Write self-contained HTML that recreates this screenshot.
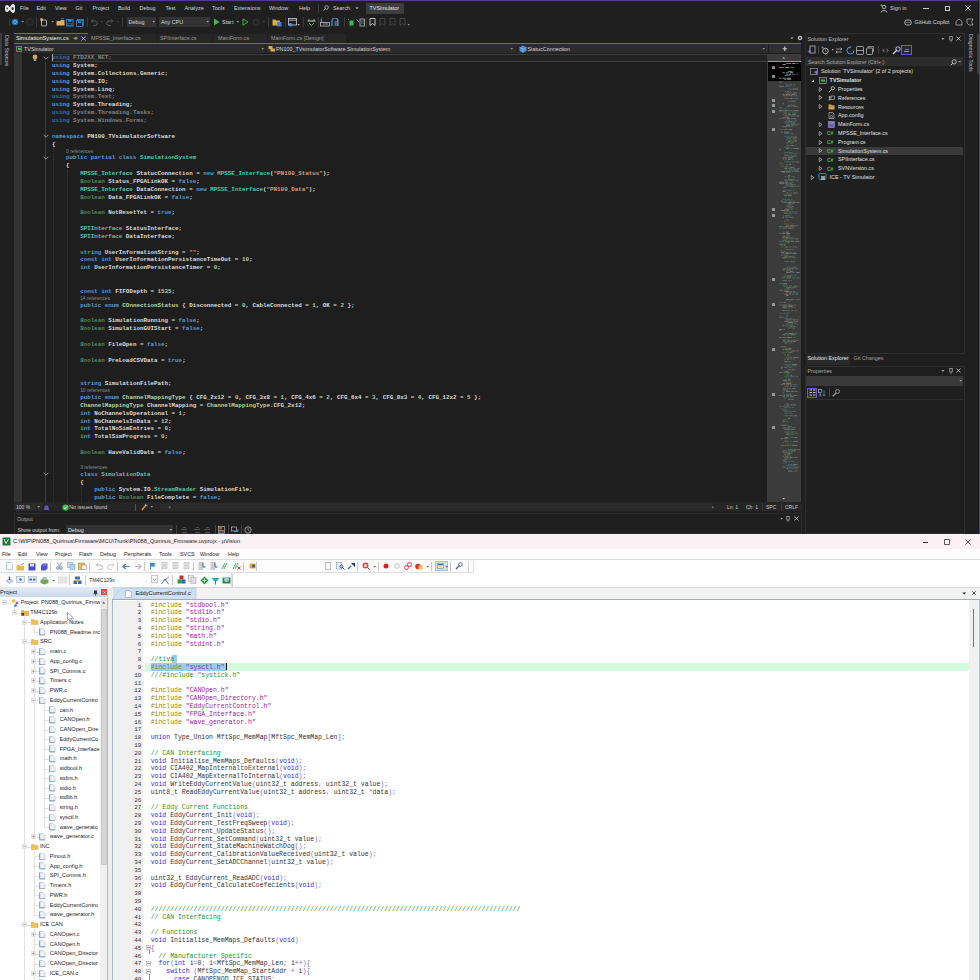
<!DOCTYPE html><html><head><meta charset="utf-8"><style>
*{margin:0;padding:0;box-sizing:border-box}
html,body{width:980px;height:980px;overflow:hidden;background:#1f1f1f}
.a{position:absolute}
.t{white-space:pre}
.u{font-family:"Liberation Mono",monospace;font-size:6.49px;line-height:7.8px}
.m{font-family:"Liberation Mono",monospace;font-size:5.86px;line-height:7.85px;font-weight:bold}
</style></head><body><div class="a" style="left:0px;top:0px;width:980px;height:534px;background:#1f1f1f;"></div>
<div class="a" style="left:0px;top:0px;width:980px;height:1px;background:#523a90;"></div>
<div class="a" style="left:979px;top:0px;width:1px;height:534px;background:#4e4191;"></div>
<div class="a" style="left:978px;top:0px;width:1px;height:534px;background:#1a1a1a;"></div>
<div class="a" style="left:0px;top:33px;width:2px;height:32px;background:#3d3d3d;"></div>
<div class="a" style="left:14px;top:53px;width:752px;height:449px;background:#1e1e1e;"></div>
<div class="a" style="left:14px;top:53px;width:8px;height:449px;background:#333333;"></div>
<div class="a" style="left:52px;top:54px;width:714.5px;height:7.6px;background:#222222;border-top:0.7px solid #3c3c3c;border-bottom:0.7px solid #3c3c3c;"></div>
<div class="a" style="left:14px;top:33px;width:74px;height:10px;background:#2b2b2b;"></div>
<div class="a" style="left:14px;top:33px;width:74px;height:1px;background:#6b58cc;"></div>
<div class="a" style="left:88px;top:34px;width:69px;height:9px;background:#262626;"></div>
<div class="a" style="left:158px;top:34px;width:54px;height:9px;background:#262626;"></div>
<div class="a" style="left:213px;top:34px;width:54px;height:9px;background:#262626;"></div>
<div class="a" style="left:268px;top:34px;width:78px;height:9px;background:#262626;"></div>
<div class="a" style="left:14px;top:43px;width:787px;height:1px;background:#6b58cc;"></div>
<div class="a" style="left:14px;top:44px;width:787px;height:9px;background:#2b2b2b;"></div>
<div class="a" style="left:766px;top:44px;width:35px;height:9px;background:#2f2f2f;"></div>
<div class="a" style="left:767px;top:54px;width:34px;height:448px;background:#3b3b3b;"></div>
<div class="a" style="left:768px;top:62px;width:33px;height:19px;background:#000000;"></div>
<div class="a" style="left:14px;top:502px;width:788px;height:9px;background:#252525;"></div>
<div class="a" style="left:14px;top:513px;width:788px;height:21px;background:#1f1f1f;border:1px solid #2d2d2d;"></div>
<div class="a" style="left:805px;top:33px;width:160px;height:321px;background:#1f1f1f;border:1px solid #2e2e2e;"></div>
<div class="a" style="left:806px;top:57px;width:157px;height:9px;background:#2d2d2d;"></div>
<div class="a" style="left:806px;top:146.5px;width:157px;height:8.5px;background:#3a3a3a;"></div>
<div class="a" style="left:805px;top:366px;width:160px;height:168px;background:#1f1f1f;border:1px solid #2e2e2e;"></div>
<div class="a" style="left:806px;top:376px;width:157px;height:10px;background:#3a3a3a;"></div>
<div class="a" style="left:0px;top:534px;width:980px;height:446px;background:#ffffff;"></div>
<div class="a" style="left:0px;top:534px;width:980px;height:14.5px;background:#fbf0f3;"></div>
<div class="a" style="left:0px;top:548.5px;width:980px;height:38.5px;background:#ffffff;"></div>
<div class="a" style="left:0px;top:560px;width:474px;height:13px;background:#fcfcfc;border-bottom:0.7px solid #dedede;border-right:0.7px solid #e0e0e0;"></div>
<div class="a" style="left:0px;top:573px;width:232px;height:13.5px;background:#fcfcfc;border-right:0.7px solid #e0e0e0;"></div>
<div class="a" style="left:0px;top:587px;width:980px;height:12.5px;background:#f2f2f2;"></div>
<div class="a" style="left:0px;top:587px;width:108px;height:10px;background:#d5e1ee;"></div>
<div class="a" style="left:0px;top:597px;width:108px;height:383px;background:#ffffff;"></div>
<div class="a" style="left:100px;top:598px;width:7px;height:382px;background:#e8e8e8;"></div>
<div class="a" style="left:112px;top:599px;width:868px;height:381px;background:#ffffff;border-left:1px solid #a0a0a0;border-top:1px solid #a0a0a0;"></div>
<div class="a" style="left:113px;top:600px;width:32px;height:380px;background:#f0f0f0;"></div>
<div class="a" style="left:113px;top:588px;width:83px;height:11px;background:#cfe0f3;"></div>
<div class="a t m" style="left:52.00px;top:54.18px"><span style="color:#3d6f99">using</span><span style="color:#858585"> FTD2XX_NET;</span></div>
<div class="a t m" style="left:52.00px;top:62.02px"><span style="color:#569CD6">using</span><span style="color:#DCDCDC"> System;</span></div>
<div class="a t m" style="left:52.00px;top:69.88px"><span style="color:#569CD6">using</span><span style="color:#DCDCDC"> System.Collections.Generic;</span></div>
<div class="a t m" style="left:52.00px;top:77.72px"><span style="color:#569CD6">using</span><span style="color:#DCDCDC"> System.IO;</span></div>
<div class="a t m" style="left:52.00px;top:85.57px"><span style="color:#569CD6">using</span><span style="color:#DCDCDC"> System.Linq;</span></div>
<div class="a t m" style="left:52.00px;top:93.42px"><span style="color:#3d6f99">using</span><span style="color:#858585"> System.Text;</span></div>
<div class="a t m" style="left:52.00px;top:101.27px"><span style="color:#569CD6">using</span><span style="color:#DCDCDC"> System.Threading;</span></div>
<div class="a t m" style="left:52.00px;top:109.12px"><span style="color:#3d6f99">using</span><span style="color:#858585"> System.Threading.Tasks;</span></div>
<div class="a t m" style="left:52.00px;top:116.97px"><span style="color:#3d6f99">using</span><span style="color:#858585"> System.Windows.Forms;</span></div>
<div class="a t m" style="left:52.00px;top:132.67px"><span style="color:#569CD6">namespace</span><span style="color:#DCDCDC"> PN100_TVsimulatorSoftware</span></div>
<div class="a t m" style="left:52.00px;top:140.52px"><span style="color:#DCDCDC">{</span></div>
<div class="a t" style="left:66.064px;top:148.66px;font-size:4.9px;line-height:5.88px;color:#8c8c8c;font-family:'Liberation Sans',sans-serif;">0 references</div>
<div class="a t m" style="left:66.06px;top:154.37px"><span style="color:#569CD6">public partial class</span><span style="color:#DCDCDC"> </span><span style="color:#4EC9B0">SimulationSystem</span></div>
<div class="a t m" style="left:66.06px;top:162.22px"><span style="color:#DCDCDC">{</span></div>
<div class="a t m" style="left:80.13px;top:170.07px"><span style="color:#4EC9B0">MPSSE_Interface</span><span style="color:#DCDCDC"> StatucConnection = </span><span style="color:#569CD6">new</span><span style="color:#DCDCDC"> </span><span style="color:#4EC9B0">MPSSE_Interface</span><span style="color:#DCDCDC">(</span><span style="color:#D69D85">&quot;PN100_Status&quot;</span><span style="color:#DCDCDC">);</span></div>
<div class="a t m" style="left:80.13px;top:177.92px"><span style="color:#578a5e">Boolean</span><span style="color:#DCDCDC"> Status_FPGALinkOK = </span><span style="color:#569CD6">false</span><span style="color:#DCDCDC">;</span></div>
<div class="a t m" style="left:80.13px;top:185.77px"><span style="color:#4EC9B0">MPSSE_Interface</span><span style="color:#DCDCDC"> DataConnection = </span><span style="color:#569CD6">new</span><span style="color:#DCDCDC"> </span><span style="color:#4EC9B0">MPSSE_Interface</span><span style="color:#DCDCDC">(</span><span style="color:#D69D85">&quot;PN100_Data&quot;</span><span style="color:#DCDCDC">);</span></div>
<div class="a t m" style="left:80.13px;top:193.62px"><span style="color:#578a5e">Boolean</span><span style="color:#DCDCDC"> Data_FPGALinkOK = </span><span style="color:#569CD6">false</span><span style="color:#DCDCDC">;</span></div>
<div class="a t m" style="left:80.13px;top:209.32px"><span style="color:#578a5e">Boolean</span><span style="color:#DCDCDC"> NotResetYet = </span><span style="color:#569CD6">true</span><span style="color:#DCDCDC">;</span></div>
<div class="a t m" style="left:80.13px;top:225.02px"><span style="color:#4EC9B0">SPIInterface</span><span style="color:#DCDCDC"> StatusInterface;</span></div>
<div class="a t m" style="left:80.13px;top:232.87px"><span style="color:#4EC9B0">SPIInterface</span><span style="color:#DCDCDC"> DataInterface;</span></div>
<div class="a t m" style="left:80.13px;top:248.57px"><span style="color:#569CD6">string</span><span style="color:#DCDCDC"> UserInformationString = </span><span style="color:#D69D85">&quot;&quot;</span><span style="color:#DCDCDC">;</span></div>
<div class="a t m" style="left:80.13px;top:256.42px"><span style="color:#569CD6">const int</span><span style="color:#DCDCDC"> UserInformationPersistanceTimeOut = </span><span style="color:#B5CEA8">10</span><span style="color:#DCDCDC">;</span></div>
<div class="a t m" style="left:80.13px;top:264.27px"><span style="color:#569CD6">int</span><span style="color:#DCDCDC"> UserInformationPersistanceTimer = </span><span style="color:#B5CEA8">0</span><span style="color:#DCDCDC">;</span></div>
<div class="a t m" style="left:80.13px;top:287.82px"><span style="color:#569CD6">const int</span><span style="color:#DCDCDC"> FIFODepth = </span><span style="color:#B5CEA8">1535</span><span style="color:#DCDCDC">;</span></div>
<div class="a t" style="left:80.128px;top:295.96px;font-size:4.9px;line-height:5.88px;color:#8c8c8c;font-family:'Liberation Sans',sans-serif;">14 references</div>
<div class="a t m" style="left:80.13px;top:301.67px"><span style="color:#569CD6">public enum</span><span style="color:#DCDCDC"> </span><span style="color:#B8D7A3">COnnectionStatus</span><span style="color:#DCDCDC"> { Disconnected = </span><span style="color:#B5CEA8">0</span><span style="color:#DCDCDC">, CableConnected = </span><span style="color:#B5CEA8">1</span><span style="color:#DCDCDC">, OK = </span><span style="color:#B5CEA8">2</span><span style="color:#DCDCDC"> };</span></div>
<div class="a t m" style="left:80.13px;top:317.38px"><span style="color:#578a5e">Boolean</span><span style="color:#DCDCDC"> SimulationRunning = </span><span style="color:#569CD6">false</span><span style="color:#DCDCDC">;</span></div>
<div class="a t m" style="left:80.13px;top:325.23px"><span style="color:#578a5e">Boolean</span><span style="color:#DCDCDC"> SimulationGUIStart = </span><span style="color:#569CD6">false</span><span style="color:#DCDCDC">;</span></div>
<div class="a t m" style="left:80.13px;top:340.93px"><span style="color:#578a5e">Boolean</span><span style="color:#DCDCDC"> FileOpen = </span><span style="color:#569CD6">false</span><span style="color:#DCDCDC">;</span></div>
<div class="a t m" style="left:80.13px;top:356.63px"><span style="color:#578a5e">Boolean</span><span style="color:#DCDCDC"> PreLoadCSVData = </span><span style="color:#569CD6">true</span><span style="color:#DCDCDC">;</span></div>
<div class="a t m" style="left:80.13px;top:380.18px"><span style="color:#569CD6">string</span><span style="color:#DCDCDC"> SimulationFilePath;</span></div>
<div class="a t" style="left:80.128px;top:388.31px;font-size:4.9px;line-height:5.88px;color:#8c8c8c;font-family:'Liberation Sans',sans-serif;">10 references</div>
<div class="a t m" style="left:80.13px;top:394.03px"><span style="color:#569CD6">public enum</span><span style="color:#DCDCDC"> </span><span style="color:#B8D7A3">ChannelMappingType</span><span style="color:#DCDCDC"> { CFG_2x12 = </span><span style="color:#B5CEA8">0</span><span style="color:#DCDCDC">, CFG_3x8 = </span><span style="color:#B5CEA8">1</span><span style="color:#DCDCDC">, CFG_4x6 = </span><span style="color:#B5CEA8">2</span><span style="color:#DCDCDC">, CFG_6x4 = </span><span style="color:#B5CEA8">3</span><span style="color:#DCDCDC">, CFG_8x3 = </span><span style="color:#B5CEA8">4</span><span style="color:#DCDCDC">, CFG_12x2 = </span><span style="color:#B5CEA8">5</span><span style="color:#DCDCDC"> };</span></div>
<div class="a t m" style="left:80.13px;top:401.88px"><span style="color:#B8D7A3">ChannelMappingType</span><span style="color:#DCDCDC"> ChannelMapping = </span><span style="color:#B8D7A3">ChannelMappingType</span><span style="color:#DCDCDC">.CFG_2x12;</span></div>
<div class="a t m" style="left:80.13px;top:409.73px"><span style="color:#569CD6">int</span><span style="color:#DCDCDC"> NoChannelsOperational = </span><span style="color:#B5CEA8">1</span><span style="color:#DCDCDC">;</span></div>
<div class="a t m" style="left:80.13px;top:417.58px"><span style="color:#569CD6">int</span><span style="color:#DCDCDC"> NoChannelsInData = </span><span style="color:#B5CEA8">12</span><span style="color:#DCDCDC">;</span></div>
<div class="a t m" style="left:80.13px;top:425.43px"><span style="color:#569CD6">int</span><span style="color:#DCDCDC"> TotalNoSimEntries = </span><span style="color:#B5CEA8">0</span><span style="color:#DCDCDC">;</span></div>
<div class="a t m" style="left:80.13px;top:433.28px"><span style="color:#569CD6">int</span><span style="color:#DCDCDC"> TotalSimProgress = </span><span style="color:#B5CEA8">0</span><span style="color:#DCDCDC">;</span></div>
<div class="a t m" style="left:80.13px;top:448.98px"><span style="color:#578a5e">Boolean</span><span style="color:#DCDCDC"> HaveValidData = </span><span style="color:#569CD6">false</span><span style="color:#DCDCDC">;</span></div>
<div class="a t" style="left:80.128px;top:464.96px;font-size:4.9px;line-height:5.88px;color:#8c8c8c;font-family:'Liberation Sans',sans-serif;">3 references</div>
<div class="a t m" style="left:80.13px;top:470.68px"><span style="color:#569CD6">class</span><span style="color:#DCDCDC"> </span><span style="color:#4EC9B0">SimulationData</span></div>
<div class="a t m" style="left:80.13px;top:478.53px"><span style="color:#DCDCDC">{</span></div>
<div class="a t m" style="left:94.19px;top:486.38px"><span style="color:#569CD6">public</span><span style="color:#DCDCDC"> System.IO.</span><span style="color:#4EC9B0">StreamReader</span><span style="color:#DCDCDC"> SimulationFile;</span></div>
<div class="a t m" style="left:94.19px;top:494.23px"><span style="color:#569CD6">public</span><span style="color:#DCDCDC"> </span><span style="color:#578a5e">Boolean</span><span style="color:#DCDCDC"> FileComplete = </span><span style="color:#569CD6">false</span><span style="color:#DCDCDC">;</span></div>
<svg class="a" style="left:4px;top:3px" width="12" height="11" viewBox="0 0 12 11"><path d="M3 2 C4.2 2 5 3.2 5.8 4.2 C6.6 3 7.5 1 9 1 C10.2 1 11 2 11 3.5 V7.5 C11 9 10.2 10 9 10 C7.5 10 6.6 8 5.8 6.8 C5 7.8 4.2 9 3 9 C1.8 9 1 8 1 6.6 V4.4 C1 3 1.8 2 3 2 Z" fill="#e8e8e8"/><ellipse cx="3.2" cy="5.5" rx="0.9" ry="1.1" fill="#555"/><ellipse cx="8.6" cy="5.5" rx="1.1" ry="1.6" fill="#2a2a2a"/></svg>
<div class="a t" style="left:20px;top:5.06px;font-size:5.4px;line-height:6.48px;color:#d6d6d6;font-family:'Liberation Sans',sans-serif;">File</div>
<div class="a t" style="left:36.5px;top:5.06px;font-size:5.4px;line-height:6.48px;color:#d6d6d6;font-family:'Liberation Sans',sans-serif;">Edit</div>
<div class="a t" style="left:55px;top:5.06px;font-size:5.4px;line-height:6.48px;color:#d6d6d6;font-family:'Liberation Sans',sans-serif;">View</div>
<div class="a t" style="left:75.5px;top:5.06px;font-size:5.4px;line-height:6.48px;color:#d6d6d6;font-family:'Liberation Sans',sans-serif;">Git</div>
<div class="a t" style="left:92.5px;top:5.06px;font-size:5.4px;line-height:6.48px;color:#d6d6d6;font-family:'Liberation Sans',sans-serif;">Project</div>
<div class="a t" style="left:118px;top:5.06px;font-size:5.4px;line-height:6.48px;color:#d6d6d6;font-family:'Liberation Sans',sans-serif;">Build</div>
<div class="a t" style="left:139.5px;top:5.06px;font-size:5.4px;line-height:6.48px;color:#d6d6d6;font-family:'Liberation Sans',sans-serif;">Debug</div>
<div class="a t" style="left:165.5px;top:5.06px;font-size:5.4px;line-height:6.48px;color:#d6d6d6;font-family:'Liberation Sans',sans-serif;">Test</div>
<div class="a t" style="left:184.5px;top:5.06px;font-size:5.4px;line-height:6.48px;color:#d6d6d6;font-family:'Liberation Sans',sans-serif;">Analyze</div>
<div class="a t" style="left:212px;top:5.06px;font-size:5.4px;line-height:6.48px;color:#d6d6d6;font-family:'Liberation Sans',sans-serif;">Tools</div>
<div class="a t" style="left:234px;top:5.06px;font-size:5.4px;line-height:6.48px;color:#d6d6d6;font-family:'Liberation Sans',sans-serif;">Extensions</div>
<div class="a t" style="left:269px;top:5.06px;font-size:5.4px;line-height:6.48px;color:#d6d6d6;font-family:'Liberation Sans',sans-serif;">Window</div>
<div class="a t" style="left:299px;top:5.06px;font-size:5.4px;line-height:6.48px;color:#d6d6d6;font-family:'Liberation Sans',sans-serif;">Help</div>
<div class="a" style="left:318px;top:4px;width:1px;height:9px;background:#3a3a3a;"></div>
<svg class="a" style="left:323px;top:5px" width="6" height="6" viewBox="0 0 6 6"><circle cx="3.6" cy="2.4" r="1.8" fill="none" stroke="#cfcfcf" stroke-width="0.7"/><path d="M2.3 3.7 L0.6 5.4" stroke="#cfcfcf" stroke-width="0.8"/></svg>
<div class="a t" style="left:333px;top:5.06px;font-size:5.4px;line-height:6.48px;color:#d6d6d6;font-family:'Liberation Sans',sans-serif;">Search</div>
<svg class="a" style="left:355.00px;top:6.30px" width="4.00" height="4.00"><path d="M0.40 1.40 L3.60 1.40 L2.00 3.00 Z" fill="#d6d6d6" stroke="none" stroke-width="0.60"/></svg>
<div class="a" style="left:365.5px;top:3px;width:38.5px;height:11px;background:#3d3d3d;border-radius:1px;"></div>
<div class="a t" style="left:369.5px;top:5.26px;font-size:5.4px;line-height:6.48px;color:#e6e6e6;font-family:'Liberation Sans',sans-serif;">TVSimulator</div>
<svg class="a" style="left:880px;top:4px" width="8" height="9" viewBox="0 0 8 9"><circle cx="4" cy="3" r="1.8" fill="none" stroke="#d0d0d0" stroke-width="0.8"/><path d="M1 8.5 C1.5 6 6.5 6 7 8.5" fill="none" stroke="#d0d0d0" stroke-width="0.8"/><circle cx="1.5" cy="1.2" r="1" fill="#3fb950"/></svg>
<div class="a t" style="left:890px;top:5.06px;font-size:5.4px;line-height:6.48px;color:#d6d6d6;font-family:'Liberation Sans',sans-serif;">Sign in</div>
<div class="a" style="left:923px;top:8px;width:6px;height:0.6px;background:#c8c8c8;"></div>
<div class="a" style="left:945px;top:5.5px;width:5px;height:5px;border:0.6px solid #c8c8c8;"></div>
<svg class="a" style="left:965px;top:5px" width="6" height="6" viewBox="0 0 6 6"><path d="M0.3 0.3 L5.7 5.7 M5.7 0.3 L0.3 5.7" stroke="#d0d0d0" stroke-width="0.8"/></svg>
<svg class="a" style="left:904px;top:18px" width="8" height="8" viewBox="0 0 8 8"><rect x="0.8" y="2" width="6.4" height="5" rx="2" fill="none" stroke="#cfcfcf" stroke-width="0.8"/><circle cx="3" cy="4.5" r="0.6" fill="#cfcfcf"/><circle cx="5" cy="4.5" r="0.6" fill="#cfcfcf"/></svg>
<div class="a t" style="left:914.5px;top:18.96px;font-size:5.4px;line-height:6.48px;color:#d6d6d6;font-family:'Liberation Sans',sans-serif;">GitHub Copilot</div>
<svg class="a" style="left:955px;top:18px" width="8" height="8" viewBox="0 0 8 8"><path d="M1 7 V3.5 L4 1 L7 3.5 V7 Z" fill="none" stroke="#bdbdbd" stroke-width="0.7"/></svg>
<svg class="a" style="left:966px;top:18px" width="8" height="8" viewBox="0 0 8 8"><path d="M1 1 H7 L5.5 4 L7 7 H3 L1 5 Z" fill="none" stroke="#bdbdbd" stroke-width="0.7"/></svg>
<div class="a" style="left:9px;top:18px;width:1px;height:8px;background:#3a3a3a;"></div>
<svg class="a" style="left:11px;top:18px" width="8" height="8"><circle cx="4" cy="4" r="3.3" fill="#1e6fb5"/><circle cx="4" cy="4" r="1.5" fill="none" stroke="#9cd0ff" stroke-width="0.6"/></svg>
<svg class="a" style="left:20.50px;top:20.25px" width="3.50" height="3.50"><path d="M0.35 1.22 L3.15 1.22 L1.75 2.62 Z" fill="#bbb" stroke="none" stroke-width="0.60"/></svg>
<svg class="a" style="left:26px;top:18px" width="8" height="8"><circle cx="4" cy="4" r="3.3" fill="none" stroke="#3d3d3d" stroke-width="0.8"/></svg>
<div class="a" style="left:36px;top:17px;width:1px;height:10px;background:#3a3a3a;"></div>
<svg class="a" style="left:39px;top:17px" width="9" height="10"><circle cx="2.5" cy="2.5" r="1.5" fill="#c9a46a"/><rect x="2.5" y="3" width="5" height="6" rx="1" fill="none" stroke="#d9d9d9" stroke-width="0.8"/></svg>
<svg class="a" style="left:50.50px;top:20.25px" width="3.50" height="3.50"><path d="M0.35 1.22 L3.15 1.22 L1.75 2.62 Z" fill="#bbb" stroke="none" stroke-width="0.60"/></svg>
<svg class="a" style="left:56px;top:18px" width="9" height="8"><path d="M0.5 3 H4 L5 2 H8.5 V7.5 H0.5 Z" fill="#dcb35c"/><path d="M5 1 L8 0" stroke="#5aa0e6" stroke-width="0.8"/></svg>
<svg class="a" style="left:66px;top:18.5px" width="8" height="8"><rect x="0.5" y="0.5" width="6.5" height="6.5" fill="none" stroke="#2f8ad8" stroke-width="0.9"/><rect x="2" y="0.8" width="3.5" height="2" fill="#2f8ad8"/><rect x="2" y="4.3" width="3.5" height="2.5" fill="none" stroke="#2f8ad8" stroke-width="0.5"/></svg>
<svg class="a" style="left:76px;top:18.5px" width="8" height="8"><rect x="1.5" y="0.5" width="6" height="6" fill="none" stroke="#2f8ad8" stroke-width="0.8"/><rect x="0.5" y="1.5" width="6" height="6" fill="#1f1f1f" stroke="#2f8ad8" stroke-width="0.8"/><rect x="2" y="2.3" width="3" height="1.6" fill="#2f8ad8"/></svg>
<div class="a" style="left:87px;top:17px;width:1px;height:10px;background:#3a3a3a;"></div>
<svg class="a" style="left:90px;top:18px" width="8" height="8"><path d="M1.5 3 H5 A2.3 2.3 0 0 1 5 7.6 H3" fill="none" stroke="#6b6b6b" stroke-width="0.8"/><path d="M3 1.3 L1.3 3 L3 4.7" fill="none" stroke="#6b6b6b" stroke-width="0.8"/></svg>
<svg class="a" style="left:100.00px;top:20.25px" width="3.50" height="3.50"><path d="M0.35 1.22 L3.15 1.22 L1.75 2.62 Z" fill="#555" stroke="none" stroke-width="0.60"/></svg>
<svg class="a" style="left:106px;top:18px" width="8" height="8"><path d="M6.5 3 H3 A2.3 2.3 0 0 0 3 7.6 H5" fill="none" stroke="#6b6b6b" stroke-width="0.8"/><path d="M5 1.3 L6.7 3 L5 4.7" fill="none" stroke="#6b6b6b" stroke-width="0.8"/></svg>
<svg class="a" style="left:116.00px;top:20.25px" width="3.50" height="3.50"><path d="M0.35 1.22 L3.15 1.22 L1.75 2.62 Z" fill="#555" stroke="none" stroke-width="0.60"/></svg>
<div class="a" style="left:122px;top:17px;width:1px;height:10px;background:#3a3a3a;"></div>
<div class="a" style="left:126.5px;top:17px;width:29.5px;height:10px;background:#333333;"></div>
<div class="a t" style="left:128.5px;top:18.76px;font-size:5.4px;line-height:6.48px;color:#d6d6d6;font-family:'Liberation Sans',sans-serif;">Debug</div>
<svg class="a" style="left:151.50px;top:20.25px" width="3.50" height="3.50"><path d="M0.35 1.22 L3.15 1.22 L1.75 2.62 Z" fill="#ccc" stroke="none" stroke-width="0.60"/></svg>
<div class="a" style="left:159px;top:17px;width:51px;height:10px;background:#333333;"></div>
<div class="a t" style="left:161px;top:18.76px;font-size:5.4px;line-height:6.48px;color:#d6d6d6;font-family:'Liberation Sans',sans-serif;">Any CPU</div>
<svg class="a" style="left:205.50px;top:20.25px" width="3.50" height="3.50"><path d="M0.35 1.22 L3.15 1.22 L1.75 2.62 Z" fill="#ccc" stroke="none" stroke-width="0.60"/></svg>
<svg class="a" style="left:213px;top:18px" width="7" height="8"><path d="M1 0.5 L6.5 4 L1 7.5 Z" fill="#3fb950"/></svg>
<div class="a t" style="left:222px;top:18.76px;font-size:5.4px;line-height:6.48px;color:#d6d6d6;font-family:'Liberation Sans',sans-serif;">Start</div>
<svg class="a" style="left:236.00px;top:20.25px" width="3.50" height="3.50"><path d="M0.35 1.22 L3.15 1.22 L1.75 2.62 Z" fill="#ccc" stroke="none" stroke-width="0.60"/></svg>
<svg class="a" style="left:242px;top:18px" width="7" height="8"><path d="M1 0.8 L6 4 L1 7.2 Z" fill="none" stroke="#3fb950" stroke-width="0.9"/></svg>
<svg class="a" style="left:252px;top:18px" width="8" height="8"><circle cx="4" cy="4.5" r="3" fill="none" stroke="#444" stroke-width="0.8"/></svg>
<svg class="a" style="left:262.00px;top:20.25px" width="3.50" height="3.50"><path d="M0.35 1.22 L3.15 1.22 L1.75 2.62 Z" fill="#555" stroke="none" stroke-width="0.60"/></svg>
<div class="a" style="left:268px;top:17px;width:1px;height:10px;background:#3a3a3a;"></div>
<div class="a" style="left:268px;top:17px;width:0.7px;height:10px;background:#3a3a3a;"></div>
<svg class="a" style="left:272px;top:18px" width="10" height="9"><path d="M0.5 1.5 H3.5 L4.3 2.5 H8 V7.5 H0.5 Z" fill="#d8a94f"/><rect x="5" y="4" width="4.5" height="4.5" fill="#3d7fd0"/></svg>
<div class="a" style="left:285px;top:17px;width:0.7px;height:10px;background:#3a3a3a;"></div>
<svg class="a" style="left:288px;top:18px" width="9" height="9"><rect x="0.5" y="0.5" width="8" height="6.5" fill="none" stroke="#cfcfcf" stroke-width="0.8"/><path d="M0.5 2.2 H8.5" stroke="#cfcfcf" stroke-width="0.8"/><circle cx="2.5" cy="6.8" r="1.8" fill="#3d9be9"/></svg>
<svg class="a" style="left:296.50px;top:22.90px" width="3.20" height="3.20"><path d="M0.32 1.12 L2.88 1.12 L1.60 2.40 Z" fill="#bbb" stroke="none" stroke-width="0.60"/></svg>
<div class="a" style="left:303px;top:17px;width:0.7px;height:10px;background:#3a3a3a;"></div>
<svg class="a" style="left:307px;top:18px" width="9" height="9"><path d="M0.5 3 H8.5" stroke="#cfcfcf" stroke-width="1"/><path d="M2 1 V3 M7 1 V3" stroke="#cfcfcf" stroke-width="0.7"/><path d="M2 5 L4.5 7.5 L7 5" fill="none" stroke="#3fb950" stroke-width="1"/></svg>
<div class="a" style="left:318px;top:17px;width:0.7px;height:10px;background:#3a3a3a;"></div>
<svg class="a" style="left:320px;top:18px" width="10" height="9"><path d="M1.5 0.5 V4" stroke="#3d9be9" stroke-width="1.2"/><rect x="0.5" y="4.5" width="9" height="3.5" fill="none" stroke="#cfcfcf" stroke-width="0.7"/><path d="M3 6 H8" stroke="#cfcfcf" stroke-width="0.6"/></svg>
<svg class="a" style="left:331px;top:18px" width="9" height="9"><path d="M1 8 V3 A3 3 0 0 1 7 3 V8" fill="none" stroke="#3d9be9" stroke-width="1.2"/><path d="M4.2 3 V8 M6 3 V8" stroke="#cfcfcf" stroke-width="0.6"/></svg>
<div class="a" style="left:344px;top:17px;width:0.7px;height:10px;background:#3a3a3a;"></div>
<svg class="a" style="left:347px;top:18px" width="8" height="9"><path d="M1 1 L2 2" stroke="#cfcfcf" stroke-width="0.6"/><rect x="2.5" y="2.5" width="4" height="5" fill="#3fb950"/></svg>
<svg class="a" style="left:356px;top:18px" width="9" height="9"><path d="M0.5 1.5 L3 4" stroke="#3d9be9" stroke-width="1"/><rect x="4" y="1" width="4.5" height="7" fill="none" stroke="#cfcfcf" stroke-width="0.7"/><path d="M5 3 H8 M5 5 H8" stroke="#cfcfcf" stroke-width="0.5"/></svg>
<div class="a" style="left:366px;top:17px;width:0.7px;height:10px;background:#3a3a3a;"></div>
<svg class="a" style="left:369px;top:18px" width="7" height="8"><path d="M1 0.5 H6 V7.5 L3.5 5.5 L1 7.5 Z" fill="none" stroke="#cfcfcf" stroke-width="0.9"/></svg>
<svg class="a" style="left:379px;top:18px" width="7" height="8"><path d="M1 0.5 H6 V7.5 L3.5 5.5 L1 7.5 Z" fill="none" stroke="#4a4a4a" stroke-width="0.9"/></svg>
<svg class="a" style="left:389px;top:18px" width="7" height="8"><path d="M1 0.5 H6 V7.5 L3.5 5.5 L1 7.5 Z" fill="none" stroke="#4a4a4a" stroke-width="0.9"/></svg>
<svg class="a" style="left:399px;top:18px" width="7" height="8"><path d="M1 0.5 H6 V7.5 L3.5 5.5 L1 7.5 Z" fill="none" stroke="#4a4a4a" stroke-width="0.9"/></svg>
<svg class="a" style="left:407.00px;top:22.90px" width="3.20" height="3.20"><path d="M0.32 1.12 L2.88 1.12 L1.60 2.40 Z" fill="#999" stroke="none" stroke-width="0.60"/></svg>
<div class="a t" style="left:16px;top:35.18px;font-size:5.7px;line-height:6.84px;color:#f2f2f2;font-family:'Liberation Sans',sans-serif;">SimulationSystem.cs</div>
<svg class="a" style="left:73.00px;top:36.35px" width="4.50" height="4.50"><path d="M0.45 2.25 H2.25 M2.25 1.12 V3.38 M2.25 1.57 H4.05 V2.93 H2.25" fill="none" stroke="#ccc" stroke-width="0.60"/></svg>
<svg class="a" style="left:80.5px;top:36px" width="5" height="5"><path d="M0.5 0.5 L4.5 4.5 M4.5 0.5 L0.5 4.5" stroke="#d0d0d0" stroke-width="0.8"/></svg>
<div class="a t" style="left:91px;top:35.36px;font-size:5.4px;line-height:6.48px;color:#9a9a9a;font-family:'Liberation Sans',sans-serif;">MPSSE_Interface.cs</div>
<div class="a t" style="left:160px;top:35.36px;font-size:5.4px;line-height:6.48px;color:#9a9a9a;font-family:'Liberation Sans',sans-serif;">SPIInterface.cs</div>
<div class="a t" style="left:218px;top:35.36px;font-size:5.4px;line-height:6.48px;color:#9a9a9a;font-family:'Liberation Sans',sans-serif;">MainForm.cs</div>
<div class="a t" style="left:271px;top:35.36px;font-size:5.4px;line-height:6.48px;color:#9a9a9a;font-family:'Liberation Sans',sans-serif;">MainForm.cs [Design]</div>
<svg class="a" style="left:790.00px;top:36.40px" width="4.00" height="4.00"><path d="M0.40 1.40 L3.60 1.40 L2.00 3.00 Z" fill="#ccc" stroke="none" stroke-width="0.60"/></svg>
<svg class="a" style="left:797px;top:35px" width="6" height="6"><circle cx="3" cy="3" r="2.3" fill="#bdbdbd"/><circle cx="3" cy="3" r="0.9" fill="#1f1f1f"/></svg>
<div class="a" style="left:16px;top:45.5px;width:6px;height:6px;background:#3d3d3d;border:0.6px solid #777;"></div>
<div class="a" style="left:17.5px;top:47.5px;width:3px;height:2px;background:#3fb950;"></div>
<div class="a t" style="left:24px;top:45.56px;font-size:5.4px;line-height:6.48px;color:#d6d6d6;font-family:'Liberation Sans',sans-serif;">TVSimulator</div>
<svg class="a" style="left:261.00px;top:47.05px" width="3.50" height="3.50"><path d="M0.35 1.22 L3.15 1.22 L1.75 2.62 Z" fill="#bbb" stroke="none" stroke-width="0.60"/></svg>
<div class="a" style="left:265px;top:44px;width:1px;height:9px;background:#1f1f1f;"></div>
<svg class="a" style="left:268px;top:45px" width="8" height="8"><rect x="0.5" y="1" width="4" height="3" fill="#d8a94f"/><rect x="3" y="3.5" width="4" height="3" fill="#d8a94f"/><path d="M2.5 4 V6 H3" stroke="#d8a94f" stroke-width="0.6" fill="none"/></svg>
<div class="a t" style="left:276px;top:45.56px;font-size:5.4px;line-height:6.48px;color:#d6d6d6;font-family:'Liberation Sans',sans-serif;">PN100_TVsimulatorSoftware.SimulationSystem</div>
<svg class="a" style="left:510.00px;top:47.05px" width="3.50" height="3.50"><path d="M0.35 1.22 L3.15 1.22 L1.75 2.62 Z" fill="#bbb" stroke="none" stroke-width="0.60"/></svg>
<div class="a" style="left:517px;top:44px;width:1px;height:9px;background:#1f1f1f;"></div>
<svg class="a" style="left:519px;top:45px" width="8" height="8"><path d="M4 0.5 L7.5 2.5 V6 L4 7.8 L0.5 6 V2.5 Z" fill="#4a8fd6"/><path d="M0.5 2.5 L4 4.3 L7.5 2.5 M4 4.3 V7.8" stroke="#9ccaf5" stroke-width="0.5" fill="none"/></svg>
<div class="a t" style="left:527.5px;top:45.56px;font-size:5.4px;line-height:6.48px;color:#d6d6d6;font-family:'Liberation Sans',sans-serif;">StatucConnection</div>
<svg class="a" style="left:762.00px;top:47.05px" width="3.50" height="3.50"><path d="M0.35 1.22 L3.15 1.22 L1.75 2.62 Z" fill="#bbb" stroke="none" stroke-width="0.60"/></svg>
<div class="a" style="left:768px;top:44px;width:1px;height:9px;background:#1f1f1f;"></div>
<svg class="a" style="left:781.50px;top:45.85px" width="5.50" height="5.50"><path d="M2.75 0.55 V4.95 M0.55 2.75 H4.95" fill="none" stroke="#c8c8c8" stroke-width="1.21"/></svg>
<svg class="a" style="left:781.50px;top:55.75px" width="3.50" height="3.50"><path d="M0.35 2.62 L3.15 2.62 L1.75 0.88 Z" fill="#cfcfcf" stroke="none" stroke-width="0.60"/></svg>
<svg class="a" style="left:781.50px;top:496.75px" width="3.50" height="3.50"><path d="M0.35 0.88 L3.15 0.88 L1.75 2.62 Z" fill="#cfcfcf" stroke="none" stroke-width="0.60"/></svg>
<div class="a t" style="left:2px;top:35px;width:10px;height:40px;"><div style="position:absolute;left:0;top:0;transform-origin:0 0;transform:translate(9px,0) rotate(90deg);font-family:'Liberation Sans';font-size:5.2px;line-height:8px;color:#bfbfbf;white-space:pre">Data Sources</div></div>
<div class="a t" style="left:966px;top:34px;width:10px;height:40px;"><div style="position:absolute;left:0;top:0;transform-origin:0 0;transform:translate(9px,0) rotate(90deg);font-family:'Liberation Sans';font-size:5.2px;line-height:8px;color:#bfbfbf;white-space:pre">Diagnostic Tools</div></div>
<div class="a" style="left:977px;top:34px;width:2px;height:40px;background:#3d3d3d;"></div>
<div class="a" style="left:52px;top:54.2px;width:0.5px;height:7.2px;background:#a8a8a8;"></div>
<svg class="a" style="left:31.5px;top:54px" width="6" height="8"><circle cx="3" cy="3" r="2.4" fill="#c9a46a"/><rect x="1.8" y="5" width="2.4" height="2" fill="#9a9a9a"/></svg>
<div class="a" style="left:45.3px;top:62px;width:0.6px;height:440px;background:#3c3c3c;"></div>
<svg class="a" style="left:42.5px;top:55.7px" width="6" height="4"><path d="M0.6 0.8 L3 3.2 L5.4 0.8" fill="none" stroke="#bdbdbd" stroke-width="0.7"/></svg>
<svg class="a" style="left:42.5px;top:134.2px" width="6" height="4"><path d="M0.6 0.8 L3 3.2 L5.4 0.8" fill="none" stroke="#bdbdbd" stroke-width="0.7"/></svg>
<svg class="a" style="left:42.5px;top:155.9px" width="6" height="4"><path d="M0.6 0.8 L3 3.2 L5.4 0.8" fill="none" stroke="#bdbdbd" stroke-width="0.7"/></svg>
<svg class="a" style="left:42.5px;top:471.9px" width="6" height="4"><path d="M0.6 0.8 L3 3.2 L5.4 0.8" fill="none" stroke="#bdbdbd" stroke-width="0.7"/></svg>
<div class="a" style="left:53.2px;top:148px;width:0;height:354px;border-left:0.7px dotted #363636"></div>
<div class="a" style="left:67.0px;top:170px;width:0;height:332px;border-left:0.7px dotted #363636"></div>
<div class="a" style="left:80.8px;top:486px;width:0;height:16px;border-left:0.7px dotted #363636"></div>
<div class="a" style="left:768px;top:60.5px;width:33px;height:1.5px;background:#9a9a9a;"></div>
<div class="a" style="left:768px;top:62px;width:33px;height:19px;background:#000000;"></div>
<svg class="a" style="left:767px;top:54px" width="34" height="448"><rect x="19.2" y="9.0" width="5.2" height="0.75" fill="#D69D85" opacity="0.9"/><rect x="25.3" y="9.0" width="3.1" height="0.75" fill="#DCDCDC" opacity="0.9"/><rect x="29.3" y="9.0" width="2.0" height="0.75" fill="#57A64A" opacity="0.9"/><rect x="15.6" y="10.3" width="3.1" height="0.75" fill="#DCDCDC" opacity="0.9"/><rect x="12.0" y="13.0" width="5.4" height="0.75" fill="#D69D85" opacity="0.9"/><rect x="18.3" y="13.0" width="4.0" height="0.75" fill="#DCDCDC" opacity="0.9"/><rect x="23.2" y="13.0" width="3.9" height="0.75" fill="#57A64A" opacity="0.9"/><rect x="21.0" y="17.1" width="4.5" height="0.75" fill="#86C691" opacity="0.9"/><rect x="15.6" y="18.4" width="2.2" height="0.75" fill="#DCDCDC" opacity="0.9"/><rect x="18.7" y="18.4" width="3.3" height="0.75" fill="#4EC9B0" opacity="0.9"/><rect x="23.0" y="18.4" width="3.2" height="0.75" fill="#DCDCDC" opacity="0.9"/><rect x="19.2" y="19.8" width="1.6" height="0.75" fill="#DCDCDC" opacity="0.9"/><rect x="21.7" y="19.8" width="2.6" height="0.75" fill="#DCDCDC" opacity="0.9"/><rect x="25.1" y="19.8" width="3.4" height="0.75" fill="#569CD6" opacity="0.9"/><rect x="29.4" y="19.8" width="1.5" height="0.75" fill="#4EC9B0" opacity="0.9"/><rect x="17.4" y="21.1" width="5.3" height="0.75" fill="#569CD6" opacity="0.9"/><rect x="12.0" y="23.8" width="2.8" height="0.75" fill="#B5CEA8" opacity="0.9"/><rect x="15.7" y="23.8" width="3.0" height="0.75" fill="#DCDCDC" opacity="0.9"/><rect x="19.6" y="23.8" width="4.5" height="0.75" fill="#DCDCDC" opacity="0.9"/><rect x="17.4" y="25.2" width="1.3" height="0.75" fill="#B5CEA8" opacity="0.9"/><rect x="19.6" y="25.2" width="4.5" height="0.75" fill="#4EC9B0" opacity="0.9"/><rect x="12.0" y="27.9" width="3.2" height="0.75" fill="#D69D85" opacity="0.45"/><rect x="19.2" y="30.6" width="2.0" height="0.75" fill="#DCDCDC" opacity="0.45"/><rect x="22.1" y="30.6" width="3.0" height="0.75" fill="#B5CEA8" opacity="0.45"/><rect x="26.0" y="30.6" width="1.7" height="0.75" fill="#B5CEA8" opacity="0.45"/><rect x="12.0" y="31.9" width="4.9" height="0.75" fill="#DCDCDC" opacity="0.45"/><rect x="17.8" y="31.9" width="5.5" height="0.75" fill="#569CD6" opacity="0.45"/><rect x="21.0" y="34.6" width="3.7" height="0.75" fill="#569CD6" opacity="0.45"/><rect x="25.6" y="34.6" width="5.5" height="0.75" fill="#DCDCDC" opacity="0.45"/><rect x="17.4" y="37.3" width="1.5" height="0.75" fill="#4EC9B0" opacity="0.45"/><rect x="19.8" y="37.3" width="2.1" height="0.75" fill="#DCDCDC" opacity="0.45"/><rect x="22.8" y="37.3" width="1.3" height="0.75" fill="#86C691" opacity="0.45"/><rect x="19.2" y="38.7" width="5.3" height="0.75" fill="#D69D85" opacity="0.45"/><rect x="25.4" y="38.7" width="4.8" height="0.75" fill="#DCDCDC" opacity="0.45"/><rect x="15.6" y="40.0" width="1.9" height="0.75" fill="#DCDCDC" opacity="0.45"/><rect x="18.4" y="40.0" width="4.7" height="0.75" fill="#DCDCDC" opacity="0.45"/><rect x="24.0" y="40.0" width="4.3" height="0.75" fill="#DCDCDC" opacity="0.45"/><rect x="15.6" y="41.4" width="5.3" height="0.75" fill="#D69D85" opacity="0.45"/><rect x="21.8" y="41.4" width="3.8" height="0.75" fill="#B5CEA8" opacity="0.45"/><rect x="26.5" y="41.4" width="1.4" height="0.75" fill="#4EC9B0" opacity="0.45"/><rect x="28.8" y="41.4" width="1.4" height="0.75" fill="#DCDCDC" opacity="0.45"/><rect x="17.4" y="44.1" width="4.7" height="0.75" fill="#D69D85" opacity="0.45"/><rect x="23.0" y="44.1" width="2.5" height="0.75" fill="#DCDCDC" opacity="0.45"/><rect x="26.4" y="44.1" width="5.2" height="0.75" fill="#4EC9B0" opacity="0.45"/><rect x="21.0" y="46.8" width="1.5" height="0.75" fill="#DCDCDC" opacity="0.45"/><rect x="23.4" y="46.8" width="5.1" height="0.75" fill="#DCDCDC" opacity="0.45"/><rect x="15.6" y="49.5" width="1.4" height="0.75" fill="#DCDCDC" opacity="0.45"/><rect x="21.0" y="50.8" width="1.6" height="0.75" fill="#DCDCDC" opacity="0.45"/><rect x="23.5" y="50.8" width="5.0" height="0.75" fill="#86C691" opacity="0.45"/><rect x="19.2" y="52.2" width="5.3" height="0.75" fill="#569CD6" opacity="0.45"/><rect x="25.4" y="52.2" width="5.2" height="0.75" fill="#D69D85" opacity="0.45"/><rect x="12.0" y="53.5" width="3.8" height="0.75" fill="#4EC9B0" opacity="0.45"/><rect x="17.4" y="54.9" width="1.8" height="0.75" fill="#4EC9B0" opacity="0.45"/><rect x="20.1" y="54.9" width="1.5" height="0.75" fill="#57A64A" opacity="0.45"/><rect x="12.0" y="56.2" width="4.4" height="0.75" fill="#DCDCDC" opacity="0.45"/><rect x="17.3" y="56.2" width="4.6" height="0.75" fill="#86C691" opacity="0.45"/><rect x="22.8" y="56.2" width="2.7" height="0.75" fill="#D69D85" opacity="0.45"/><rect x="26.4" y="56.2" width="5.1" height="0.75" fill="#B5CEA8" opacity="0.45"/><rect x="12.0" y="57.6" width="3.3" height="0.75" fill="#569CD6" opacity="0.45"/><rect x="16.2" y="57.6" width="3.9" height="0.75" fill="#B5CEA8" opacity="0.45"/><rect x="21.0" y="57.6" width="2.8" height="0.75" fill="#569CD6" opacity="0.45"/><rect x="24.8" y="57.6" width="3.8" height="0.75" fill="#4EC9B0" opacity="0.45"/><rect x="29.5" y="57.6" width="1.6" height="0.75" fill="#4EC9B0" opacity="0.45"/><rect x="17.4" y="58.9" width="2.6" height="0.75" fill="#D69D85" opacity="0.45"/><rect x="20.9" y="58.9" width="3.1" height="0.75" fill="#57A64A" opacity="0.45"/><rect x="24.9" y="58.9" width="1.6" height="0.75" fill="#57A64A" opacity="0.45"/><rect x="27.4" y="58.9" width="1.3" height="0.75" fill="#4EC9B0" opacity="0.45"/><rect x="15.6" y="60.3" width="1.7" height="0.75" fill="#D69D85" opacity="0.45"/><rect x="18.2" y="60.3" width="2.3" height="0.75" fill="#569CD6" opacity="0.45"/><rect x="21.4" y="60.3" width="2.8" height="0.75" fill="#DCDCDC" opacity="0.45"/><rect x="25.1" y="60.3" width="4.1" height="0.75" fill="#DCDCDC" opacity="0.45"/><rect x="17.4" y="61.6" width="5.2" height="0.75" fill="#D69D85" opacity="0.45"/><rect x="23.5" y="61.6" width="5.0" height="0.75" fill="#86C691" opacity="0.45"/><rect x="29.4" y="61.6" width="2.9" height="0.75" fill="#DCDCDC" opacity="0.45"/><rect x="15.6" y="63.0" width="2.9" height="0.75" fill="#86C691" opacity="0.45"/><rect x="19.4" y="63.0" width="2.1" height="0.75" fill="#DCDCDC" opacity="0.45"/><rect x="12.0" y="64.3" width="1.5" height="0.75" fill="#DCDCDC" opacity="0.45"/><rect x="14.4" y="64.3" width="4.7" height="0.75" fill="#4EC9B0" opacity="0.45"/><rect x="20.0" y="64.3" width="3.1" height="0.75" fill="#DCDCDC" opacity="0.45"/><rect x="24.0" y="64.3" width="5.2" height="0.75" fill="#B5CEA8" opacity="0.45"/><rect x="19.2" y="65.7" width="4.1" height="0.75" fill="#D69D85" opacity="0.45"/><rect x="24.2" y="65.7" width="2.6" height="0.75" fill="#569CD6" opacity="0.45"/><rect x="27.7" y="65.7" width="2.4" height="0.75" fill="#569CD6" opacity="0.45"/><rect x="17.4" y="67.0" width="2.7" height="0.75" fill="#569CD6" opacity="0.45"/><rect x="21.0" y="67.0" width="4.0" height="0.75" fill="#B5CEA8" opacity="0.45"/><rect x="25.9" y="67.0" width="3.2" height="0.75" fill="#569CD6" opacity="0.45"/><rect x="17.4" y="68.4" width="4.6" height="0.75" fill="#569CD6" opacity="0.45"/><rect x="22.9" y="68.4" width="5.4" height="0.75" fill="#4EC9B0" opacity="0.45"/><rect x="19.2" y="69.7" width="4.0" height="0.75" fill="#86C691" opacity="0.45"/><rect x="24.1" y="69.7" width="5.3" height="0.75" fill="#DCDCDC" opacity="0.45"/><rect x="30.3" y="69.7" width="2.1" height="0.75" fill="#D69D85" opacity="0.45"/><rect x="19.2" y="71.1" width="4.3" height="0.75" fill="#DCDCDC" opacity="0.45"/><rect x="24.4" y="71.1" width="2.2" height="0.75" fill="#86C691" opacity="0.45"/><rect x="27.4" y="71.1" width="3.5" height="0.75" fill="#57A64A" opacity="0.45"/><rect x="15.6" y="72.4" width="4.8" height="0.75" fill="#DCDCDC" opacity="0.45"/><rect x="21.3" y="72.4" width="1.6" height="0.75" fill="#B5CEA8" opacity="0.45"/><rect x="23.8" y="72.4" width="1.8" height="0.75" fill="#D69D85" opacity="0.45"/><rect x="12.0" y="75.1" width="3.6" height="0.75" fill="#57A64A" opacity="0.45"/><rect x="16.5" y="75.1" width="4.6" height="0.75" fill="#86C691" opacity="0.45"/><rect x="22.0" y="75.1" width="3.2" height="0.75" fill="#DCDCDC" opacity="0.45"/><rect x="13.8" y="77.8" width="2.2" height="0.75" fill="#B5CEA8" opacity="0.45"/><rect x="16.9" y="77.8" width="5.4" height="0.75" fill="#DCDCDC" opacity="0.45"/><rect x="17.4" y="79.2" width="5.1" height="0.75" fill="#569CD6" opacity="0.45"/><rect x="23.4" y="79.2" width="2.7" height="0.75" fill="#4EC9B0" opacity="0.45"/><rect x="17.4" y="81.9" width="2.4" height="0.75" fill="#569CD6" opacity="0.45"/><rect x="20.7" y="81.9" width="2.1" height="0.75" fill="#4EC9B0" opacity="0.45"/><rect x="23.7" y="81.9" width="3.0" height="0.75" fill="#569CD6" opacity="0.45"/><rect x="27.7" y="81.9" width="1.9" height="0.75" fill="#86C691" opacity="0.45"/><rect x="19.2" y="83.2" width="5.5" height="0.75" fill="#57A64A" opacity="0.45"/><rect x="25.6" y="83.2" width="4.8" height="0.75" fill="#D69D85" opacity="0.45"/><rect x="19.2" y="84.6" width="5.3" height="0.75" fill="#4EC9B0" opacity="0.45"/><rect x="25.4" y="84.6" width="4.5" height="0.75" fill="#D69D85" opacity="0.45"/><rect x="19.2" y="85.9" width="1.9" height="0.75" fill="#57A64A" opacity="0.45"/><rect x="22.0" y="85.9" width="4.8" height="0.75" fill="#57A64A" opacity="0.45"/><rect x="27.7" y="85.9" width="2.3" height="0.75" fill="#B5CEA8" opacity="0.45"/><rect x="21.0" y="87.3" width="2.5" height="0.75" fill="#DCDCDC" opacity="0.45"/><rect x="24.4" y="87.3" width="5.4" height="0.75" fill="#57A64A" opacity="0.45"/><rect x="19.2" y="88.6" width="3.0" height="0.75" fill="#4EC9B0" opacity="0.45"/><rect x="23.1" y="88.6" width="3.4" height="0.75" fill="#B5CEA8" opacity="0.45"/><rect x="19.2" y="91.3" width="3.5" height="0.75" fill="#4EC9B0" opacity="0.45"/><rect x="23.6" y="91.3" width="3.3" height="0.75" fill="#DCDCDC" opacity="0.45"/><rect x="27.9" y="91.3" width="1.5" height="0.75" fill="#57A64A" opacity="0.45"/><rect x="17.4" y="92.7" width="2.3" height="0.75" fill="#D69D85" opacity="0.45"/><rect x="20.6" y="92.7" width="1.7" height="0.75" fill="#B5CEA8" opacity="0.45"/><rect x="19.2" y="94.0" width="2.6" height="0.75" fill="#DCDCDC" opacity="0.45"/><rect x="22.7" y="94.0" width="3.0" height="0.75" fill="#569CD6" opacity="0.45"/><rect x="26.6" y="94.0" width="5.2" height="0.75" fill="#DCDCDC" opacity="0.45"/><rect x="12.0" y="95.4" width="2.0" height="0.75" fill="#DCDCDC" opacity="0.45"/><rect x="17.4" y="98.1" width="3.9" height="0.75" fill="#4EC9B0" opacity="0.45"/><rect x="22.2" y="98.1" width="3.3" height="0.75" fill="#4EC9B0" opacity="0.45"/><rect x="21.0" y="99.4" width="4.3" height="0.75" fill="#57A64A" opacity="0.45"/><rect x="26.2" y="99.4" width="5.0" height="0.75" fill="#569CD6" opacity="0.45"/><rect x="17.4" y="100.8" width="3.5" height="0.75" fill="#DCDCDC" opacity="0.45"/><rect x="21.8" y="100.8" width="3.5" height="0.75" fill="#57A64A" opacity="0.45"/><rect x="26.2" y="100.8" width="3.9" height="0.75" fill="#57A64A" opacity="0.45"/><rect x="21.0" y="102.1" width="1.8" height="0.75" fill="#86C691" opacity="0.45"/><rect x="23.7" y="102.1" width="5.1" height="0.75" fill="#86C691" opacity="0.45"/><rect x="15.6" y="103.5" width="4.5" height="0.75" fill="#DCDCDC" opacity="0.45"/><rect x="21.0" y="103.5" width="5.0" height="0.75" fill="#DCDCDC" opacity="0.45"/><rect x="15.6" y="104.8" width="1.6" height="0.75" fill="#B5CEA8" opacity="0.45"/><rect x="18.1" y="104.8" width="1.6" height="0.75" fill="#B5CEA8" opacity="0.45"/><rect x="20.6" y="104.8" width="3.5" height="0.75" fill="#DCDCDC" opacity="0.45"/><rect x="25.0" y="104.8" width="2.1" height="0.75" fill="#569CD6" opacity="0.45"/><rect x="17.4" y="107.5" width="5.4" height="0.75" fill="#4EC9B0" opacity="0.45"/><rect x="23.7" y="107.5" width="4.2" height="0.75" fill="#86C691" opacity="0.45"/><rect x="28.8" y="107.5" width="3.4" height="0.75" fill="#DCDCDC" opacity="0.45"/><rect x="12.0" y="108.9" width="4.5" height="0.75" fill="#57A64A" opacity="0.45"/><rect x="19.2" y="110.2" width="2.0" height="0.75" fill="#4EC9B0" opacity="0.45"/><rect x="22.1" y="110.2" width="2.1" height="0.75" fill="#DCDCDC" opacity="0.45"/><rect x="13.8" y="111.6" width="1.5" height="0.75" fill="#D69D85" opacity="0.45"/><rect x="16.2" y="111.6" width="1.5" height="0.75" fill="#4EC9B0" opacity="0.45"/><rect x="18.6" y="111.6" width="2.6" height="0.75" fill="#D69D85" opacity="0.45"/><rect x="17.4" y="112.9" width="2.1" height="0.75" fill="#86C691" opacity="0.45"/><rect x="20.4" y="112.9" width="1.3" height="0.75" fill="#569CD6" opacity="0.45"/><rect x="22.6" y="112.9" width="4.8" height="0.75" fill="#DCDCDC" opacity="0.45"/><rect x="17.4" y="114.3" width="2.8" height="0.75" fill="#DCDCDC" opacity="0.45"/><rect x="21.1" y="114.3" width="3.8" height="0.75" fill="#4EC9B0" opacity="0.45"/><rect x="25.8" y="114.3" width="3.4" height="0.75" fill="#569CD6" opacity="0.45"/><rect x="30.1" y="114.3" width="2.6" height="0.75" fill="#4EC9B0" opacity="0.45"/><rect x="17.4" y="115.6" width="3.8" height="0.75" fill="#57A64A" opacity="0.45"/><rect x="22.1" y="115.6" width="3.7" height="0.75" fill="#86C691" opacity="0.45"/><rect x="26.7" y="115.6" width="4.7" height="0.75" fill="#DCDCDC" opacity="0.45"/><rect x="13.8" y="117.0" width="4.4" height="0.75" fill="#DCDCDC" opacity="0.45"/><rect x="19.1" y="117.0" width="4.7" height="0.75" fill="#B5CEA8" opacity="0.45"/><rect x="24.7" y="117.0" width="1.8" height="0.75" fill="#86C691" opacity="0.45"/><rect x="27.4" y="117.0" width="5.0" height="0.75" fill="#86C691" opacity="0.45"/><rect x="15.6" y="118.3" width="2.1" height="0.75" fill="#DCDCDC" opacity="0.45"/><rect x="18.6" y="118.3" width="1.5" height="0.75" fill="#86C691" opacity="0.45"/><rect x="21.0" y="118.3" width="2.5" height="0.75" fill="#4EC9B0" opacity="0.45"/><rect x="21.0" y="121.0" width="2.2" height="0.75" fill="#DCDCDC" opacity="0.45"/><rect x="17.4" y="122.4" width="2.0" height="0.75" fill="#4EC9B0" opacity="0.45"/><rect x="20.3" y="122.4" width="2.9" height="0.75" fill="#D69D85" opacity="0.45"/><rect x="24.1" y="122.4" width="4.0" height="0.75" fill="#4EC9B0" opacity="0.45"/><rect x="21.0" y="123.7" width="1.7" height="0.75" fill="#4EC9B0" opacity="0.45"/><rect x="17.4" y="125.1" width="2.9" height="0.75" fill="#569CD6" opacity="0.45"/><rect x="21.2" y="125.1" width="4.5" height="0.75" fill="#B5CEA8" opacity="0.45"/><rect x="26.6" y="125.1" width="1.2" height="0.75" fill="#DCDCDC" opacity="0.45"/><rect x="17.4" y="126.4" width="3.5" height="0.75" fill="#B5CEA8" opacity="0.45"/><rect x="21.8" y="126.4" width="5.4" height="0.75" fill="#4EC9B0" opacity="0.45"/><rect x="28.1" y="126.4" width="3.9" height="0.75" fill="#4EC9B0" opacity="0.45"/><rect x="12.0" y="127.8" width="5.2" height="0.75" fill="#DCDCDC" opacity="0.45"/><rect x="18.1" y="127.8" width="2.9" height="0.75" fill="#DCDCDC" opacity="0.45"/><rect x="21.9" y="127.8" width="4.9" height="0.75" fill="#57A64A" opacity="0.45"/><rect x="12.0" y="129.1" width="5.3" height="0.75" fill="#B5CEA8" opacity="0.45"/><rect x="18.2" y="129.1" width="2.4" height="0.75" fill="#B5CEA8" opacity="0.45"/><rect x="21.5" y="129.1" width="3.8" height="0.75" fill="#86C691" opacity="0.45"/><rect x="19.2" y="130.5" width="2.4" height="0.75" fill="#DCDCDC" opacity="0.45"/><rect x="22.5" y="130.5" width="4.1" height="0.75" fill="#DCDCDC" opacity="0.45"/><rect x="27.4" y="130.5" width="1.3" height="0.75" fill="#DCDCDC" opacity="0.45"/><rect x="17.4" y="131.8" width="4.1" height="0.75" fill="#569CD6" opacity="0.45"/><rect x="22.4" y="131.8" width="5.1" height="0.75" fill="#B5CEA8" opacity="0.45"/><rect x="28.4" y="131.8" width="1.4" height="0.75" fill="#86C691" opacity="0.45"/><rect x="30.7" y="131.8" width="1.5" height="0.75" fill="#DCDCDC" opacity="0.45"/><rect x="15.6" y="133.2" width="3.5" height="0.75" fill="#D69D85" opacity="0.45"/><rect x="15.6" y="135.9" width="4.2" height="0.75" fill="#569CD6" opacity="0.45"/><rect x="20.7" y="135.9" width="3.9" height="0.75" fill="#D69D85" opacity="0.45"/><rect x="25.5" y="135.9" width="1.7" height="0.75" fill="#569CD6" opacity="0.45"/><rect x="15.6" y="137.2" width="2.8" height="0.75" fill="#DCDCDC" opacity="0.45"/><rect x="19.2" y="138.6" width="2.3" height="0.75" fill="#B5CEA8" opacity="0.45"/><rect x="22.4" y="138.6" width="2.8" height="0.75" fill="#57A64A" opacity="0.45"/><rect x="26.1" y="138.6" width="4.7" height="0.75" fill="#DCDCDC" opacity="0.45"/><rect x="15.6" y="139.9" width="3.3" height="0.75" fill="#57A64A" opacity="0.45"/><rect x="19.8" y="139.9" width="5.0" height="0.75" fill="#57A64A" opacity="0.45"/><rect x="17.4" y="141.3" width="2.4" height="0.75" fill="#DCDCDC" opacity="0.45"/><rect x="20.7" y="141.3" width="3.9" height="0.75" fill="#DCDCDC" opacity="0.45"/><rect x="15.6" y="145.3" width="1.4" height="0.75" fill="#569CD6" opacity="0.45"/><rect x="17.9" y="145.3" width="1.2" height="0.75" fill="#DCDCDC" opacity="0.45"/><rect x="20.0" y="145.3" width="3.0" height="0.75" fill="#569CD6" opacity="0.45"/><rect x="23.9" y="145.3" width="1.6" height="0.75" fill="#57A64A" opacity="0.45"/><rect x="13.8" y="146.7" width="1.9" height="0.75" fill="#DCDCDC" opacity="0.45"/><rect x="16.6" y="146.7" width="3.9" height="0.75" fill="#86C691" opacity="0.45"/><rect x="21.4" y="146.7" width="3.3" height="0.75" fill="#86C691" opacity="0.45"/><rect x="25.6" y="146.7" width="2.1" height="0.75" fill="#86C691" opacity="0.45"/><rect x="15.6" y="148.0" width="4.9" height="0.75" fill="#4EC9B0" opacity="0.45"/><rect x="21.4" y="148.0" width="3.1" height="0.75" fill="#DCDCDC" opacity="0.45"/><rect x="25.5" y="148.0" width="3.1" height="0.75" fill="#DCDCDC" opacity="0.45"/><rect x="29.5" y="148.0" width="2.9" height="0.75" fill="#DCDCDC" opacity="0.45"/><rect x="21.0" y="149.4" width="2.5" height="0.75" fill="#DCDCDC" opacity="0.45"/><rect x="24.4" y="149.4" width="3.0" height="0.75" fill="#86C691" opacity="0.45"/><rect x="19.2" y="150.7" width="1.5" height="0.75" fill="#4EC9B0" opacity="0.45"/><rect x="21.6" y="150.7" width="3.1" height="0.75" fill="#D69D85" opacity="0.45"/><rect x="19.2" y="152.1" width="4.7" height="0.75" fill="#569CD6" opacity="0.45"/><rect x="24.8" y="152.1" width="1.5" height="0.75" fill="#DCDCDC" opacity="0.45"/><rect x="21.0" y="153.4" width="4.2" height="0.75" fill="#D69D85" opacity="0.45"/><rect x="17.4" y="154.8" width="5.0" height="0.75" fill="#DCDCDC" opacity="0.45"/><rect x="23.3" y="154.8" width="2.7" height="0.75" fill="#86C691" opacity="0.45"/><rect x="13.8" y="156.1" width="4.2" height="0.75" fill="#DCDCDC" opacity="0.45"/><rect x="18.9" y="156.1" width="3.1" height="0.75" fill="#DCDCDC" opacity="0.45"/><rect x="15.6" y="157.5" width="5.4" height="0.75" fill="#57A64A" opacity="0.45"/><rect x="21.9" y="157.5" width="2.3" height="0.75" fill="#86C691" opacity="0.45"/><rect x="25.0" y="157.5" width="4.8" height="0.75" fill="#569CD6" opacity="0.45"/><rect x="17.4" y="158.8" width="2.9" height="0.75" fill="#DCDCDC" opacity="0.45"/><rect x="21.2" y="158.8" width="4.4" height="0.75" fill="#86C691" opacity="0.45"/><rect x="26.4" y="158.8" width="4.6" height="0.75" fill="#57A64A" opacity="0.45"/><rect x="15.6" y="161.5" width="1.6" height="0.75" fill="#D69D85" opacity="0.45"/><rect x="18.1" y="161.5" width="5.0" height="0.75" fill="#DCDCDC" opacity="0.45"/><rect x="15.6" y="162.9" width="1.4" height="0.75" fill="#DCDCDC" opacity="0.45"/><rect x="17.9" y="162.9" width="3.6" height="0.75" fill="#569CD6" opacity="0.45"/><rect x="22.5" y="162.9" width="4.0" height="0.75" fill="#B5CEA8" opacity="0.45"/><rect x="19.2" y="165.6" width="2.6" height="0.75" fill="#DCDCDC" opacity="0.45"/><rect x="17.4" y="166.9" width="1.3" height="0.75" fill="#DCDCDC" opacity="0.45"/><rect x="17.4" y="169.6" width="4.3" height="0.75" fill="#D69D85" opacity="0.45"/><rect x="22.6" y="169.6" width="4.5" height="0.75" fill="#57A64A" opacity="0.45"/><rect x="19.2" y="171.0" width="2.7" height="0.75" fill="#86C691" opacity="0.45"/><rect x="22.8" y="171.0" width="4.1" height="0.75" fill="#D69D85" opacity="0.45"/><rect x="27.8" y="171.0" width="3.3" height="0.75" fill="#4EC9B0" opacity="0.45"/><rect x="12.0" y="172.3" width="4.5" height="0.75" fill="#86C691" opacity="0.45"/><rect x="17.4" y="172.3" width="4.9" height="0.75" fill="#B5CEA8" opacity="0.45"/><rect x="23.1" y="172.3" width="4.8" height="0.75" fill="#D69D85" opacity="0.45"/><rect x="12.0" y="173.7" width="2.8" height="0.75" fill="#569CD6" opacity="0.45"/><rect x="15.7" y="173.7" width="4.6" height="0.75" fill="#B5CEA8" opacity="0.45"/><rect x="21.2" y="173.7" width="5.2" height="0.75" fill="#DCDCDC" opacity="0.45"/><rect x="15.6" y="177.7" width="2.1" height="0.75" fill="#B5CEA8" opacity="0.45"/><rect x="18.6" y="177.7" width="3.5" height="0.75" fill="#DCDCDC" opacity="0.45"/><rect x="12.0" y="179.1" width="2.5" height="0.75" fill="#4EC9B0" opacity="0.45"/><rect x="15.4" y="179.1" width="2.5" height="0.75" fill="#DCDCDC" opacity="0.45"/><rect x="18.8" y="179.1" width="4.5" height="0.75" fill="#DCDCDC" opacity="0.45"/><rect x="19.2" y="180.4" width="3.7" height="0.75" fill="#569CD6" opacity="0.45"/><rect x="15.6" y="181.8" width="2.7" height="0.75" fill="#DCDCDC" opacity="0.45"/><rect x="19.2" y="181.8" width="3.8" height="0.75" fill="#D69D85" opacity="0.45"/><rect x="15.6" y="183.1" width="2.0" height="0.75" fill="#DCDCDC" opacity="0.45"/><rect x="18.5" y="183.1" width="2.9" height="0.75" fill="#DCDCDC" opacity="0.45"/><rect x="22.3" y="183.1" width="3.9" height="0.75" fill="#57A64A" opacity="0.45"/><rect x="17.4" y="184.5" width="5.0" height="0.75" fill="#86C691" opacity="0.45"/><rect x="23.3" y="184.5" width="4.0" height="0.75" fill="#4EC9B0" opacity="0.45"/><rect x="28.3" y="184.5" width="3.3" height="0.75" fill="#DCDCDC" opacity="0.45"/><rect x="15.6" y="185.8" width="4.6" height="0.75" fill="#B5CEA8" opacity="0.45"/><rect x="21.1" y="185.8" width="5.4" height="0.75" fill="#57A64A" opacity="0.45"/><rect x="12.0" y="187.2" width="5.2" height="0.75" fill="#569CD6" opacity="0.45"/><rect x="18.1" y="187.2" width="5.0" height="0.75" fill="#86C691" opacity="0.45"/><rect x="23.9" y="187.2" width="3.1" height="0.75" fill="#DCDCDC" opacity="0.45"/><rect x="28.0" y="187.2" width="4.3" height="0.75" fill="#DCDCDC" opacity="0.45"/><rect x="17.4" y="188.5" width="2.3" height="0.75" fill="#57A64A" opacity="0.45"/><rect x="20.6" y="188.5" width="1.8" height="0.75" fill="#DCDCDC" opacity="0.45"/><rect x="12.0" y="189.9" width="3.7" height="0.75" fill="#DCDCDC" opacity="0.45"/><rect x="16.6" y="189.9" width="1.2" height="0.75" fill="#DCDCDC" opacity="0.45"/><rect x="13.8" y="191.2" width="2.4" height="0.75" fill="#57A64A" opacity="0.45"/><rect x="17.1" y="191.2" width="1.6" height="0.75" fill="#D69D85" opacity="0.45"/><rect x="13.8" y="192.6" width="3.7" height="0.75" fill="#57A64A" opacity="0.45"/><rect x="18.4" y="192.6" width="2.5" height="0.75" fill="#DCDCDC" opacity="0.45"/><rect x="21.8" y="192.6" width="3.0" height="0.75" fill="#4EC9B0" opacity="0.45"/><rect x="25.7" y="192.6" width="4.6" height="0.75" fill="#D69D85" opacity="0.45"/><rect x="19.2" y="195.3" width="1.9" height="0.75" fill="#DCDCDC" opacity="0.45"/><rect x="22.0" y="195.3" width="2.6" height="0.75" fill="#B5CEA8" opacity="0.45"/><rect x="25.4" y="195.3" width="1.5" height="0.75" fill="#DCDCDC" opacity="0.45"/><rect x="13.8" y="196.6" width="1.5" height="0.75" fill="#DCDCDC" opacity="0.45"/><rect x="16.2" y="196.6" width="1.7" height="0.75" fill="#B5CEA8" opacity="0.45"/><rect x="13.8" y="198.0" width="3.1" height="0.75" fill="#B5CEA8" opacity="0.45"/><rect x="17.8" y="198.0" width="4.3" height="0.75" fill="#D69D85" opacity="0.45"/><rect x="23.0" y="198.0" width="2.2" height="0.75" fill="#4EC9B0" opacity="0.45"/><rect x="26.1" y="198.0" width="3.2" height="0.75" fill="#569CD6" opacity="0.45"/><rect x="15.6" y="199.3" width="1.9" height="0.75" fill="#B5CEA8" opacity="0.45"/><rect x="18.4" y="199.3" width="5.2" height="0.75" fill="#DCDCDC" opacity="0.45"/><rect x="24.5" y="199.3" width="5.3" height="0.75" fill="#B5CEA8" opacity="0.45"/><rect x="13.8" y="200.7" width="2.0" height="0.75" fill="#B5CEA8" opacity="0.45"/><rect x="16.7" y="200.7" width="4.3" height="0.75" fill="#86C691" opacity="0.45"/><rect x="17.4" y="202.0" width="3.2" height="0.75" fill="#86C691" opacity="0.45"/><rect x="21.5" y="202.0" width="3.1" height="0.75" fill="#B5CEA8" opacity="0.45"/><rect x="25.5" y="202.0" width="1.6" height="0.75" fill="#DCDCDC" opacity="0.45"/><rect x="15.6" y="203.4" width="3.9" height="0.75" fill="#DCDCDC" opacity="0.45"/><rect x="20.4" y="203.4" width="2.0" height="0.75" fill="#B5CEA8" opacity="0.45"/><rect x="23.3" y="203.4" width="1.4" height="0.75" fill="#D69D85" opacity="0.45"/><rect x="25.5" y="203.4" width="3.7" height="0.75" fill="#4EC9B0" opacity="0.45"/><rect x="17.4" y="207.4" width="4.5" height="0.75" fill="#86C691" opacity="0.45"/><rect x="22.8" y="207.4" width="5.2" height="0.75" fill="#B5CEA8" opacity="0.45"/><rect x="19.2" y="212.8" width="5.2" height="0.75" fill="#569CD6" opacity="0.45"/><rect x="25.3" y="212.8" width="4.3" height="0.75" fill="#86C691" opacity="0.45"/><rect x="15.6" y="214.2" width="5.4" height="0.75" fill="#57A64A" opacity="0.45"/><rect x="21.9" y="214.2" width="1.3" height="0.75" fill="#86C691" opacity="0.45"/><rect x="24.1" y="214.2" width="2.0" height="0.75" fill="#DCDCDC" opacity="0.45"/><rect x="27.0" y="214.2" width="4.0" height="0.75" fill="#4EC9B0" opacity="0.45"/><rect x="15.6" y="215.5" width="2.6" height="0.75" fill="#DCDCDC" opacity="0.45"/><rect x="19.1" y="215.5" width="4.7" height="0.75" fill="#DCDCDC" opacity="0.45"/><rect x="24.8" y="215.5" width="2.3" height="0.75" fill="#57A64A" opacity="0.45"/><rect x="19.2" y="216.9" width="2.7" height="0.75" fill="#57A64A" opacity="0.45"/><rect x="22.8" y="216.9" width="3.4" height="0.75" fill="#DCDCDC" opacity="0.45"/><rect x="19.2" y="218.2" width="4.2" height="0.75" fill="#DCDCDC" opacity="0.45"/><rect x="24.3" y="218.2" width="3.6" height="0.75" fill="#569CD6" opacity="0.45"/><rect x="28.9" y="218.2" width="3.9" height="0.75" fill="#DCDCDC" opacity="0.45"/><rect x="17.4" y="220.9" width="2.6" height="0.75" fill="#4EC9B0" opacity="0.45"/><rect x="20.9" y="220.9" width="5.2" height="0.75" fill="#86C691" opacity="0.45"/><rect x="27.0" y="220.9" width="2.3" height="0.75" fill="#4EC9B0" opacity="0.45"/><rect x="15.6" y="222.3" width="3.5" height="0.75" fill="#57A64A" opacity="0.45"/><rect x="20.0" y="222.3" width="1.5" height="0.75" fill="#DCDCDC" opacity="0.45"/><rect x="22.4" y="222.3" width="1.9" height="0.75" fill="#86C691" opacity="0.45"/><rect x="13.8" y="223.6" width="1.2" height="0.75" fill="#86C691" opacity="0.45"/><rect x="15.9" y="223.6" width="2.2" height="0.75" fill="#86C691" opacity="0.45"/><rect x="19.1" y="223.6" width="4.8" height="0.75" fill="#DCDCDC" opacity="0.45"/><rect x="24.7" y="223.6" width="3.8" height="0.75" fill="#4EC9B0" opacity="0.45"/><rect x="29.4" y="223.6" width="3.2" height="0.75" fill="#B5CEA8" opacity="0.45"/><rect x="15.6" y="226.3" width="4.5" height="0.75" fill="#B5CEA8" opacity="0.45"/><rect x="21.0" y="226.3" width="3.8" height="0.75" fill="#569CD6" opacity="0.45"/><rect x="12.0" y="229.0" width="3.5" height="0.75" fill="#4EC9B0" opacity="0.45"/><rect x="16.4" y="229.0" width="3.6" height="0.75" fill="#DCDCDC" opacity="0.45"/><rect x="15.6" y="230.4" width="2.2" height="0.75" fill="#86C691" opacity="0.45"/><rect x="18.7" y="230.4" width="1.4" height="0.75" fill="#569CD6" opacity="0.45"/><rect x="15.6" y="231.7" width="5.3" height="0.75" fill="#4EC9B0" opacity="0.45"/><rect x="21.8" y="231.7" width="3.2" height="0.75" fill="#B5CEA8" opacity="0.45"/><rect x="25.9" y="231.7" width="5.1" height="0.75" fill="#B5CEA8" opacity="0.45"/><rect x="19.2" y="233.1" width="4.8" height="0.75" fill="#B5CEA8" opacity="0.45"/><rect x="24.9" y="233.1" width="4.7" height="0.75" fill="#4EC9B0" opacity="0.45"/><rect x="19.2" y="234.4" width="3.5" height="0.75" fill="#B5CEA8" opacity="0.45"/><rect x="23.6" y="234.4" width="3.0" height="0.75" fill="#569CD6" opacity="0.45"/><rect x="12.0" y="235.8" width="4.3" height="0.75" fill="#B5CEA8" opacity="0.45"/><rect x="17.2" y="235.8" width="4.3" height="0.75" fill="#86C691" opacity="0.45"/><rect x="17.4" y="237.1" width="5.0" height="0.75" fill="#DCDCDC" opacity="0.45"/><rect x="23.3" y="237.1" width="1.7" height="0.75" fill="#D69D85" opacity="0.45"/><rect x="25.9" y="237.1" width="2.2" height="0.75" fill="#B5CEA8" opacity="0.45"/><rect x="19.2" y="238.5" width="1.7" height="0.75" fill="#DCDCDC" opacity="0.45"/><rect x="21.8" y="238.5" width="3.5" height="0.75" fill="#B5CEA8" opacity="0.45"/><rect x="26.2" y="238.5" width="5.2" height="0.75" fill="#4EC9B0" opacity="0.45"/><rect x="17.4" y="239.8" width="3.5" height="0.75" fill="#DCDCDC" opacity="0.45"/><rect x="21.8" y="239.8" width="2.2" height="0.75" fill="#B5CEA8" opacity="0.45"/><rect x="24.9" y="239.8" width="3.6" height="0.75" fill="#4EC9B0" opacity="0.45"/><rect x="29.4" y="239.8" width="1.6" height="0.75" fill="#DCDCDC" opacity="0.45"/><rect x="19.2" y="241.2" width="2.5" height="0.75" fill="#DCDCDC" opacity="0.45"/><rect x="19.2" y="245.2" width="3.5" height="0.75" fill="#DCDCDC" opacity="0.45"/><rect x="23.6" y="245.2" width="2.7" height="0.75" fill="#DCDCDC" opacity="0.45"/><rect x="27.2" y="245.2" width="1.4" height="0.75" fill="#569CD6" opacity="0.45"/><rect x="29.5" y="245.2" width="3.2" height="0.75" fill="#86C691" opacity="0.45"/><rect x="19.2" y="246.6" width="2.1" height="0.75" fill="#569CD6" opacity="0.45"/><rect x="22.2" y="246.6" width="2.0" height="0.75" fill="#86C691" opacity="0.45"/><rect x="12.0" y="247.9" width="3.9" height="0.75" fill="#57A64A" opacity="0.45"/><rect x="16.8" y="247.9" width="2.1" height="0.75" fill="#DCDCDC" opacity="0.45"/><rect x="12.0" y="250.7" width="1.7" height="0.75" fill="#86C691" opacity="0.45"/><rect x="14.6" y="250.7" width="5.3" height="0.75" fill="#DCDCDC" opacity="0.45"/><rect x="20.8" y="250.7" width="4.9" height="0.75" fill="#DCDCDC" opacity="0.45"/><rect x="26.6" y="250.7" width="2.6" height="0.75" fill="#D69D85" opacity="0.45"/><rect x="15.6" y="252.0" width="4.9" height="0.75" fill="#4EC9B0" opacity="0.45"/><rect x="21.4" y="252.0" width="4.3" height="0.75" fill="#DCDCDC" opacity="0.45"/><rect x="15.6" y="253.4" width="4.1" height="0.75" fill="#DCDCDC" opacity="0.45"/><rect x="20.6" y="253.4" width="2.8" height="0.75" fill="#57A64A" opacity="0.45"/><rect x="24.3" y="253.4" width="5.0" height="0.75" fill="#57A64A" opacity="0.45"/><rect x="15.6" y="256.1" width="2.2" height="0.75" fill="#DCDCDC" opacity="0.45"/><rect x="18.7" y="256.1" width="4.0" height="0.75" fill="#4EC9B0" opacity="0.45"/><rect x="23.5" y="256.1" width="3.2" height="0.75" fill="#4EC9B0" opacity="0.45"/><rect x="27.6" y="256.1" width="3.1" height="0.75" fill="#57A64A" opacity="0.45"/><rect x="12.0" y="258.8" width="3.7" height="0.75" fill="#57A64A" opacity="0.45"/><rect x="16.6" y="258.8" width="2.3" height="0.75" fill="#4EC9B0" opacity="0.45"/><rect x="19.8" y="258.8" width="1.9" height="0.75" fill="#DCDCDC" opacity="0.45"/><rect x="19.2" y="261.5" width="2.0" height="0.75" fill="#DCDCDC" opacity="0.45"/><rect x="12.0" y="262.8" width="3.2" height="0.75" fill="#B5CEA8" opacity="0.45"/><rect x="16.1" y="262.8" width="1.2" height="0.75" fill="#D69D85" opacity="0.45"/><rect x="18.2" y="262.8" width="1.5" height="0.75" fill="#4EC9B0" opacity="0.45"/><rect x="17.4" y="264.2" width="4.0" height="0.75" fill="#569CD6" opacity="0.45"/><rect x="22.3" y="264.2" width="3.4" height="0.75" fill="#57A64A" opacity="0.45"/><rect x="19.2" y="265.5" width="5.3" height="0.75" fill="#DCDCDC" opacity="0.45"/><rect x="25.4" y="265.5" width="3.8" height="0.75" fill="#DCDCDC" opacity="0.45"/><rect x="30.0" y="265.5" width="1.7" height="0.75" fill="#B5CEA8" opacity="0.45"/><rect x="17.4" y="266.9" width="4.3" height="0.75" fill="#DCDCDC" opacity="0.45"/><rect x="22.6" y="266.9" width="2.3" height="0.75" fill="#57A64A" opacity="0.45"/><rect x="25.8" y="266.9" width="2.2" height="0.75" fill="#D69D85" opacity="0.45"/><rect x="28.8" y="266.9" width="2.3" height="0.75" fill="#DCDCDC" opacity="0.45"/><rect x="21.0" y="268.2" width="5.0" height="0.75" fill="#DCDCDC" opacity="0.45"/><rect x="26.9" y="268.2" width="2.6" height="0.75" fill="#569CD6" opacity="0.45"/><rect x="19.2" y="269.6" width="4.3" height="0.75" fill="#569CD6" opacity="0.45"/><rect x="24.4" y="269.6" width="1.5" height="0.75" fill="#DCDCDC" opacity="0.45"/><rect x="26.8" y="269.6" width="3.6" height="0.75" fill="#57A64A" opacity="0.45"/><rect x="15.6" y="270.9" width="1.8" height="0.75" fill="#DCDCDC" opacity="0.45"/><rect x="18.3" y="270.9" width="3.0" height="0.75" fill="#86C691" opacity="0.45"/><rect x="22.3" y="270.9" width="4.7" height="0.75" fill="#57A64A" opacity="0.45"/><rect x="21.0" y="272.3" width="1.6" height="0.75" fill="#57A64A" opacity="0.45"/><rect x="23.5" y="272.3" width="1.9" height="0.75" fill="#DCDCDC" opacity="0.45"/><rect x="26.3" y="272.3" width="2.3" height="0.75" fill="#D69D85" opacity="0.45"/><rect x="21.0" y="273.6" width="3.2" height="0.75" fill="#86C691" opacity="0.45"/><rect x="25.1" y="273.6" width="3.0" height="0.75" fill="#86C691" opacity="0.45"/><rect x="12.0" y="275.0" width="3.3" height="0.75" fill="#DCDCDC" opacity="0.45"/><rect x="16.2" y="275.0" width="1.8" height="0.75" fill="#D69D85" opacity="0.45"/><rect x="12.0" y="276.3" width="2.2" height="0.75" fill="#57A64A" opacity="0.45"/><rect x="17.4" y="279.0" width="3.0" height="0.75" fill="#4EC9B0" opacity="0.45"/><rect x="21.3" y="279.0" width="5.4" height="0.75" fill="#DCDCDC" opacity="0.45"/><rect x="27.6" y="279.0" width="2.5" height="0.75" fill="#4EC9B0" opacity="0.45"/><rect x="15.6" y="280.4" width="3.2" height="0.75" fill="#DCDCDC" opacity="0.45"/><rect x="19.7" y="280.4" width="2.8" height="0.75" fill="#86C691" opacity="0.45"/><rect x="23.3" y="280.4" width="5.3" height="0.75" fill="#DCDCDC" opacity="0.45"/><rect x="12.0" y="283.1" width="2.7" height="0.75" fill="#DCDCDC" opacity="0.45"/><rect x="15.6" y="283.1" width="3.2" height="0.75" fill="#B5CEA8" opacity="0.45"/><rect x="19.7" y="283.1" width="5.2" height="0.75" fill="#DCDCDC" opacity="0.45"/><rect x="25.8" y="283.1" width="2.8" height="0.75" fill="#569CD6" opacity="0.45"/><rect x="15.6" y="285.8" width="3.6" height="0.75" fill="#DCDCDC" opacity="0.45"/><rect x="20.1" y="285.8" width="3.3" height="0.75" fill="#B5CEA8" opacity="0.45"/><rect x="24.2" y="285.8" width="2.1" height="0.75" fill="#D69D85" opacity="0.45"/><rect x="27.3" y="285.8" width="4.5" height="0.75" fill="#D69D85" opacity="0.45"/><rect x="15.6" y="287.1" width="3.3" height="0.75" fill="#57A64A" opacity="0.45"/><rect x="19.8" y="287.1" width="2.8" height="0.75" fill="#4EC9B0" opacity="0.45"/><rect x="23.5" y="287.1" width="1.4" height="0.75" fill="#DCDCDC" opacity="0.45"/><rect x="25.8" y="287.1" width="2.8" height="0.75" fill="#DCDCDC" opacity="0.45"/><rect x="17.4" y="288.5" width="2.9" height="0.75" fill="#DCDCDC" opacity="0.45"/><rect x="21.2" y="288.5" width="2.4" height="0.75" fill="#86C691" opacity="0.45"/><rect x="24.4" y="288.5" width="1.4" height="0.75" fill="#86C691" opacity="0.45"/><rect x="13.8" y="292.5" width="5.5" height="0.75" fill="#B5CEA8" opacity="0.45"/><rect x="17.4" y="293.9" width="2.3" height="0.75" fill="#57A64A" opacity="0.45"/><rect x="20.6" y="293.9" width="4.1" height="0.75" fill="#DCDCDC" opacity="0.45"/><rect x="15.6" y="295.2" width="1.4" height="0.75" fill="#DCDCDC" opacity="0.45"/><rect x="17.9" y="295.2" width="3.4" height="0.75" fill="#DCDCDC" opacity="0.45"/><rect x="22.2" y="295.2" width="1.3" height="0.75" fill="#DCDCDC" opacity="0.45"/><rect x="19.2" y="296.6" width="4.2" height="0.75" fill="#57A64A" opacity="0.45"/><rect x="24.3" y="296.6" width="4.2" height="0.75" fill="#DCDCDC" opacity="0.45"/><rect x="29.4" y="296.6" width="2.5" height="0.75" fill="#D69D85" opacity="0.45"/><rect x="15.6" y="297.9" width="4.8" height="0.75" fill="#57A64A" opacity="0.45"/><rect x="21.3" y="297.9" width="4.3" height="0.75" fill="#B5CEA8" opacity="0.45"/><rect x="17.4" y="300.6" width="1.6" height="0.75" fill="#86C691" opacity="0.45"/><rect x="19.9" y="300.6" width="2.7" height="0.75" fill="#DCDCDC" opacity="0.45"/><rect x="19.2" y="303.3" width="1.2" height="0.75" fill="#DCDCDC" opacity="0.45"/><rect x="21.3" y="303.3" width="4.0" height="0.75" fill="#4EC9B0" opacity="0.45"/><rect x="26.3" y="303.3" width="5.2" height="0.75" fill="#DCDCDC" opacity="0.45"/><rect x="17.4" y="304.7" width="1.7" height="0.75" fill="#86C691" opacity="0.45"/><rect x="20.0" y="304.7" width="2.2" height="0.75" fill="#DCDCDC" opacity="0.45"/><rect x="23.1" y="304.7" width="1.6" height="0.75" fill="#B5CEA8" opacity="0.45"/><rect x="25.6" y="304.7" width="1.7" height="0.75" fill="#D69D85" opacity="0.45"/><rect x="17.4" y="307.4" width="3.3" height="0.75" fill="#DCDCDC" opacity="0.45"/><rect x="21.6" y="307.4" width="2.2" height="0.75" fill="#B5CEA8" opacity="0.45"/><rect x="17.4" y="310.1" width="4.3" height="0.75" fill="#57A64A" opacity="0.45"/><rect x="22.6" y="310.1" width="1.6" height="0.75" fill="#86C691" opacity="0.45"/><rect x="25.1" y="310.1" width="5.1" height="0.75" fill="#DCDCDC" opacity="0.45"/><rect x="19.2" y="311.4" width="4.2" height="0.75" fill="#569CD6" opacity="0.45"/><rect x="24.3" y="311.4" width="5.1" height="0.75" fill="#4EC9B0" opacity="0.45"/><rect x="13.8" y="312.8" width="2.4" height="0.75" fill="#B5CEA8" opacity="0.45"/><rect x="17.1" y="312.8" width="3.3" height="0.75" fill="#DCDCDC" opacity="0.45"/><rect x="21.3" y="312.8" width="3.2" height="0.75" fill="#86C691" opacity="0.45"/><rect x="13.8" y="314.1" width="1.4" height="0.75" fill="#86C691" opacity="0.45"/><rect x="21.0" y="315.5" width="2.3" height="0.75" fill="#DCDCDC" opacity="0.45"/><rect x="24.2" y="315.5" width="4.0" height="0.75" fill="#B5CEA8" opacity="0.45"/><rect x="17.4" y="316.8" width="3.7" height="0.75" fill="#DCDCDC" opacity="0.45"/><rect x="12.0" y="318.2" width="3.5" height="0.75" fill="#B5CEA8" opacity="0.45"/><rect x="16.4" y="318.2" width="1.5" height="0.75" fill="#4EC9B0" opacity="0.45"/><rect x="18.8" y="318.2" width="4.8" height="0.75" fill="#D69D85" opacity="0.45"/><rect x="17.4" y="319.5" width="4.7" height="0.75" fill="#57A64A" opacity="0.45"/><rect x="19.2" y="320.9" width="3.2" height="0.75" fill="#569CD6" opacity="0.45"/><rect x="23.3" y="320.9" width="1.8" height="0.75" fill="#DCDCDC" opacity="0.45"/><rect x="17.4" y="322.2" width="2.1" height="0.75" fill="#57A64A" opacity="0.45"/><rect x="20.4" y="322.2" width="1.2" height="0.75" fill="#57A64A" opacity="0.45"/><rect x="22.6" y="322.2" width="5.4" height="0.75" fill="#569CD6" opacity="0.45"/><rect x="28.9" y="322.2" width="2.2" height="0.75" fill="#D69D85" opacity="0.45"/><rect x="19.2" y="323.6" width="3.9" height="0.75" fill="#57A64A" opacity="0.45"/><rect x="17.4" y="324.9" width="2.7" height="0.75" fill="#569CD6" opacity="0.45"/><rect x="21.0" y="324.9" width="2.5" height="0.75" fill="#DCDCDC" opacity="0.45"/><rect x="15.6" y="326.3" width="4.7" height="0.75" fill="#DCDCDC" opacity="0.45"/><rect x="21.2" y="326.3" width="2.6" height="0.75" fill="#D69D85" opacity="0.45"/><rect x="17.4" y="327.6" width="3.0" height="0.75" fill="#86C691" opacity="0.45"/><rect x="21.3" y="327.6" width="4.4" height="0.75" fill="#57A64A" opacity="0.45"/><rect x="15.6" y="329.0" width="2.6" height="0.75" fill="#DCDCDC" opacity="0.45"/><rect x="19.1" y="329.0" width="5.1" height="0.75" fill="#DCDCDC" opacity="0.45"/><rect x="13.8" y="330.3" width="1.6" height="0.75" fill="#DCDCDC" opacity="0.45"/><rect x="16.3" y="330.3" width="1.7" height="0.75" fill="#D69D85" opacity="0.45"/><rect x="18.9" y="330.3" width="3.4" height="0.75" fill="#D69D85" opacity="0.45"/><rect x="23.2" y="330.3" width="1.4" height="0.75" fill="#B5CEA8" opacity="0.45"/><rect x="25.5" y="330.3" width="4.9" height="0.75" fill="#569CD6" opacity="0.45"/><rect x="17.4" y="331.7" width="4.4" height="0.75" fill="#B5CEA8" opacity="0.45"/><rect x="22.7" y="331.7" width="2.3" height="0.75" fill="#DCDCDC" opacity="0.45"/><rect x="25.9" y="331.7" width="2.8" height="0.75" fill="#86C691" opacity="0.45"/><rect x="15.6" y="334.4" width="3.6" height="0.75" fill="#DCDCDC" opacity="0.45"/><rect x="20.1" y="334.4" width="3.6" height="0.75" fill="#B5CEA8" opacity="0.45"/><rect x="24.7" y="334.4" width="4.0" height="0.75" fill="#DCDCDC" opacity="0.45"/><rect x="15.6" y="335.7" width="2.1" height="0.75" fill="#DCDCDC" opacity="0.45"/><rect x="18.6" y="335.7" width="2.2" height="0.75" fill="#DCDCDC" opacity="0.45"/><rect x="19.2" y="337.1" width="4.2" height="0.75" fill="#DCDCDC" opacity="0.45"/><rect x="24.3" y="337.1" width="2.4" height="0.75" fill="#DCDCDC" opacity="0.45"/><rect x="27.5" y="337.1" width="3.0" height="0.75" fill="#B5CEA8" opacity="0.45"/><rect x="15.6" y="338.4" width="1.9" height="0.75" fill="#4EC9B0" opacity="0.45"/><rect x="15.6" y="339.8" width="2.7" height="0.75" fill="#57A64A" opacity="0.45"/><rect x="19.2" y="339.8" width="5.5" height="0.75" fill="#4EC9B0" opacity="0.45"/><rect x="12.0" y="341.1" width="3.5" height="0.75" fill="#D69D85" opacity="0.45"/><rect x="16.4" y="341.1" width="1.9" height="0.75" fill="#4EC9B0" opacity="0.45"/><rect x="19.3" y="341.1" width="2.5" height="0.75" fill="#DCDCDC" opacity="0.45"/><rect x="22.7" y="341.1" width="2.2" height="0.75" fill="#B5CEA8" opacity="0.45"/><rect x="25.8" y="341.1" width="4.5" height="0.75" fill="#B5CEA8" opacity="0.45"/><rect x="15.6" y="342.5" width="2.4" height="0.75" fill="#DCDCDC" opacity="0.45"/><rect x="18.9" y="342.5" width="3.1" height="0.75" fill="#4EC9B0" opacity="0.45"/><rect x="22.9" y="342.5" width="3.6" height="0.75" fill="#DCDCDC" opacity="0.45"/><rect x="17.4" y="343.8" width="1.9" height="0.75" fill="#569CD6" opacity="0.45"/><rect x="21.0" y="345.2" width="2.4" height="0.75" fill="#B5CEA8" opacity="0.45"/><rect x="24.3" y="345.2" width="2.4" height="0.75" fill="#DCDCDC" opacity="0.45"/><rect x="19.2" y="349.2" width="1.9" height="0.75" fill="#569CD6" opacity="0.45"/><rect x="17.4" y="350.6" width="1.5" height="0.75" fill="#DCDCDC" opacity="0.45"/><rect x="19.8" y="350.6" width="2.6" height="0.75" fill="#DCDCDC" opacity="0.45"/><rect x="23.4" y="350.6" width="5.5" height="0.75" fill="#DCDCDC" opacity="0.45"/><rect x="12.0" y="351.9" width="2.7" height="0.75" fill="#57A64A" opacity="0.45"/><rect x="15.6" y="351.9" width="2.9" height="0.75" fill="#569CD6" opacity="0.45"/><rect x="19.4" y="351.9" width="2.1" height="0.75" fill="#DCDCDC" opacity="0.45"/><rect x="17.4" y="353.3" width="2.3" height="0.75" fill="#D69D85" opacity="0.45"/><rect x="20.6" y="353.3" width="3.7" height="0.75" fill="#569CD6" opacity="0.45"/><rect x="25.1" y="353.3" width="2.0" height="0.75" fill="#569CD6" opacity="0.45"/><rect x="13.8" y="354.6" width="2.7" height="0.75" fill="#57A64A" opacity="0.45"/><rect x="17.4" y="354.6" width="2.5" height="0.75" fill="#57A64A" opacity="0.45"/><rect x="15.6" y="356.0" width="5.3" height="0.75" fill="#569CD6" opacity="0.45"/><rect x="17.4" y="357.3" width="2.3" height="0.75" fill="#D69D85" opacity="0.45"/><rect x="20.6" y="357.3" width="2.9" height="0.75" fill="#57A64A" opacity="0.45"/><rect x="24.4" y="357.3" width="4.8" height="0.75" fill="#4EC9B0" opacity="0.45"/><rect x="17.4" y="358.7" width="5.1" height="0.75" fill="#569CD6" opacity="0.45"/><rect x="23.4" y="358.7" width="1.2" height="0.75" fill="#DCDCDC" opacity="0.45"/><rect x="17.4" y="361.4" width="4.0" height="0.75" fill="#86C691" opacity="0.45"/><rect x="22.3" y="361.4" width="3.9" height="0.75" fill="#D69D85" opacity="0.45"/><rect x="27.1" y="361.4" width="2.7" height="0.75" fill="#DCDCDC" opacity="0.45"/><rect x="21.0" y="364.1" width="2.3" height="0.75" fill="#DCDCDC" opacity="0.45"/><rect x="15.6" y="365.4" width="4.4" height="0.75" fill="#57A64A" opacity="0.45"/><rect x="15.6" y="366.8" width="2.7" height="0.75" fill="#DCDCDC" opacity="0.45"/><rect x="19.2" y="366.8" width="1.8" height="0.75" fill="#86C691" opacity="0.45"/><rect x="12.0" y="370.8" width="1.6" height="0.75" fill="#57A64A" opacity="0.45"/><rect x="14.5" y="370.8" width="4.8" height="0.75" fill="#DCDCDC" opacity="0.45"/><rect x="20.2" y="370.8" width="1.3" height="0.75" fill="#DCDCDC" opacity="0.45"/><rect x="21.0" y="372.2" width="3.7" height="0.75" fill="#86C691" opacity="0.45"/><rect x="15.6" y="373.5" width="3.0" height="0.75" fill="#DCDCDC" opacity="0.45"/><rect x="19.5" y="373.5" width="4.7" height="0.75" fill="#4EC9B0" opacity="0.45"/><rect x="25.0" y="373.5" width="4.1" height="0.75" fill="#86C691" opacity="0.45"/><rect x="17.4" y="374.9" width="5.5" height="0.75" fill="#DCDCDC" opacity="0.45"/><rect x="23.8" y="374.9" width="4.3" height="0.75" fill="#B5CEA8" opacity="0.45"/><rect x="17.4" y="377.6" width="4.9" height="0.75" fill="#B5CEA8" opacity="0.45"/><rect x="23.2" y="377.6" width="3.4" height="0.75" fill="#4EC9B0" opacity="0.45"/><rect x="27.5" y="377.6" width="1.7" height="0.75" fill="#D69D85" opacity="0.45"/><rect x="19.2" y="378.9" width="4.8" height="0.75" fill="#57A64A" opacity="0.45"/><rect x="24.9" y="378.9" width="2.2" height="0.75" fill="#57A64A" opacity="0.45"/><rect x="28.0" y="378.9" width="3.7" height="0.75" fill="#57A64A" opacity="0.45"/><rect x="19.2" y="380.3" width="3.1" height="0.75" fill="#DCDCDC" opacity="0.45"/><rect x="23.2" y="380.3" width="3.8" height="0.75" fill="#569CD6" opacity="0.45"/><rect x="17.4" y="383.0" width="3.9" height="0.75" fill="#DCDCDC" opacity="0.45"/><rect x="22.2" y="383.0" width="4.4" height="0.75" fill="#57A64A" opacity="0.45"/><rect x="27.4" y="383.0" width="2.9" height="0.75" fill="#DCDCDC" opacity="0.45"/><rect x="13.8" y="384.3" width="2.0" height="0.75" fill="#DCDCDC" opacity="0.45"/><rect x="16.7" y="384.3" width="4.8" height="0.75" fill="#4EC9B0" opacity="0.45"/><rect x="17.4" y="385.7" width="2.0" height="0.75" fill="#569CD6" opacity="0.45"/><rect x="17.4" y="387.0" width="4.7" height="0.75" fill="#D69D85" opacity="0.45"/><rect x="23.0" y="387.0" width="2.1" height="0.75" fill="#569CD6" opacity="0.45"/><rect x="26.0" y="387.0" width="4.9" height="0.75" fill="#DCDCDC" opacity="0.45"/><rect x="15.6" y="388.4" width="1.7" height="0.75" fill="#D69D85" opacity="0.45"/><rect x="19.2" y="389.7" width="1.5" height="0.75" fill="#D69D85" opacity="0.45"/><rect x="21.6" y="389.7" width="4.9" height="0.75" fill="#57A64A" opacity="0.45"/><rect x="13.8" y="391.1" width="5.2" height="0.75" fill="#86C691" opacity="0.45"/><rect x="19.9" y="391.1" width="2.0" height="0.75" fill="#86C691" opacity="0.45"/><rect x="22.8" y="391.1" width="1.4" height="0.75" fill="#86C691" opacity="0.45"/><rect x="25.1" y="391.1" width="5.3" height="0.75" fill="#DCDCDC" opacity="0.45"/><rect x="21.0" y="395.1" width="5.1" height="0.75" fill="#4EC9B0" opacity="0.45"/><rect x="27.0" y="395.1" width="1.6" height="0.75" fill="#DCDCDC" opacity="0.45"/><rect x="29.5" y="395.1" width="3.5" height="0.75" fill="#86C691" opacity="0.45"/><rect x="15.6" y="396.5" width="4.1" height="0.75" fill="#B5CEA8" opacity="0.45"/><rect x="20.6" y="396.5" width="2.8" height="0.75" fill="#86C691" opacity="0.45"/><rect x="24.3" y="396.5" width="4.2" height="0.75" fill="#DCDCDC" opacity="0.45"/><rect x="15.6" y="397.8" width="2.1" height="0.75" fill="#DCDCDC" opacity="0.45"/><rect x="18.6" y="397.8" width="1.9" height="0.75" fill="#D69D85" opacity="0.45"/><rect x="21.4" y="397.8" width="1.4" height="0.75" fill="#DCDCDC" opacity="0.45"/><rect x="23.7" y="397.8" width="1.7" height="0.75" fill="#86C691" opacity="0.45"/><rect x="17.4" y="399.2" width="2.0" height="0.75" fill="#4EC9B0" opacity="0.45"/><rect x="20.3" y="399.2" width="4.2" height="0.75" fill="#86C691" opacity="0.45"/><rect x="17.4" y="400.5" width="1.8" height="0.75" fill="#DCDCDC" opacity="0.45"/><rect x="20.1" y="400.5" width="3.0" height="0.75" fill="#B5CEA8" opacity="0.45"/><rect x="15.6" y="401.9" width="1.7" height="0.75" fill="#4EC9B0" opacity="0.45"/><rect x="18.2" y="401.9" width="2.7" height="0.75" fill="#B5CEA8" opacity="0.45"/><rect x="21.8" y="401.9" width="2.2" height="0.75" fill="#4EC9B0" opacity="0.45"/><rect x="17.4" y="403.2" width="1.5" height="0.75" fill="#D69D85" opacity="0.45"/><rect x="19.8" y="403.2" width="2.2" height="0.75" fill="#D69D85" opacity="0.45"/><rect x="22.9" y="403.2" width="2.9" height="0.75" fill="#B5CEA8" opacity="0.45"/><rect x="26.7" y="403.2" width="3.8" height="0.75" fill="#D69D85" opacity="0.45"/><rect x="17.4" y="404.6" width="3.7" height="0.75" fill="#DCDCDC" opacity="0.45"/><rect x="22.0" y="404.6" width="2.5" height="0.75" fill="#569CD6" opacity="0.45"/><rect x="15.6" y="405.9" width="3.0" height="0.75" fill="#DCDCDC" opacity="0.45"/><rect x="17.4" y="407.3" width="3.0" height="0.75" fill="#86C691" opacity="0.45"/><rect x="21.3" y="407.3" width="1.6" height="0.75" fill="#4EC9B0" opacity="0.45"/><rect x="23.8" y="407.3" width="3.5" height="0.75" fill="#4EC9B0" opacity="0.45"/><rect x="15.6" y="408.6" width="4.6" height="0.75" fill="#569CD6" opacity="0.45"/><rect x="21.0" y="410.0" width="4.2" height="0.75" fill="#569CD6" opacity="0.45"/><rect x="26.1" y="410.0" width="4.1" height="0.75" fill="#DCDCDC" opacity="0.45"/><rect x="19.2" y="411.3" width="2.6" height="0.75" fill="#569CD6" opacity="0.45"/><rect x="22.7" y="411.3" width="5.4" height="0.75" fill="#569CD6" opacity="0.45"/><rect x="15.6" y="412.7" width="3.5" height="0.75" fill="#4EC9B0" opacity="0.45"/><rect x="20.0" y="412.7" width="5.5" height="0.75" fill="#4EC9B0" opacity="0.45"/><rect x="26.4" y="412.7" width="5.5" height="0.75" fill="#B5CEA8" opacity="0.45"/><rect x="19.2" y="414.0" width="2.1" height="0.75" fill="#86C691" opacity="0.45"/><rect x="22.2" y="414.0" width="4.8" height="0.75" fill="#57A64A" opacity="0.45"/><rect x="27.9" y="414.0" width="2.9" height="0.75" fill="#4EC9B0" opacity="0.45"/><rect x="21.0" y="416.7" width="4.4" height="0.75" fill="#DCDCDC" opacity="0.45"/><rect x="26.3" y="416.7" width="4.1" height="0.75" fill="#D69D85" opacity="0.45"/></svg>
<div class="a" style="left:772px;top:66px;width:2.5px;height:2.5px;background:#cfcfcf;opacity:0.65;border-radius:0.5px;"></div>
<div class="a" style="left:772px;top:75px;width:2.5px;height:2.5px;background:#cfcfcf;opacity:0.65;border-radius:0.5px;"></div>
<div class="a" style="left:772px;top:99px;width:2.5px;height:2.5px;background:#cfcfcf;opacity:0.65;border-radius:0.5px;"></div>
<div class="a" style="left:772px;top:104px;width:2.5px;height:2.5px;background:#cfcfcf;opacity:0.65;border-radius:0.5px;"></div>
<div class="a" style="left:772px;top:110px;width:2.5px;height:2.5px;background:#cfcfcf;opacity:0.65;border-radius:0.5px;"></div>
<div class="a" style="left:772px;top:128px;width:2.5px;height:2.5px;background:#cfcfcf;opacity:0.65;border-radius:0.5px;"></div>
<div class="a" style="left:772px;top:208px;width:2.5px;height:2.5px;background:#cfcfcf;opacity:0.65;border-radius:0.5px;"></div>
<div class="a" style="left:772px;top:214px;width:2.5px;height:2.5px;background:#cfcfcf;opacity:0.65;border-radius:0.5px;"></div>
<div class="a" style="left:772px;top:278px;width:2.5px;height:2.5px;background:#cfcfcf;opacity:0.65;border-radius:0.5px;"></div>
<div class="a" style="left:772px;top:303px;width:2.5px;height:2.5px;background:#cfcfcf;opacity:0.65;border-radius:0.5px;"></div>
<div class="a" style="left:772px;top:348px;width:2.5px;height:2.5px;background:#cfcfcf;opacity:0.65;border-radius:0.5px;"></div>
<div class="a" style="left:772px;top:393px;width:2.5px;height:2.5px;background:#cfcfcf;opacity:0.65;border-radius:0.5px;"></div>
<div class="a" style="left:772px;top:426px;width:2.5px;height:2.5px;background:#cfcfcf;opacity:0.65;border-radius:0.5px;"></div>
<div class="a" style="left:14px;top:502.5px;width:28px;height:8.5px;background:#2b2b2b;"></div>
<div class="a t" style="left:16px;top:503.80px;font-size:5.0px;line-height:6.0px;color:#cfcfcf;font-family:'Liberation Sans',sans-serif;">100 %</div>
<svg class="a" style="left:37.00px;top:505.05px" width="3.50" height="3.50"><path d="M0.35 1.22 L3.15 1.22 L1.75 2.62 Z" fill="#ccc" stroke="none" stroke-width="0.60"/></svg>
<svg class="a" style="left:43px;top:503.5px" width="7" height="7"><path d="M1 6 L3.5 1 L6 6 Z" fill="#7a5fc8"/><circle cx="3.5" cy="3.8" r="2.2" fill="#6a55c0"/></svg>
<svg class="a" style="left:61.5px;top:503.5px" width="7" height="7"><circle cx="3.5" cy="3.5" r="3.1" fill="#3fb950"/><path d="M1.8 3.6 L3 4.8 L5.2 2.4" fill="none" stroke="#fff" stroke-width="0.8"/></svg>
<div class="a t" style="left:69.3px;top:503.62px;font-size:5.3px;line-height:6.359999999999999px;color:#cfcfcf;font-family:'Liberation Sans',sans-serif;">No issues found</div>
<div class="a" style="left:135px;top:503.5px;width:0.7px;height:7px;background:#555;"></div>
<svg class="a" style="left:141px;top:503px" width="7" height="8"><path d="M1 7 L5 2" stroke="#d0a040" stroke-width="1.4"/><path d="M4 1 L6.5 3" stroke="#cfcfcf" stroke-width="0.8"/></svg>
<svg class="a" style="left:150.00px;top:505.05px" width="3.50" height="3.50"><path d="M0.35 1.22 L3.15 1.22 L1.75 2.62 Z" fill="#ccc" stroke="none" stroke-width="0.60"/></svg>
<div class="a" style="left:160px;top:502.5px;width:552px;height:8.5px;background:#2a2a2a;"></div>
<svg class="a" style="left:166.50px;top:504.55px" width="4.50" height="4.50"><path d="M3.38 0.90 L3.38 3.60 L1.12 2.25 Z" fill="#777" stroke="none" stroke-width="0.60"/></svg>
<svg class="a" style="left:711.00px;top:504.55px" width="4.50" height="4.50"><path d="M1.12 0.90 L1.12 3.60 L3.38 2.25 Z" fill="#777" stroke="none" stroke-width="0.60"/></svg>
<div class="a t" style="left:727px;top:503.80px;font-size:5.0px;line-height:6.0px;color:#cfcfcf;font-family:'Liberation Sans',sans-serif;">Ln: 1</div>
<div class="a t" style="left:746px;top:503.80px;font-size:5.0px;line-height:6.0px;color:#cfcfcf;font-family:'Liberation Sans',sans-serif;">Ch: 1</div>
<div class="a" style="left:762px;top:502.5px;width:19px;height:8.5px;background:#262626;border-left:0.6px solid #3a3a3a;"></div>
<div class="a t" style="left:766px;top:503.80px;font-size:5.0px;line-height:6.0px;color:#cfcfcf;font-family:'Liberation Sans',sans-serif;">SPC</div>
<div class="a" style="left:781px;top:502.5px;width:21px;height:8.5px;background:#262626;border-left:0.6px solid #3a3a3a;"></div>
<div class="a t" style="left:785px;top:503.80px;font-size:5.0px;line-height:6.0px;color:#cfcfcf;font-family:'Liberation Sans',sans-serif;">CRLF</div>
<div class="a t" style="left:17px;top:515.88px;font-size:5.2px;line-height:6.24px;color:#a8a8a8;font-family:'Liberation Sans',sans-serif;">Output</div>
<svg class="a" style="left:779.50px;top:516.95px" width="3.50" height="3.50"><path d="M0.35 1.22 L3.15 1.22 L1.75 2.62 Z" fill="#ccc" stroke="none" stroke-width="0.60"/></svg>
<svg class="a" style="left:786px;top:516px" width="4" height="6"><rect x="0.8" y="0.5" width="2.4" height="3.5" fill="none" stroke="#ccc" stroke-width="0.6"/><path d="M2 4 V5.8" stroke="#ccc" stroke-width="0.6"/></svg>
<svg class="a" style="left:793.5px;top:516.2px" width="5" height="5"><path d="M0.5 0.5 L4.5 4.5 M4.5 0.5 L0.5 4.5" stroke="#d0d0d0" stroke-width="0.8"/></svg>
<div class="a t" style="left:17.5px;top:526.82px;font-size:5.3px;line-height:6.359999999999999px;color:#cfcfcf;font-family:'Liberation Sans',sans-serif;">Show output from:</div>
<div class="a" style="left:66px;top:525px;width:107px;height:9px;background:#333333;"></div>
<div class="a t" style="left:68px;top:526.52px;font-size:5.3px;line-height:6.359999999999999px;color:#e0e0e0;font-family:'Liberation Sans',sans-serif;">Debug</div>
<svg class="a" style="left:169.00px;top:527.95px" width="3.50" height="3.50"><path d="M0.35 1.22 L3.15 1.22 L1.75 2.62 Z" fill="#ccc" stroke="none" stroke-width="0.60"/></svg>
<div class="a" style="left:176px;top:525px;width:0.7px;height:9px;background:#444;"></div>
<div class="a" style="left:181px;top:529px;width:6px;height:0.8px;background:#555;"></div>
<div class="a" style="left:182px;top:531.5px;width:5px;height:0.8px;background:#555;"></div>
<div class="a" style="left:183px;top:526.5px;width:3px;height:0.8px;background:#555;"></div>
<div class="a" style="left:194px;top:529px;width:6px;height:0.8px;background:#555;"></div>
<div class="a" style="left:195px;top:531.5px;width:5px;height:0.8px;background:#555;"></div>
<div class="a" style="left:196px;top:526.5px;width:3px;height:0.8px;background:#555;"></div>
<div class="a" style="left:204px;top:529px;width:6px;height:0.8px;background:#555;"></div>
<div class="a" style="left:205px;top:531.5px;width:5px;height:0.8px;background:#555;"></div>
<div class="a" style="left:206px;top:526.5px;width:3px;height:0.8px;background:#555;"></div>
<div class="a" style="left:215px;top:525px;width:0.7px;height:9px;background:#444;"></div>
<svg class="a" style="left:218px;top:525.5px" width="7" height="8"><rect x="0.5" y="0.5" width="6" height="7" fill="none" stroke="#cfcfcf" stroke-width="0.6"/><rect x="1" y="1" width="3" height="2.4" fill="#e04040"/><path d="M1 4.5 H6 M1 6 H6" stroke="#cfcfcf" stroke-width="0.6"/></svg>
<div class="a" style="left:228px;top:525px;width:0.7px;height:9px;background:#444;"></div>
<svg class="a" style="left:231px;top:525.5px" width="8" height="8"><rect x="0.5" y="1" width="5" height="4" fill="none" stroke="#cfcfcf" stroke-width="0.6"/><path d="M3 5.5 H7 V3" fill="none" stroke="#3d9be9" stroke-width="1"/></svg>
<div class="a" style="left:241px;top:525px;width:0.7px;height:9px;background:#444;"></div>
<svg class="a" style="left:244px;top:525.5px" width="8" height="8"><circle cx="4" cy="4" r="3.2" fill="none" stroke="#cfcfcf" stroke-width="0.7"/><path d="M4 2 V4 L5.5 5" fill="none" stroke="#cfcfcf" stroke-width="0.6"/></svg>
<div class="a t" style="left:807.5px;top:35.76px;font-size:5.4px;line-height:6.48px;color:#bdbdbd;font-family:'Liberation Sans',sans-serif;">Solution Explorer</div>
<svg class="a" style="left:941.00px;top:36.90px" width="3.80" height="3.80"><path d="M0.38 1.33 L3.42 1.33 L1.90 2.85 Z" fill="#ccc" stroke="none" stroke-width="0.60"/></svg>
<svg class="a" style="left:949px;top:35.5px" width="4" height="6"><rect x="0.8" y="0.5" width="2.4" height="3.5" fill="none" stroke="#ccc" stroke-width="0.6"/><path d="M2 4 V5.8" stroke="#ccc" stroke-width="0.6"/></svg>
<svg class="a" style="left:956px;top:36px" width="5" height="5"><path d="M0.5 0.5 L4.5 4.5 M4.5 0.5 L0.5 4.5" stroke="#d0d0d0" stroke-width="0.8"/></svg>
<svg class="a" style="left:807px;top:45px" width="9" height="10"><rect x="3" y="1" width="5" height="7" fill="none" stroke="#cfcfcf" stroke-width="0.7"/><path d="M0.5 6.5 L3.5 4.5 V8.5 Z" fill="#8c6fe0"/></svg>
<div class="a" style="left:818px;top:46px;width:0.6px;height:8px;background:#444;"></div>
<svg class="a" style="left:821px;top:45.5px" width="8" height="9"><circle cx="4.5" cy="5" r="2.8" fill="none" stroke="#cfcfcf" stroke-width="0.8"/><circle cx="1.5" cy="1.5" r="1" fill="#3d9be9"/><path d="M4.5 3.5 V5 L5.5 6" stroke="#cfcfcf" stroke-width="0.5" fill="none"/></svg>
<svg class="a" style="left:830.50px;top:48.45px" width="3.50" height="3.50"><path d="M0.35 1.22 L3.15 1.22 L1.75 2.62 Z" fill="#ccc" stroke="none" stroke-width="0.60"/></svg>
<svg class="a" style="left:835px;top:46.5px" width="8" height="7"><path d="M1 2 H7 M5.5 0.8 L7 2 L5.5 3.2 M7 5 H1 M2.5 3.8 L1 5 L2.5 6.2" fill="none" stroke="#cfcfcf" stroke-width="0.6"/></svg>
<svg class="a" style="left:845.5px;top:45.5px" width="9" height="9"><path d="M4.5 1 A3.5 3.5 0 1 0 8 4.5" fill="none" stroke="#3d9be9" stroke-width="1"/><path d="M3.5 0 L5 1 L3.5 2.2" fill="none" stroke="#3d9be9" stroke-width="0.7"/></svg>
<svg class="a" style="left:856px;top:45.5px" width="8" height="9"><rect x="0.5" y="0.5" width="7" height="8" rx="1" fill="none" stroke="#cfcfcf" stroke-width="0.7"/><path d="M0.5 4.5 H7.5" stroke="#cfcfcf" stroke-width="0.7"/></svg>
<svg class="a" style="left:866px;top:45.5px" width="8" height="9"><rect x="0.5" y="2" width="6" height="6.5" rx="1" fill="none" stroke="#cfcfcf" stroke-width="0.7"/><path d="M2 2 V0.6 H7.5 V6" fill="none" stroke="#cfcfcf" stroke-width="0.6"/></svg>
<div class="a" style="left:878px;top:46px;width:0.6px;height:8px;background:#444;"></div>
<svg class="a" style="left:882.00px;top:47.70px" width="7.00" height="5.00"><path d="M2.45 1.25 L0.70 2.50 L2.45 3.75 M4.55 1.25 L6.30 2.50 L4.55 3.75" fill="none" stroke="#cfcfcf" stroke-width="0.60"/></svg>
<svg class="a" style="left:891.5px;top:45.5px" width="9" height="9"><path d="M1 8 L5 4" stroke="#cfcfcf" stroke-width="1.2"/><circle cx="6" cy="3" r="2.2" fill="none" stroke="#cfcfcf" stroke-width="0.9"/></svg>
<div class="a" style="left:901px;top:45px;width:11px;height:10px;background:#26263a;border:0.7px solid #6b58cc;"></div>
<div class="a" style="left:903.5px;top:50.5px;width:5px;height:1px;background:#cfcfcf;opacity:0.7;"></div>
<div class="a" style="left:905px;top:48.5px;width:4px;height:0.8px;background:#cfcfcf;opacity:0.5;"></div>
<div class="a t" style="left:808px;top:58.82px;font-size:5.3px;line-height:6.359999999999999px;color:#a8a8a8;font-family:'Liberation Sans',sans-serif;">Search Solution Explorer (Ctrl+;)</div>
<svg class="a" style="left:950px;top:58.5px" width="7" height="7"><circle cx="4.2" cy="2.8" r="2.1" fill="none" stroke="#cfcfcf" stroke-width="0.8"/><path d="M2.8 4.2 L0.7 6.3" stroke="#cfcfcf" stroke-width="1"/></svg>
<svg class="a" style="left:958.00px;top:60.25px" width="3.50" height="3.50"><path d="M0.35 1.22 L3.15 1.22 L1.75 2.62 Z" fill="#ccc" stroke="none" stroke-width="0.60"/></svg>
<div class="a t" style="left:821px;top:68.26px;font-size:5.4px;line-height:6.48px;color:#e0e0e0;font-family:'Liberation Sans',sans-serif;">Solution ‘TVSimulator’ (2 of 2 projects)</div>
<svg class="a" style="left:810px;top:68.0px" width="8" height="7"><rect x="0.5" y="0.5" width="7" height="6" fill="none" stroke="#9a9a9a" stroke-width="0.7"/><path d="M4 4 L7 2.5 V6.5 Z" fill="#8c6fe0"/></svg>
<div class="a t" style="left:829.6px;top:77.08px;font-size:5.4px;line-height:6.48px;color:#e0e0e0;font-family:'Liberation Sans',sans-serif;font-weight:bold;">TVSimulator</div>
<svg class="a" style="left:810.50px;top:78.57px" width="3.50" height="3.50"><path d="M2.98 0.53 L2.98 2.98 L0.53 2.98 Z" fill="#cfcfcf" stroke="none" stroke-width="0.60"/></svg>
<svg class="a" style="left:818.5px;top:76.8px" width="8" height="7"><rect x="0.5" y="0.5" width="7" height="6" fill="#2b2b2b" stroke="#9a9a9a" stroke-width="0.7"/><rect x="2" y="2.5" width="4" height="2" fill="#3fb950"/></svg>
<div class="a t" style="left:838px;top:85.90px;font-size:5.4px;line-height:6.48px;color:#e0e0e0;font-family:'Liberation Sans',sans-serif;">Properties</div>
<svg class="a" style="left:818.00px;top:86.64px" width="5.00" height="5.00"><path d="M1.25 0.50 L1.25 4.50 L4.00 2.50 Z" fill="none" stroke="#cfcfcf" stroke-width="0.60"/></svg>
<svg class="a" style="left:828px;top:85.6px" width="7" height="7"><path d="M0.8 6.2 L3.8 3.2" stroke="#cfcfcf" stroke-width="1"/><circle cx="4.8" cy="2.2" r="1.6" fill="none" stroke="#cfcfcf" stroke-width="0.8"/></svg>
<div class="a t" style="left:838px;top:94.72px;font-size:5.4px;line-height:6.48px;color:#e0e0e0;font-family:'Liberation Sans',sans-serif;">References</div>
<svg class="a" style="left:818.00px;top:95.46px" width="5.00" height="5.00"><path d="M1.25 0.50 L1.25 4.50 L4.00 2.50 Z" fill="none" stroke="#cfcfcf" stroke-width="0.60"/></svg>
<svg class="a" style="left:828px;top:94.5px" width="7" height="7"><rect x="3" y="1" width="3.5" height="3.5" fill="none" stroke="#cfcfcf" stroke-width="0.6"/><path d="M0.5 2 H3 M0.5 4.5 H3 M1.5 1 V5.5" stroke="#cfcfcf" stroke-width="0.6"/></svg>
<div class="a t" style="left:838px;top:103.54px;font-size:5.4px;line-height:6.48px;color:#e0e0e0;font-family:'Liberation Sans',sans-serif;">Resources</div>
<svg class="a" style="left:818.00px;top:104.28px" width="5.00" height="5.00"><path d="M1.25 0.50 L1.25 4.50 L4.00 2.50 Z" fill="none" stroke="#cfcfcf" stroke-width="0.60"/></svg>
<svg class="a" style="left:828px;top:103.3px" width="7" height="7"><path d="M0.5 1.5 H3 L3.6 2.2 H6.5 V6.5 H0.5 Z" fill="#d6a74c"/><path d="M1 3.5 H6" stroke="#8a6a2a" stroke-width="0.4"/></svg>
<div class="a t" style="left:838px;top:112.36px;font-size:5.4px;line-height:6.48px;color:#e0e0e0;font-family:'Liberation Sans',sans-serif;">App.config</div>
<svg class="a" style="left:828px;top:112.1px" width="7" height="7"><path d="M1 0.5 H4.5 L6 2 V6.5 H1 Z" fill="none" stroke="#cfcfcf" stroke-width="0.6"/><circle cx="3.5" cy="4.5" r="1.2" fill="none" stroke="#cfcfcf" stroke-width="0.5"/></svg>
<div class="a t" style="left:838px;top:121.18px;font-size:5.4px;line-height:6.48px;color:#e0e0e0;font-family:'Liberation Sans',sans-serif;">MainForm.cs</div>
<svg class="a" style="left:818.00px;top:121.92px" width="5.00" height="5.00"><path d="M1.25 0.50 L1.25 4.50 L4.00 2.50 Z" fill="none" stroke="#cfcfcf" stroke-width="0.60"/></svg>
<svg class="a" style="left:828px;top:120.9px" width="7" height="7"><rect x="0.5" y="0.5" width="6" height="6" fill="#6a5fa8" stroke="#b9a9f0" stroke-width="0.5"/><path d="M1 2 H6" stroke="#e0e0e0" stroke-width="0.5"/></svg>
<div class="a t" style="left:838px;top:130.00px;font-size:5.4px;line-height:6.48px;color:#e0e0e0;font-family:'Liberation Sans',sans-serif;">MPSSE_Interface.cs</div>
<svg class="a" style="left:818.00px;top:130.74px" width="5.00" height="5.00"><path d="M1.25 0.50 L1.25 4.50 L4.00 2.50 Z" fill="none" stroke="#cfcfcf" stroke-width="0.60"/></svg>
<div class="a t" style="left:827px;top:129.24px;font-family:'Liberation Sans';font-size:5px;line-height:8px;color:#56b75a;font-weight:bold">C#</div>
<div class="a t" style="left:838px;top:138.82px;font-size:5.4px;line-height:6.48px;color:#e0e0e0;font-family:'Liberation Sans',sans-serif;">Program.cs</div>
<svg class="a" style="left:818.00px;top:139.56px" width="5.00" height="5.00"><path d="M1.25 0.50 L1.25 4.50 L4.00 2.50 Z" fill="none" stroke="#cfcfcf" stroke-width="0.60"/></svg>
<div class="a t" style="left:827px;top:138.06px;font-family:'Liberation Sans';font-size:5px;line-height:8px;color:#56b75a;font-weight:bold">C#</div>
<div class="a t" style="left:838px;top:147.64px;font-size:5.4px;line-height:6.48px;color:#e0e0e0;font-family:'Liberation Sans',sans-serif;">SimulationSystem.cs</div>
<svg class="a" style="left:818.00px;top:148.38px" width="5.00" height="5.00"><path d="M1.25 0.50 L1.25 4.50 L4.00 2.50 Z" fill="none" stroke="#cfcfcf" stroke-width="0.60"/></svg>
<div class="a t" style="left:827px;top:146.88px;font-family:'Liberation Sans';font-size:5px;line-height:8px;color:#56b75a;font-weight:bold">C#</div>
<div class="a t" style="left:838px;top:156.46px;font-size:5.4px;line-height:6.48px;color:#e0e0e0;font-family:'Liberation Sans',sans-serif;">SPIInterface.cs</div>
<svg class="a" style="left:818.00px;top:157.20px" width="5.00" height="5.00"><path d="M1.25 0.50 L1.25 4.50 L4.00 2.50 Z" fill="none" stroke="#cfcfcf" stroke-width="0.60"/></svg>
<div class="a t" style="left:827px;top:155.7px;font-family:'Liberation Sans';font-size:5px;line-height:8px;color:#56b75a;font-weight:bold">C#</div>
<div class="a t" style="left:838px;top:165.28px;font-size:5.4px;line-height:6.48px;color:#e0e0e0;font-family:'Liberation Sans',sans-serif;">SVNVersion.cs</div>
<svg class="a" style="left:818.00px;top:166.02px" width="5.00" height="5.00"><path d="M1.25 0.50 L1.25 4.50 L4.00 2.50 Z" fill="none" stroke="#cfcfcf" stroke-width="0.60"/></svg>
<div class="a t" style="left:827px;top:164.52px;font-family:'Liberation Sans';font-size:5px;line-height:8px;color:#56b75a;font-weight:bold">C#</div>
<div class="a t" style="left:829.6px;top:174.10px;font-size:5.4px;line-height:6.48px;color:#e0e0e0;font-family:'Liberation Sans',sans-serif;">ICE - TV Simulator</div>
<svg class="a" style="left:809.50px;top:174.84px" width="5.00" height="5.00"><path d="M1.25 0.50 L1.25 4.50 L4.00 2.50 Z" fill="none" stroke="#cfcfcf" stroke-width="0.60"/></svg>
<svg class="a" style="left:817.5px;top:173.3px" width="9" height="8"><rect x="1" y="0.5" width="7" height="6" rx="1" fill="none" stroke="#3d9be9" stroke-width="0.8"/><rect x="3" y="3" width="4" height="4" fill="#cfcfcf" opacity="0.7"/></svg>
<div class="a" style="left:806px;top:354.5px;width:44px;height:10.5px;background:#2a2a2a;"></div>
<div class="a t" style="left:807.5px;top:355.36px;font-size:5.4px;line-height:6.48px;color:#e8e8e8;font-family:'Liberation Sans',sans-serif;">Solution Explorer</div>
<div class="a t" style="left:853.5px;top:355.36px;font-size:5.4px;line-height:6.48px;color:#a0a0a0;font-family:'Liberation Sans',sans-serif;">Git Changes</div>
<div class="a t" style="left:807.5px;top:367.76px;font-size:5.4px;line-height:6.48px;color:#a8a8a8;font-family:'Liberation Sans',sans-serif;">Properties</div>
<svg class="a" style="left:941.00px;top:368.90px" width="3.80" height="3.80"><path d="M0.38 1.33 L3.42 1.33 L1.90 2.85 Z" fill="#ccc" stroke="none" stroke-width="0.60"/></svg>
<svg class="a" style="left:949px;top:367.5px" width="4" height="6"><rect x="0.8" y="0.5" width="2.4" height="3.5" fill="none" stroke="#ccc" stroke-width="0.6"/><path d="M2 4 V5.8" stroke="#ccc" stroke-width="0.6"/></svg>
<svg class="a" style="left:956px;top:368px" width="5" height="5"><path d="M0.5 0.5 L4.5 4.5 M4.5 0.5 L0.5 4.5" stroke="#d0d0d0" stroke-width="0.8"/></svg>
<svg class="a" style="left:958.50px;top:379.25px" width="3.50" height="3.50"><path d="M0.35 1.22 L3.15 1.22 L1.75 2.62 Z" fill="#ccc" stroke="none" stroke-width="0.60"/></svg>
<div class="a" style="left:807px;top:387.5px;width:10px;height:10px;background:#2a2a3c;border:0.7px solid #6b57d2;"></div>
<svg class="a" style="left:808.5px;top:389px" width="7" height="7"><path d="M0.5 1 H3 M0.5 3.5 H3 M0.5 6 H3 M4 1 H6.5 M4 3.5 H6.5 M4 6 H6.5" stroke="#cfcfcf" stroke-width="0.9"/></svg>
<svg class="a" style="left:818px;top:388.5px" width="8" height="8"><rect x="0.5" y="0.5" width="3" height="3" fill="none" stroke="#cfcfcf" stroke-width="0.6"/><path d="M1 5 H3 L1.5 7 H3.5" fill="none" stroke="#cfcfcf" stroke-width="0.5"/><path d="M6 1 V7 M4.8 5.5 L6 7 L7.2 5.5" fill="none" stroke="#3d9be9" stroke-width="0.7"/></svg>
<div class="a" style="left:829px;top:388px;width:0.6px;height:9px;background:#444;"></div>
<svg class="a" style="left:832px;top:388.5px" width="8" height="8"><path d="M0.8 7.2 L4 4" stroke="#9a9a9a" stroke-width="1.3"/><circle cx="5.5" cy="2.5" r="2" fill="none" stroke="#9a9a9a" stroke-width="0.9"/></svg>
<div class="a" style="left:806px;top:398.5px;width:157px;height:0.6px;background:#2e2e2e;"></div>
<svg class="a" style="left:2px;top:537px" width="9" height="9"><rect x="0.5" y="0.5" width="8" height="8" rx="1" fill="#1c7a3e"/><path d="M2 2 L4 6.5 L6.5 2" fill="none" stroke="#e0f0e0" stroke-width="0.9"/></svg>
<div class="a t" style="left:13px;top:538.34px;font-size:5.6px;line-height:6.72px;color:#1a1a1a;font-family:'Liberation Sans',sans-serif;">C:\WIP\PN088_Quirinus\Firmware\MCU\Trunk\PN088_Quirinus_Firmware.uvprojx - µVision</div>
<div class="a" style="left:923px;top:541.5px;width:5px;height:0.8px;background:#333;"></div>
<svg class="a" style="left:943.5px;top:539px" width="6" height="6"><rect x="0.6" y="0.6" width="4.8" height="4.8" fill="none" stroke="#333" stroke-width="0.8"/></svg>
<svg class="a" style="left:965px;top:539px" width="6" height="6"><path d="M0.4 0.4 L5.6 5.6 M5.6 0.4 L0.4 5.6" stroke="#333" stroke-width="0.8"/></svg>
<div class="a t" style="left:2px;top:550.76px;font-size:5.4px;line-height:6.48px;color:#1a1a1a;font-family:'Liberation Sans',sans-serif;">File</div>
<div class="a t" style="left:18px;top:550.76px;font-size:5.4px;line-height:6.48px;color:#1a1a1a;font-family:'Liberation Sans',sans-serif;">Edit</div>
<div class="a t" style="left:36px;top:550.76px;font-size:5.4px;line-height:6.48px;color:#1a1a1a;font-family:'Liberation Sans',sans-serif;">View</div>
<div class="a t" style="left:55px;top:550.76px;font-size:5.4px;line-height:6.48px;color:#1a1a1a;font-family:'Liberation Sans',sans-serif;">Project</div>
<div class="a t" style="left:79px;top:550.76px;font-size:5.4px;line-height:6.48px;color:#1a1a1a;font-family:'Liberation Sans',sans-serif;">Flash</div>
<div class="a t" style="left:100px;top:550.76px;font-size:5.4px;line-height:6.48px;color:#1a1a1a;font-family:'Liberation Sans',sans-serif;">Debug</div>
<div class="a t" style="left:124px;top:550.76px;font-size:5.4px;line-height:6.48px;color:#1a1a1a;font-family:'Liberation Sans',sans-serif;">Peripherals</div>
<div class="a t" style="left:159px;top:550.76px;font-size:5.4px;line-height:6.48px;color:#1a1a1a;font-family:'Liberation Sans',sans-serif;">Tools</div>
<div class="a t" style="left:180px;top:550.76px;font-size:5.4px;line-height:6.48px;color:#1a1a1a;font-family:'Liberation Sans',sans-serif;">SVCS</div>
<div class="a t" style="left:200px;top:550.76px;font-size:5.4px;line-height:6.48px;color:#1a1a1a;font-family:'Liberation Sans',sans-serif;">Window</div>
<div class="a t" style="left:228px;top:550.76px;font-size:5.4px;line-height:6.48px;color:#1a1a1a;font-family:'Liberation Sans',sans-serif;">Help</div>
<div class="a" style="left:0px;top:559.2px;width:980px;height:0.7px;background:#dcdcdc;"></div>
<div class="a" style="left:0px;top:586.5px;width:980px;height:0.8px;background:#d6d6d6;"></div>
<svg class="a" style="left:6px;top:562px" width="7" height="8"><path d="M0.5 0.5 H4.5 L6.5 2.5 V7.5 H0.5 Z" fill="#ffffff" stroke="#8aa4c0" stroke-width="0.6"/></svg>
<svg class="a" style="left:16px;top:562.5px" width="9" height="8"><path d="M0.5 2 H3.5 L4.2 2.8 H8 V7.5 H0.5 Z" fill="#e8b84a"/><path d="M5 1.5 L8 0.5" stroke="#3070c0" stroke-width="0.7"/></svg>
<svg class="a" style="left:28px;top:562.5px" width="8" height="8"><rect x="0.5" y="0.5" width="7" height="7" fill="#4a4ac8"/><rect x="2" y="1" width="4" height="2.5" fill="#e0e0ff"/></svg>
<svg class="a" style="left:40px;top:562.5px" width="8" height="8"><path d="M1 2.5 L3 0.5 H7.5 V5.5 L5.5 7.5 H1 Z" fill="#5050c8"/><path d="M3 3 L6 1.5" stroke="#c0c0ff" stroke-width="0.7"/></svg>
<div class="a" style="left:50px;top:561.5px;width:0.7px;height:9px;background:#c8c8c8;"></div>
<svg class="a" style="left:56px;top:562px" width="7" height="8"><path d="M1.5 0.5 L3.5 4.5 L5.5 0.5" fill="none" stroke="#5a7aa0" stroke-width="0.7"/><circle cx="2" cy="6" r="1.3" fill="none" stroke="#3a6ab0" stroke-width="0.7"/><circle cx="5" cy="6" r="1.3" fill="none" stroke="#3a6ab0" stroke-width="0.7"/></svg>
<svg class="a" style="left:67px;top:562px" width="9" height="8"><rect x="0.5" y="0.5" width="5" height="5" fill="#cfe0f0" stroke="#7a9ac0" stroke-width="0.5"/><rect x="3" y="2.5" width="5" height="5" fill="#b8d0ea" stroke="#7a9ac0" stroke-width="0.5"/></svg>
<svg class="a" style="left:78px;top:562px" width="9" height="8"><rect x="0.5" y="1" width="6" height="6.5" fill="#e8c060" stroke="#a08030" stroke-width="0.5"/><rect x="3.5" y="3" width="5" height="4.5" fill="#f5f5f5" stroke="#7a7a7a" stroke-width="0.5"/></svg>
<div class="a" style="left:89px;top:561.5px;width:0.7px;height:9px;background:#c8c8c8;"></div>
<svg class="a" style="left:95px;top:562px" width="8" height="8"><path d="M1.5 3 H5 A2.3 2.3 0 0 1 5 7.6 H3" fill="none" stroke="#a8a8a8" stroke-width="0.8"/><path d="M3 1.3 L1.3 3 L3 4.7" fill="none" stroke="#a8a8a8" stroke-width="0.8"/></svg>
<svg class="a" style="left:107px;top:562px" width="8" height="8"><path d="M6.5 3 H3 A2.3 2.3 0 0 0 3 7.6 H5" fill="none" stroke="#c0c0c0" stroke-width="0.8"/><path d="M5 1.3 L6.7 3 L5 4.7" fill="none" stroke="#c0c0c0" stroke-width="0.8"/></svg>
<div class="a" style="left:117px;top:561.5px;width:0.7px;height:9px;background:#c8c8c8;"></div>
<svg class="a" style="left:122px;top:562.5px" width="8" height="7"><path d="M7.5 3.5 H1.5 M3.8 1 L1 3.5 L3.8 6" fill="none" stroke="#3a80d0" stroke-width="1.2"/></svg>
<svg class="a" style="left:134px;top:562.5px" width="8" height="7"><path d="M0.5 3.5 H6.5 M4.2 1 L7 3.5 L4.2 6" fill="none" stroke="#b8b8c8" stroke-width="1.1"/></svg>
<div class="a" style="left:144px;top:561.5px;width:0.7px;height:9px;background:#c8c8c8;"></div>
<svg class="a" style="left:149px;top:562px" width="8" height="8"><path d="M1.5 0.5 V7.5" stroke="#3a6ab0" stroke-width="0.8"/><path d="M1.8 1 H6.5 L5.2 2.8 L6.5 4.5 H1.8 Z" fill="#2a8ae0"/></svg>
<svg class="a" style="left:161px;top:562px" width="8" height="8"><rect x="1" y="0.5" width="5" height="6" fill="#e8e8e8" stroke="#b0b0b0" stroke-width="0.5"/><path d="M2 2 H5 M2 3.5 H5 M2 5 H5" stroke="#b8b8b8" stroke-width="0.5"/><path d="M0.5 6 L2.5 7.5" stroke="#b0b0b0" stroke-width="0.6"/></svg>
<svg class="a" style="left:172px;top:562px" width="8" height="8"><rect x="1" y="0.5" width="5" height="6" fill="#e8e8e8" stroke="#b0b0b0" stroke-width="0.5"/><path d="M2 2 H5 M2 3.5 H5 M2 5 H5" stroke="#b8b8b8" stroke-width="0.5"/><path d="M0.5 6 L2.5 7.5" stroke="#b0b0b0" stroke-width="0.6"/></svg>
<svg class="a" style="left:183px;top:562px" width="8" height="8"><rect x="1" y="0.5" width="5" height="6" fill="#e8e8e8" stroke="#b0b0b0" stroke-width="0.5"/><path d="M2 2 H5 M2 3.5 H5 M2 5 H5" stroke="#b8b8b8" stroke-width="0.5"/><path d="M0.5 6 L2.5 7.5" stroke="#b0b0b0" stroke-width="0.6"/></svg>
<div class="a" style="left:193px;top:561.5px;width:0.7px;height:9px;background:#c8c8c8;"></div>
<svg class="a" style="left:198px;top:562px" width="8" height="8"><path d="M0.5 1 H5 M0.5 3 H5 M0.5 5 H5 M0.5 7 H5" stroke="#606060" stroke-width="0.6"/><path d="M5 0.5 V5 H7.5" fill="none" stroke="#3060a0" stroke-width="1"/></svg>
<svg class="a" style="left:210px;top:562px" width="8" height="8"><path d="M0.5 1 H5 M0.5 3 H5 M0.5 5 H5 M0.5 7 H5" stroke="#606060" stroke-width="0.6"/><path d="M5 0.5 V5 H7.5" fill="none" stroke="#3060a0" stroke-width="1"/></svg>
<svg class="a" style="left:221px;top:562px" width="8" height="8"><path d="M1 7 L4 1 M3 7 L6 1" stroke="#40a040" stroke-width="0.9"/><path d="M0.5 4 H7.5" stroke="#a0a0a0" stroke-width="0.5"/></svg>
<svg class="a" style="left:232px;top:562px" width="9" height="8"><path d="M1 7 L4 1 M3 7 L6 1" stroke="#40a040" stroke-width="0.9"/><path d="M5.5 4.5 L8.5 7.5 M8.5 4.5 L5.5 7.5" stroke="#e02020" stroke-width="0.9"/></svg>
<div class="a" style="left:243px;top:561.5px;width:0.7px;height:9px;background:#c8c8c8;"></div>
<svg class="a" style="left:249px;top:562px" width="8" height="8"><rect x="0.5" y="1.5" width="6" height="5" rx="0.5" fill="#e0b040"/><circle cx="4.5" cy="4" r="1.8" fill="#606060"/></svg>
<div class="a" style="left:256px;top:561.5px;width:0.7px;height:9px;background:#c8c8c8;"></div>
<div class="a" style="left:325px;top:562px;width:6px;height:8px;background:#f8f8f8;border:0.5px solid #c0c0c0;"></div>
<svg class="a" style="left:336px;top:562px" width="9" height="8"><rect x="0.5" y="0.5" width="5" height="6.5" fill="#e8eef8" stroke="#7090b0" stroke-width="0.5"/><circle cx="5.5" cy="4.5" r="1.5" fill="none" stroke="#203060" stroke-width="0.8"/><path d="M6.5 5.5 L8.5 7.5" stroke="#203060" stroke-width="0.9"/></svg>
<svg class="a" style="left:347px;top:562px" width="9" height="8"><path d="M1 7 L4 4" stroke="#3070d0" stroke-width="1.5"/><path d="M4 1 L8 1 L8 5 Z" fill="#203050"/></svg>
<div class="a" style="left:357px;top:561.5px;width:0.7px;height:9px;background:#c8c8c8;"></div>
<svg class="a" style="left:362px;top:562px" width="8" height="8"><circle cx="3.5" cy="3.5" r="3" fill="#e04848"/><circle cx="3.5" cy="3.5" r="1.5" fill="#f5d0d0"/><path d="M5.5 5.5 L7.8 7.8" stroke="#4060a0" stroke-width="1"/></svg>
<svg class="a" style="left:373.00px;top:564.75px" width="3.50" height="3.50"><path d="M0.35 1.22 L3.15 1.22 L1.75 2.62 Z" fill="#333" stroke="none" stroke-width="0.60"/></svg>
<div class="a" style="left:378px;top:561.5px;width:0.7px;height:9px;background:#c8c8c8;"></div>
<svg class="a" style="left:383px;top:563px" width="6" height="6"><circle cx="3" cy="3" r="2.5" fill="#e02020"/></svg>
<svg class="a" style="left:394px;top:563px" width="6" height="6"><circle cx="3" cy="3" r="2.3" fill="none" stroke="#a0a0a0" stroke-width="0.6"/></svg>
<svg class="a" style="left:404px;top:562px" width="8" height="8"><circle cx="2.5" cy="5.5" r="2" fill="none" stroke="#e03030" stroke-width="0.9"/><circle cx="5.5" cy="2.5" r="2" fill="none" stroke="#e03030" stroke-width="0.9"/></svg>
<svg class="a" style="left:415px;top:562px" width="8" height="8"><circle cx="3" cy="4.5" r="2.8" fill="#d83030"/><rect x="3.5" y="3.5" width="4" height="4" fill="#e8c040"/></svg>
<svg class="a" style="left:426.00px;top:564.75px" width="3.50" height="3.50"><path d="M0.35 1.22 L3.15 1.22 L1.75 2.62 Z" fill="#333" stroke="none" stroke-width="0.60"/></svg>
<div class="a" style="left:431px;top:561.5px;width:0.7px;height:9px;background:#c8c8c8;"></div>
<div class="a" style="left:435px;top:561px;width:13px;height:10px;background:#cde4f7;border:0.5px solid #99c8ef;"></div>
<svg class="a" style="left:437px;top:563px" width="7" height="6"><rect x="0.5" y="0.5" width="6" height="5" fill="#f0e0a0" stroke="#6080a0" stroke-width="0.5"/><rect x="1" y="1" width="5" height="1.2" fill="#4070b0"/></svg>
<svg class="a" style="left:444.50px;top:564.75px" width="3.50" height="3.50"><path d="M0.35 1.22 L3.15 1.22 L1.75 2.62 Z" fill="#333" stroke="none" stroke-width="0.60"/></svg>
<div class="a" style="left:450px;top:561.5px;width:0.7px;height:9px;background:#c8c8c8;"></div>
<svg class="a" style="left:455px;top:562px" width="8" height="8"><path d="M1 7 L4.5 3.5" stroke="#3a60a0" stroke-width="1.3"/><circle cx="5.5" cy="2.5" r="1.8" fill="none" stroke="#3a60a0" stroke-width="0.9"/></svg>
<div class="a" style="left:468px;top:561px;width:0.6px;height:11px;background:#d0d0d0;"></div>
<svg class="a" style="left:5px;top:575.5px" width="9" height="9"><path d="M1 5 L4.5 2.5 L8 5 L4.5 7.5 Z" fill="#c8d8e8" stroke="#7090b0" stroke-width="0.5"/><path d="M4.5 0.5 V4" stroke="#2060c0" stroke-width="1.2"/></svg>
<svg class="a" style="left:16px;top:576px" width="9" height="8"><rect x="0.5" y="0.5" width="8" height="6" fill="#e8eef8" stroke="#8aa0b8" stroke-width="0.5"/><circle cx="4.5" cy="3.5" r="1.2" fill="#3070d0"/></svg>
<svg class="a" style="left:28px;top:576px" width="9" height="8"><rect x="0.5" y="0.5" width="8" height="6" fill="#e8eef8" stroke="#8aa0b8" stroke-width="0.5"/><rect x="1.5" y="2.5" width="2.5" height="2" fill="#3070d0"/><rect x="5" y="2.5" width="2.5" height="2" fill="#3070d0"/></svg>
<svg class="a" style="left:40px;top:575.5px" width="9" height="9"><path d="M0.5 4 L4.5 2 L8.5 4 V7 L4.5 8.5 L0.5 7 Z" fill="#70a850"/><path d="M2.5 1 H6.5 V4 H2.5 Z" fill="#a0b8d0"/></svg>
<svg class="a" style="left:51.50px;top:578.75px" width="3.50" height="3.50"><path d="M0.35 1.22 L3.15 1.22 L1.75 2.62 Z" fill="#333" stroke="none" stroke-width="0.60"/></svg>
<svg class="a" style="left:58px;top:576px" width="9" height="8"><rect x="0.5" y="1" width="8" height="6" fill="#f0f0f0" stroke="#c0c0c0" stroke-width="0.5"/><path d="M1.5 3 H7.5 M1.5 5 H7.5" stroke="#c8c8c8" stroke-width="0.5"/></svg>
<div class="a" style="left:69px;top:574.5px;width:0.7px;height:10px;background:#c8c8c8;"></div>
<svg class="a" style="left:73px;top:575.5px" width="9" height="9"><rect x="2" y="0.5" width="5" height="3" fill="#3a70b0"/><rect x="0.5" y="4.5" width="3.5" height="3.5" fill="#3a70b0"/><rect x="5" y="4.5" width="3.5" height="3.5" fill="#3a70b0"/><circle cx="4.5" cy="4.5" r="1.3" fill="#e0b020"/></svg>
<div class="a" style="left:84.5px;top:574.5px;width:0.7px;height:10px;background:#c8c8c8;"></div>
<div class="a t" style="left:89px;top:577.12px;font-size:5.3px;line-height:6.359999999999999px;color:#333;font-family:'Liberation Sans',sans-serif;">TM4C129x</div>
<div class="a" style="left:151px;top:575px;width:6.5px;height:8px;background:#f8f8f8;border:0.5px solid #c8c8c8;"></div>
<svg class="a" style="left:152.30px;top:577.00px" width="5.00" height="5.00"><path d="M0.75 1.75 L2.50 3.50 L4.25 1.75" fill="none" stroke="#777" stroke-width="0.60"/></svg>
<svg class="a" style="left:161px;top:575.5px" width="9" height="9"><path d="M0.5 8 L4 3 L7.5 8" fill="none" stroke="#3a70b0" stroke-width="0.9"/><path d="M3 5 L8 0.8" stroke="#606060" stroke-width="0.7"/></svg>
<div class="a" style="left:172px;top:574.5px;width:0.7px;height:10px;background:#c8c8c8;"></div>
<svg class="a" style="left:177px;top:575px" width="9" height="9"><rect x="2.5" y="0.5" width="4" height="4" fill="#c03030"/><rect x="0.5" y="4.5" width="4" height="4" fill="#2f9a3a"/><rect x="4.5" y="4.5" width="4" height="4" fill="#3a60b0"/></svg>
<svg class="a" style="left:188px;top:575px" width="9" height="9"><rect x="0.5" y="0.5" width="5" height="6" fill="#e8e8e8" stroke="#a0a0a0" stroke-width="0.5"/><rect x="3" y="2.5" width="5" height="6" fill="#e0e0e0" stroke="#a0a0a0" stroke-width="0.5"/></svg>
<svg class="a" style="left:200px;top:575.5px" width="9" height="9"><path d="M4.5 0.5 L8.5 4.5 L4.5 8.5 L0.5 4.5 Z" fill="#1f9a2a"/><path d="M4.5 2.5 V6.5 M2.5 4.5 H6.5" stroke="#fff" stroke-width="0.8"/></svg>
<svg class="a" style="left:211px;top:575.5px" width="9" height="9"><path d="M0.5 2 H8.5 L6 5 H3 Z" fill="#40a0c0"/><path d="M4.5 5 V8.5" stroke="#2f9a3a" stroke-width="1.2"/></svg>
<svg class="a" style="left:222px;top:575px" width="9" height="9"><rect x="0.5" y="2.5" width="8" height="6" fill="#2f8a3a"/><circle cx="4.5" cy="4.5" r="2.5" fill="#a0c8e0"/></svg>
<div class="a" style="left:231.5px;top:573.5px;width:0.6px;height:13px;background:#d0d0d0;"></div>
<div class="a" style="left:0;top:587px;width:108px;height:10px;background:linear-gradient(#e3ecf6,#c9d8ea)"></div>
<div class="a t" style="left:0px;top:588.70px;font-size:5.5px;line-height:6.6px;color:#222;font-family:'Liberation Sans',sans-serif;">Project</div>
<svg class="a" style="left:92.5px;top:589.5px" width="5" height="6"><rect x="1" y="0.5" width="3" height="3.3" fill="#333"/><path d="M0.3 3.8 H4.7 M2.5 3.8 V5.8" stroke="#333" stroke-width="0.6"/></svg>
<div class="a" style="left:101px;top:589px;width:6px;height:6px;background:#e04a4a;"></div>
<svg class="a" style="left:102.5px;top:590.5px" width="3" height="3"><path d="M0.3 0.3 L2.7 2.7 M2.7 0.3 L0.3 2.7" stroke="#fff" stroke-width="0.6"/></svg>
<div class="a" style="left:108px;top:587px;width:4px;height:393px;background:#eeeeee;"></div>
<div class="a" style="left:100px;top:598px;width:8px;height:382px;background:#f0f0f0;"></div>
<div class="a" style="left:101px;top:598px;width:6px;height:10px;background:#e8e8e8;"></div>
<svg class="a" style="left:102.00px;top:601.05px" width="3.50" height="3.50"><path d="M0.35 2.62 L3.15 2.62 L1.75 0.88 Z" fill="#222" stroke="none" stroke-width="0.60"/></svg>
<div class="a" style="left:100.5px;top:609px;width:6.5px;height:256px;background:#d6d6d6;border:0.5px solid #c8c8c8;"></div>
<div class="a" style="left:107.3px;top:598px;width:0.7px;height:382px;background:#b8b8b8;"></div>
<div class="a" style="left:14.25px;top:607.0px;width:0.6px;height:5.8px;background:#e2e2e2"></div>
<div class="a" style="left:24.0px;top:617.0px;width:0.6px;height:368.0px;background:#e2e2e2"></div>
<div class="a" style="left:33.75px;top:627.0px;width:0.6px;height:5.3px;background:#e2e2e2"></div>
<div class="a" style="left:33.75px;top:646.0px;width:0.6px;height:191.0px;background:#e2e2e2"></div>
<div class="a" style="left:43.5px;top:705.0px;width:0.6px;height:122.3px;background:#e2e2e2"></div>
<div class="a" style="left:33.75px;top:851.0px;width:0.6px;height:64.0px;background:#e2e2e2"></div>
<div class="a" style="left:33.75px;top:929.0px;width:0.6px;height:56.0px;background:#e2e2e2"></div>
<div class="a" style="left:4.5px;top:602.8px;width:6.5px;height:0.6px;background:#e2e2e2"></div>
<div class="a" style="left:14.25px;top:612.5px;width:6.5px;height:0.6px;background:#e2e2e2"></div>
<div class="a" style="left:24.0px;top:622.3px;width:6.5px;height:0.6px;background:#e2e2e2"></div>
<div class="a" style="left:33.75px;top:632.0px;width:6.5px;height:0.6px;background:#e2e2e2"></div>
<div class="a" style="left:24.0px;top:641.8px;width:6.5px;height:0.6px;background:#e2e2e2"></div>
<div class="a" style="left:33.75px;top:651.5px;width:6.5px;height:0.6px;background:#e2e2e2"></div>
<div class="a" style="left:33.75px;top:661.3px;width:6.5px;height:0.6px;background:#e2e2e2"></div>
<div class="a" style="left:33.75px;top:671.0px;width:6.5px;height:0.6px;background:#e2e2e2"></div>
<div class="a" style="left:33.75px;top:680.8px;width:6.5px;height:0.6px;background:#e2e2e2"></div>
<div class="a" style="left:33.75px;top:690.5px;width:6.5px;height:0.6px;background:#e2e2e2"></div>
<div class="a" style="left:33.75px;top:700.3px;width:6.5px;height:0.6px;background:#e2e2e2"></div>
<div class="a" style="left:43.5px;top:710.0px;width:6.5px;height:0.6px;background:#e2e2e2"></div>
<div class="a" style="left:43.5px;top:719.8px;width:6.5px;height:0.6px;background:#e2e2e2"></div>
<div class="a" style="left:43.5px;top:729.5px;width:6.5px;height:0.6px;background:#e2e2e2"></div>
<div class="a" style="left:43.5px;top:739.3px;width:6.5px;height:0.6px;background:#e2e2e2"></div>
<div class="a" style="left:43.5px;top:749.0px;width:6.5px;height:0.6px;background:#e2e2e2"></div>
<div class="a" style="left:43.5px;top:758.8px;width:6.5px;height:0.6px;background:#e2e2e2"></div>
<div class="a" style="left:43.5px;top:768.5px;width:6.5px;height:0.6px;background:#e2e2e2"></div>
<div class="a" style="left:43.5px;top:778.3px;width:6.5px;height:0.6px;background:#e2e2e2"></div>
<div class="a" style="left:43.5px;top:788.0px;width:6.5px;height:0.6px;background:#e2e2e2"></div>
<div class="a" style="left:43.5px;top:797.8px;width:6.5px;height:0.6px;background:#e2e2e2"></div>
<div class="a" style="left:43.5px;top:807.5px;width:6.5px;height:0.6px;background:#e2e2e2"></div>
<div class="a" style="left:43.5px;top:817.3px;width:6.5px;height:0.6px;background:#e2e2e2"></div>
<div class="a" style="left:43.5px;top:827.0px;width:6.5px;height:0.6px;background:#e2e2e2"></div>
<div class="a" style="left:33.75px;top:836.8px;width:6.5px;height:0.6px;background:#e2e2e2"></div>
<div class="a" style="left:24.0px;top:846.5px;width:6.5px;height:0.6px;background:#e2e2e2"></div>
<div class="a" style="left:33.75px;top:856.3px;width:6.5px;height:0.6px;background:#e2e2e2"></div>
<div class="a" style="left:33.75px;top:866.0px;width:6.5px;height:0.6px;background:#e2e2e2"></div>
<div class="a" style="left:33.75px;top:875.8px;width:6.5px;height:0.6px;background:#e2e2e2"></div>
<div class="a" style="left:33.75px;top:885.5px;width:6.5px;height:0.6px;background:#e2e2e2"></div>
<div class="a" style="left:33.75px;top:895.3px;width:6.5px;height:0.6px;background:#e2e2e2"></div>
<div class="a" style="left:33.75px;top:905.0px;width:6.5px;height:0.6px;background:#e2e2e2"></div>
<div class="a" style="left:33.75px;top:914.8px;width:6.5px;height:0.6px;background:#e2e2e2"></div>
<div class="a" style="left:24.0px;top:924.5px;width:6.5px;height:0.6px;background:#e2e2e2"></div>
<div class="a" style="left:33.75px;top:934.3px;width:6.5px;height:0.6px;background:#e2e2e2"></div>
<div class="a" style="left:33.75px;top:944.0px;width:6.5px;height:0.6px;background:#e2e2e2"></div>
<div class="a" style="left:33.75px;top:953.8px;width:6.5px;height:0.6px;background:#e2e2e2"></div>
<div class="a" style="left:33.75px;top:963.5px;width:6.5px;height:0.6px;background:#e2e2e2"></div>
<div class="a" style="left:33.75px;top:973.3px;width:6.5px;height:0.6px;background:#e2e2e2"></div>
<div class="a" style="left:33.75px;top:983.0px;width:6.5px;height:0.6px;background:#e2e2e2"></div>
<div class="a t" style="left:20.5px;top:599.30px;overflow:hidden;width:79.0px;font-family:'Liberation Sans',sans-serif;font-size:5.6px;line-height:7.2px;color:#1a1a1a">Project: PN088_Quirinus_Firmw</div>
<svg class="a" style="left:2.0px;top:600.30px" width="5" height="5"><rect x="0.3" y="0.3" width="4.4" height="4.4" fill="#f0f0f0" stroke="#d0d0d0" stroke-width="0.5"/><path d="M1.2 2.5 H3.8" stroke="#8a8a8a" stroke-width="0.6"/></svg>
<svg class="a" style="left:11.0px;top:598.8px" width="8" height="8"><circle cx="2.5" cy="2" r="1.8" fill="#f0c030"/><circle cx="6" cy="4" r="1.5" fill="#d050d0"/><circle cx="4.5" cy="6.5" r="1.5" fill="#3a90e0"/></svg>
<div class="a t" style="left:30.25px;top:609.05px;overflow:hidden;width:69.2px;font-family:'Liberation Sans',sans-serif;font-size:5.6px;line-height:7.2px;color:#1a1a1a">TM4C129x</div>
<svg class="a" style="left:11.75px;top:610.05px" width="5" height="5"><rect x="0.3" y="0.3" width="4.4" height="4.4" fill="#f0f0f0" stroke="#d0d0d0" stroke-width="0.5"/><path d="M1.2 2.5 H3.8" stroke="#8a8a8a" stroke-width="0.6"/></svg>
<svg class="a" style="left:20.75px;top:609.5px" width="8" height="6"><path d="M0.3 0.6 H3 L3.7 1.4 H7.5 V5.6 H0.3 Z" fill="#e8b440" stroke="#b08020" stroke-width="0.4"/><rect x="0.5" y="3" width="2.5" height="2.5" fill="#404040"/></svg>
<div class="a t" style="left:40.0px;top:618.80px;overflow:hidden;width:59.5px;font-family:'Liberation Sans',sans-serif;font-size:5.6px;line-height:7.2px;color:#1a1a1a">Application Notes</div>
<svg class="a" style="left:21.5px;top:619.80px" width="5" height="5"><rect x="0.3" y="0.3" width="4.4" height="4.4" fill="#f0f0f0" stroke="#d0d0d0" stroke-width="0.5"/><path d="M1.2 2.5 H3.8" stroke="#8a8a8a" stroke-width="0.6"/></svg>
<svg class="a" style="left:30.5px;top:619.3px" width="8" height="6"><path d="M0.3 0.6 H3 L3.7 1.4 H7 V5.6 H0.3 Z" fill="#f0c050" stroke="#c89a30" stroke-width="0.4"/></svg>
<div class="a t" style="left:49.75px;top:628.55px;overflow:hidden;width:49.8px;font-family:'Liberation Sans',sans-serif;font-size:5.6px;line-height:7.2px;color:#1a1a1a">PN088_Readme.mc</div>
<svg class="a" style="left:39.2px;top:628.4px" width="6.5" height="7.5"><path d="M0.5 0.4 H4 L6 2.4 V7 H0.5 Z" fill="#eef1f6" stroke="#9ab0cc" stroke-width="0.55"/><path d="M0.7 0.6 V6.8 H5.8" fill="none" stroke="#6a90c0" stroke-width="0.8"/></svg>
<div class="a t" style="left:40.0px;top:638.30px;overflow:hidden;width:59.5px;font-family:'Liberation Sans',sans-serif;font-size:5.6px;line-height:7.2px;color:#1a1a1a">SRC</div>
<svg class="a" style="left:21.5px;top:639.30px" width="5" height="5"><rect x="0.3" y="0.3" width="4.4" height="4.4" fill="#f0f0f0" stroke="#d0d0d0" stroke-width="0.5"/><path d="M1.2 2.5 H3.8" stroke="#8a8a8a" stroke-width="0.6"/></svg>
<svg class="a" style="left:30.5px;top:638.8px" width="8" height="6"><path d="M0.3 0.6 H3 L3.7 1.4 H7 V5.6 H0.3 Z" fill="#f0c050" stroke="#c89a30" stroke-width="0.4"/></svg>
<div class="a t" style="left:49.75px;top:648.05px;overflow:hidden;width:49.8px;font-family:'Liberation Sans',sans-serif;font-size:5.6px;line-height:7.2px;color:#1a1a1a">main.c</div>
<svg class="a" style="left:31.25px;top:649.05px" width="5" height="5"><rect x="0.3" y="0.3" width="4.4" height="4.4" fill="#f0f0f0" stroke="#d0d0d0" stroke-width="0.5"/><path d="M1.2 2.5 H3.8" stroke="#8a8a8a" stroke-width="0.6"/><path d="M2.5 1.2 V3.8" stroke="#8a8a8a" stroke-width="0.6"/></svg>
<svg class="a" style="left:39.2px;top:647.9px" width="6.5" height="7.5"><path d="M0.5 0.4 H4 L6 2.4 V7 H0.5 Z" fill="#eef1f6" stroke="#9ab0cc" stroke-width="0.55"/><path d="M0.7 0.6 V6.8 H5.8" fill="none" stroke="#6a90c0" stroke-width="0.8"/></svg>
<div class="a t" style="left:49.75px;top:657.80px;overflow:hidden;width:49.8px;font-family:'Liberation Sans',sans-serif;font-size:5.6px;line-height:7.2px;color:#1a1a1a">App_config.c</div>
<svg class="a" style="left:31.25px;top:658.80px" width="5" height="5"><rect x="0.3" y="0.3" width="4.4" height="4.4" fill="#f0f0f0" stroke="#d0d0d0" stroke-width="0.5"/><path d="M1.2 2.5 H3.8" stroke="#8a8a8a" stroke-width="0.6"/><path d="M2.5 1.2 V3.8" stroke="#8a8a8a" stroke-width="0.6"/></svg>
<svg class="a" style="left:39.2px;top:657.7px" width="6.5" height="7.5"><path d="M0.5 0.4 H4 L6 2.4 V7 H0.5 Z" fill="#eef1f6" stroke="#9ab0cc" stroke-width="0.55"/><path d="M0.7 0.6 V6.8 H5.8" fill="none" stroke="#6a90c0" stroke-width="0.8"/></svg>
<div class="a t" style="left:49.75px;top:667.55px;overflow:hidden;width:49.8px;font-family:'Liberation Sans',sans-serif;font-size:5.6px;line-height:7.2px;color:#1a1a1a">SPI_Comms.c</div>
<svg class="a" style="left:31.25px;top:668.55px" width="5" height="5"><rect x="0.3" y="0.3" width="4.4" height="4.4" fill="#f0f0f0" stroke="#d0d0d0" stroke-width="0.5"/><path d="M1.2 2.5 H3.8" stroke="#8a8a8a" stroke-width="0.6"/><path d="M2.5 1.2 V3.8" stroke="#8a8a8a" stroke-width="0.6"/></svg>
<svg class="a" style="left:39.2px;top:667.4px" width="6.5" height="7.5"><path d="M0.5 0.4 H4 L6 2.4 V7 H0.5 Z" fill="#eef1f6" stroke="#9ab0cc" stroke-width="0.55"/><path d="M0.7 0.6 V6.8 H5.8" fill="none" stroke="#6a90c0" stroke-width="0.8"/></svg>
<div class="a t" style="left:49.75px;top:677.30px;overflow:hidden;width:49.8px;font-family:'Liberation Sans',sans-serif;font-size:5.6px;line-height:7.2px;color:#1a1a1a">Timers.c</div>
<svg class="a" style="left:31.25px;top:678.30px" width="5" height="5"><rect x="0.3" y="0.3" width="4.4" height="4.4" fill="#f0f0f0" stroke="#d0d0d0" stroke-width="0.5"/><path d="M1.2 2.5 H3.8" stroke="#8a8a8a" stroke-width="0.6"/><path d="M2.5 1.2 V3.8" stroke="#8a8a8a" stroke-width="0.6"/></svg>
<svg class="a" style="left:39.2px;top:677.2px" width="6.5" height="7.5"><path d="M0.5 0.4 H4 L6 2.4 V7 H0.5 Z" fill="#eef1f6" stroke="#9ab0cc" stroke-width="0.55"/><path d="M0.7 0.6 V6.8 H5.8" fill="none" stroke="#6a90c0" stroke-width="0.8"/></svg>
<div class="a t" style="left:49.75px;top:687.05px;overflow:hidden;width:49.8px;font-family:'Liberation Sans',sans-serif;font-size:5.6px;line-height:7.2px;color:#1a1a1a">PWR.c</div>
<svg class="a" style="left:31.25px;top:688.05px" width="5" height="5"><rect x="0.3" y="0.3" width="4.4" height="4.4" fill="#f0f0f0" stroke="#d0d0d0" stroke-width="0.5"/><path d="M1.2 2.5 H3.8" stroke="#8a8a8a" stroke-width="0.6"/><path d="M2.5 1.2 V3.8" stroke="#8a8a8a" stroke-width="0.6"/></svg>
<svg class="a" style="left:39.2px;top:686.9px" width="6.5" height="7.5"><path d="M0.5 0.4 H4 L6 2.4 V7 H0.5 Z" fill="#eef1f6" stroke="#9ab0cc" stroke-width="0.55"/><path d="M0.7 0.6 V6.8 H5.8" fill="none" stroke="#6a90c0" stroke-width="0.8"/></svg>
<div class="a t" style="left:49.75px;top:696.80px;overflow:hidden;width:49.8px;font-family:'Liberation Sans',sans-serif;font-size:5.6px;line-height:7.2px;color:#1a1a1a">EddyCurrentContro</div>
<svg class="a" style="left:31.25px;top:697.80px" width="5" height="5"><rect x="0.3" y="0.3" width="4.4" height="4.4" fill="#f0f0f0" stroke="#d0d0d0" stroke-width="0.5"/><path d="M1.2 2.5 H3.8" stroke="#8a8a8a" stroke-width="0.6"/></svg>
<svg class="a" style="left:39.2px;top:696.7px" width="6.5" height="7.5"><path d="M0.5 0.4 H4 L6 2.4 V7 H0.5 Z" fill="#eef1f6" stroke="#9ab0cc" stroke-width="0.55"/><path d="M0.7 0.6 V6.8 H5.8" fill="none" stroke="#6a90c0" stroke-width="0.8"/></svg>
<div class="a t" style="left:59.5px;top:706.55px;overflow:hidden;width:40.0px;font-family:'Liberation Sans',sans-serif;font-size:5.6px;line-height:7.2px;color:#1a1a1a">can.h</div>
<svg class="a" style="left:49.0px;top:706.4px" width="6.5" height="7.5"><path d="M0.5 0.4 H4 L6 2.4 V7 H0.5 Z" fill="#eef1f6" stroke="#9ab0cc" stroke-width="0.55"/><path d="M0.7 0.6 V6.8 H5.8" fill="none" stroke="#6a90c0" stroke-width="0.8"/></svg>
<div class="a t" style="left:59.5px;top:716.30px;overflow:hidden;width:40.0px;font-family:'Liberation Sans',sans-serif;font-size:5.6px;line-height:7.2px;color:#1a1a1a">CANOpen.h</div>
<svg class="a" style="left:49.0px;top:716.2px" width="6.5" height="7.5"><path d="M0.5 0.4 H4 L6 2.4 V7 H0.5 Z" fill="#eef1f6" stroke="#9ab0cc" stroke-width="0.55"/><path d="M0.7 0.6 V6.8 H5.8" fill="none" stroke="#6a90c0" stroke-width="0.8"/></svg>
<div class="a t" style="left:59.5px;top:726.05px;overflow:hidden;width:40.0px;font-family:'Liberation Sans',sans-serif;font-size:5.6px;line-height:7.2px;color:#1a1a1a">CANOpen_Dire</div>
<svg class="a" style="left:49.0px;top:725.9px" width="6.5" height="7.5"><path d="M0.5 0.4 H4 L6 2.4 V7 H0.5 Z" fill="#eef1f6" stroke="#9ab0cc" stroke-width="0.55"/><path d="M0.7 0.6 V6.8 H5.8" fill="none" stroke="#6a90c0" stroke-width="0.8"/></svg>
<div class="a t" style="left:59.5px;top:735.80px;overflow:hidden;width:40.0px;font-family:'Liberation Sans',sans-serif;font-size:5.6px;line-height:7.2px;color:#1a1a1a">EddyCurrentCo</div>
<svg class="a" style="left:49.0px;top:735.7px" width="6.5" height="7.5"><path d="M0.5 0.4 H4 L6 2.4 V7 H0.5 Z" fill="#eef1f6" stroke="#9ab0cc" stroke-width="0.55"/><path d="M0.7 0.6 V6.8 H5.8" fill="none" stroke="#6a90c0" stroke-width="0.8"/></svg>
<div class="a t" style="left:59.5px;top:745.55px;overflow:hidden;width:40.0px;font-family:'Liberation Sans',sans-serif;font-size:5.6px;line-height:7.2px;color:#1a1a1a">FPGA_Interface</div>
<svg class="a" style="left:49.0px;top:745.4px" width="6.5" height="7.5"><path d="M0.5 0.4 H4 L6 2.4 V7 H0.5 Z" fill="#eef1f6" stroke="#9ab0cc" stroke-width="0.55"/><path d="M0.7 0.6 V6.8 H5.8" fill="none" stroke="#6a90c0" stroke-width="0.8"/></svg>
<div class="a t" style="left:59.5px;top:755.30px;overflow:hidden;width:40.0px;font-family:'Liberation Sans',sans-serif;font-size:5.6px;line-height:7.2px;color:#1a1a1a">math.h</div>
<svg class="a" style="left:49.0px;top:755.2px" width="6.5" height="7.5"><path d="M0.5 0.4 H4 L6 2.4 V7 H0.5 Z" fill="#eef1f6" stroke="#9ab0cc" stroke-width="0.55"/><path d="M0.7 0.6 V6.8 H5.8" fill="none" stroke="#6a90c0" stroke-width="0.8"/></svg>
<div class="a t" style="left:59.5px;top:765.05px;overflow:hidden;width:40.0px;font-family:'Liberation Sans',sans-serif;font-size:5.6px;line-height:7.2px;color:#1a1a1a">stdbool.h</div>
<svg class="a" style="left:49.0px;top:764.9px" width="6.5" height="7.5"><path d="M0.5 0.4 H4 L6 2.4 V7 H0.5 Z" fill="#eef1f6" stroke="#9ab0cc" stroke-width="0.55"/><path d="M0.7 0.6 V6.8 H5.8" fill="none" stroke="#6a90c0" stroke-width="0.8"/></svg>
<div class="a t" style="left:59.5px;top:774.80px;overflow:hidden;width:40.0px;font-family:'Liberation Sans',sans-serif;font-size:5.6px;line-height:7.2px;color:#1a1a1a">stdint.h</div>
<svg class="a" style="left:49.0px;top:774.7px" width="6.5" height="7.5"><path d="M0.5 0.4 H4 L6 2.4 V7 H0.5 Z" fill="#eef1f6" stroke="#9ab0cc" stroke-width="0.55"/><path d="M0.7 0.6 V6.8 H5.8" fill="none" stroke="#6a90c0" stroke-width="0.8"/></svg>
<div class="a t" style="left:59.5px;top:784.55px;overflow:hidden;width:40.0px;font-family:'Liberation Sans',sans-serif;font-size:5.6px;line-height:7.2px;color:#1a1a1a">stdio.h</div>
<svg class="a" style="left:49.0px;top:784.4px" width="6.5" height="7.5"><path d="M0.5 0.4 H4 L6 2.4 V7 H0.5 Z" fill="#eef1f6" stroke="#9ab0cc" stroke-width="0.55"/><path d="M0.7 0.6 V6.8 H5.8" fill="none" stroke="#6a90c0" stroke-width="0.8"/></svg>
<div class="a t" style="left:59.5px;top:794.30px;overflow:hidden;width:40.0px;font-family:'Liberation Sans',sans-serif;font-size:5.6px;line-height:7.2px;color:#1a1a1a">stdlib.h</div>
<svg class="a" style="left:49.0px;top:794.2px" width="6.5" height="7.5"><path d="M0.5 0.4 H4 L6 2.4 V7 H0.5 Z" fill="#eef1f6" stroke="#9ab0cc" stroke-width="0.55"/><path d="M0.7 0.6 V6.8 H5.8" fill="none" stroke="#6a90c0" stroke-width="0.8"/></svg>
<div class="a t" style="left:59.5px;top:804.05px;overflow:hidden;width:40.0px;font-family:'Liberation Sans',sans-serif;font-size:5.6px;line-height:7.2px;color:#1a1a1a">string.h</div>
<svg class="a" style="left:49.0px;top:803.9px" width="6.5" height="7.5"><path d="M0.5 0.4 H4 L6 2.4 V7 H0.5 Z" fill="#eef1f6" stroke="#9ab0cc" stroke-width="0.55"/><path d="M0.7 0.6 V6.8 H5.8" fill="none" stroke="#6a90c0" stroke-width="0.8"/></svg>
<div class="a t" style="left:59.5px;top:813.80px;overflow:hidden;width:40.0px;font-family:'Liberation Sans',sans-serif;font-size:5.6px;line-height:7.2px;color:#1a1a1a">sysctl.h</div>
<svg class="a" style="left:49.0px;top:813.7px" width="6.5" height="7.5"><path d="M0.5 0.4 H4 L6 2.4 V7 H0.5 Z" fill="#eef1f6" stroke="#9ab0cc" stroke-width="0.55"/><path d="M0.7 0.6 V6.8 H5.8" fill="none" stroke="#6a90c0" stroke-width="0.8"/></svg>
<div class="a t" style="left:59.5px;top:823.55px;overflow:hidden;width:40.0px;font-family:'Liberation Sans',sans-serif;font-size:5.6px;line-height:7.2px;color:#1a1a1a">wave_generato</div>
<svg class="a" style="left:49.0px;top:823.4px" width="6.5" height="7.5"><path d="M0.5 0.4 H4 L6 2.4 V7 H0.5 Z" fill="#eef1f6" stroke="#9ab0cc" stroke-width="0.55"/><path d="M0.7 0.6 V6.8 H5.8" fill="none" stroke="#6a90c0" stroke-width="0.8"/></svg>
<div class="a t" style="left:49.75px;top:833.30px;overflow:hidden;width:49.8px;font-family:'Liberation Sans',sans-serif;font-size:5.6px;line-height:7.2px;color:#1a1a1a">wave_generator.c</div>
<svg class="a" style="left:31.25px;top:834.30px" width="5" height="5"><rect x="0.3" y="0.3" width="4.4" height="4.4" fill="#f0f0f0" stroke="#d0d0d0" stroke-width="0.5"/><path d="M1.2 2.5 H3.8" stroke="#8a8a8a" stroke-width="0.6"/><path d="M2.5 1.2 V3.8" stroke="#8a8a8a" stroke-width="0.6"/></svg>
<svg class="a" style="left:39.2px;top:833.2px" width="6.5" height="7.5"><path d="M0.5 0.4 H4 L6 2.4 V7 H0.5 Z" fill="#eef1f6" stroke="#9ab0cc" stroke-width="0.55"/><path d="M0.7 0.6 V6.8 H5.8" fill="none" stroke="#6a90c0" stroke-width="0.8"/></svg>
<div class="a t" style="left:40.0px;top:843.05px;overflow:hidden;width:59.5px;font-family:'Liberation Sans',sans-serif;font-size:5.6px;line-height:7.2px;color:#1a1a1a">INC</div>
<svg class="a" style="left:21.5px;top:844.05px" width="5" height="5"><rect x="0.3" y="0.3" width="4.4" height="4.4" fill="#f0f0f0" stroke="#d0d0d0" stroke-width="0.5"/><path d="M1.2 2.5 H3.8" stroke="#8a8a8a" stroke-width="0.6"/></svg>
<svg class="a" style="left:30.5px;top:843.5px" width="8" height="6"><path d="M0.3 0.6 H3 L3.7 1.4 H7 V5.6 H0.3 Z" fill="#f0c050" stroke="#c89a30" stroke-width="0.4"/></svg>
<div class="a t" style="left:49.75px;top:852.80px;overflow:hidden;width:49.8px;font-family:'Liberation Sans',sans-serif;font-size:5.6px;line-height:7.2px;color:#1a1a1a">Pinout.h</div>
<svg class="a" style="left:39.2px;top:852.7px" width="6.5" height="7.5"><path d="M0.5 0.4 H4 L6 2.4 V7 H0.5 Z" fill="#eef1f6" stroke="#9ab0cc" stroke-width="0.55"/><path d="M0.7 0.6 V6.8 H5.8" fill="none" stroke="#6a90c0" stroke-width="0.8"/></svg>
<div class="a t" style="left:49.75px;top:862.55px;overflow:hidden;width:49.8px;font-family:'Liberation Sans',sans-serif;font-size:5.6px;line-height:7.2px;color:#1a1a1a">App_config.h</div>
<svg class="a" style="left:39.2px;top:862.4px" width="6.5" height="7.5"><path d="M0.5 0.4 H4 L6 2.4 V7 H0.5 Z" fill="#eef1f6" stroke="#9ab0cc" stroke-width="0.55"/><path d="M0.7 0.6 V6.8 H5.8" fill="none" stroke="#6a90c0" stroke-width="0.8"/></svg>
<div class="a t" style="left:49.75px;top:872.30px;overflow:hidden;width:49.8px;font-family:'Liberation Sans',sans-serif;font-size:5.6px;line-height:7.2px;color:#1a1a1a">SPI_Comms.h</div>
<svg class="a" style="left:39.2px;top:872.2px" width="6.5" height="7.5"><path d="M0.5 0.4 H4 L6 2.4 V7 H0.5 Z" fill="#eef1f6" stroke="#9ab0cc" stroke-width="0.55"/><path d="M0.7 0.6 V6.8 H5.8" fill="none" stroke="#6a90c0" stroke-width="0.8"/></svg>
<div class="a t" style="left:49.75px;top:882.05px;overflow:hidden;width:49.8px;font-family:'Liberation Sans',sans-serif;font-size:5.6px;line-height:7.2px;color:#1a1a1a">Timers.h</div>
<svg class="a" style="left:39.2px;top:881.9px" width="6.5" height="7.5"><path d="M0.5 0.4 H4 L6 2.4 V7 H0.5 Z" fill="#eef1f6" stroke="#9ab0cc" stroke-width="0.55"/><path d="M0.7 0.6 V6.8 H5.8" fill="none" stroke="#6a90c0" stroke-width="0.8"/></svg>
<div class="a t" style="left:49.75px;top:891.80px;overflow:hidden;width:49.8px;font-family:'Liberation Sans',sans-serif;font-size:5.6px;line-height:7.2px;color:#1a1a1a">PWR.h</div>
<svg class="a" style="left:39.2px;top:891.7px" width="6.5" height="7.5"><path d="M0.5 0.4 H4 L6 2.4 V7 H0.5 Z" fill="#eef1f6" stroke="#9ab0cc" stroke-width="0.55"/><path d="M0.7 0.6 V6.8 H5.8" fill="none" stroke="#6a90c0" stroke-width="0.8"/></svg>
<div class="a t" style="left:49.75px;top:901.55px;overflow:hidden;width:49.8px;font-family:'Liberation Sans',sans-serif;font-size:5.6px;line-height:7.2px;color:#1a1a1a">EddyCurrentContro</div>
<svg class="a" style="left:39.2px;top:901.4px" width="6.5" height="7.5"><path d="M0.5 0.4 H4 L6 2.4 V7 H0.5 Z" fill="#eef1f6" stroke="#9ab0cc" stroke-width="0.55"/><path d="M0.7 0.6 V6.8 H5.8" fill="none" stroke="#6a90c0" stroke-width="0.8"/></svg>
<div class="a t" style="left:49.75px;top:911.30px;overflow:hidden;width:49.8px;font-family:'Liberation Sans',sans-serif;font-size:5.6px;line-height:7.2px;color:#1a1a1a">wave_generator.h</div>
<svg class="a" style="left:39.2px;top:911.2px" width="6.5" height="7.5"><path d="M0.5 0.4 H4 L6 2.4 V7 H0.5 Z" fill="#eef1f6" stroke="#9ab0cc" stroke-width="0.55"/><path d="M0.7 0.6 V6.8 H5.8" fill="none" stroke="#6a90c0" stroke-width="0.8"/></svg>
<div class="a t" style="left:40.0px;top:921.05px;overflow:hidden;width:59.5px;font-family:'Liberation Sans',sans-serif;font-size:5.6px;line-height:7.2px;color:#1a1a1a">ICE CAN</div>
<svg class="a" style="left:21.5px;top:922.05px" width="5" height="5"><rect x="0.3" y="0.3" width="4.4" height="4.4" fill="#f0f0f0" stroke="#d0d0d0" stroke-width="0.5"/><path d="M1.2 2.5 H3.8" stroke="#8a8a8a" stroke-width="0.6"/></svg>
<svg class="a" style="left:30.5px;top:921.5px" width="8" height="6"><path d="M0.3 0.6 H3 L3.7 1.4 H7 V5.6 H0.3 Z" fill="#f0c050" stroke="#c89a30" stroke-width="0.4"/></svg>
<div class="a t" style="left:49.75px;top:930.80px;overflow:hidden;width:49.8px;font-family:'Liberation Sans',sans-serif;font-size:5.6px;line-height:7.2px;color:#1a1a1a">CANOpen.c</div>
<svg class="a" style="left:31.25px;top:931.80px" width="5" height="5"><rect x="0.3" y="0.3" width="4.4" height="4.4" fill="#f0f0f0" stroke="#d0d0d0" stroke-width="0.5"/><path d="M1.2 2.5 H3.8" stroke="#8a8a8a" stroke-width="0.6"/><path d="M2.5 1.2 V3.8" stroke="#8a8a8a" stroke-width="0.6"/></svg>
<svg class="a" style="left:39.2px;top:930.7px" width="6.5" height="7.5"><path d="M0.5 0.4 H4 L6 2.4 V7 H0.5 Z" fill="#eef1f6" stroke="#9ab0cc" stroke-width="0.55"/><path d="M0.7 0.6 V6.8 H5.8" fill="none" stroke="#6a90c0" stroke-width="0.8"/></svg>
<div class="a t" style="left:49.75px;top:940.55px;overflow:hidden;width:49.8px;font-family:'Liberation Sans',sans-serif;font-size:5.6px;line-height:7.2px;color:#1a1a1a">CANOpen.h</div>
<svg class="a" style="left:39.2px;top:940.4px" width="6.5" height="7.5"><path d="M0.5 0.4 H4 L6 2.4 V7 H0.5 Z" fill="#eef1f6" stroke="#9ab0cc" stroke-width="0.55"/><path d="M0.7 0.6 V6.8 H5.8" fill="none" stroke="#6a90c0" stroke-width="0.8"/></svg>
<div class="a t" style="left:49.75px;top:950.30px;overflow:hidden;width:49.8px;font-family:'Liberation Sans',sans-serif;font-size:5.6px;line-height:7.2px;color:#1a1a1a">CANOpen_Director</div>
<svg class="a" style="left:31.25px;top:951.30px" width="5" height="5"><rect x="0.3" y="0.3" width="4.4" height="4.4" fill="#f0f0f0" stroke="#d0d0d0" stroke-width="0.5"/><path d="M1.2 2.5 H3.8" stroke="#8a8a8a" stroke-width="0.6"/><path d="M2.5 1.2 V3.8" stroke="#8a8a8a" stroke-width="0.6"/></svg>
<svg class="a" style="left:39.2px;top:950.2px" width="6.5" height="7.5"><path d="M0.5 0.4 H4 L6 2.4 V7 H0.5 Z" fill="#eef1f6" stroke="#9ab0cc" stroke-width="0.55"/><path d="M0.7 0.6 V6.8 H5.8" fill="none" stroke="#6a90c0" stroke-width="0.8"/></svg>
<div class="a t" style="left:49.75px;top:960.05px;overflow:hidden;width:49.8px;font-family:'Liberation Sans',sans-serif;font-size:5.6px;line-height:7.2px;color:#1a1a1a">CANOpen_Director</div>
<svg class="a" style="left:39.2px;top:959.9px" width="6.5" height="7.5"><path d="M0.5 0.4 H4 L6 2.4 V7 H0.5 Z" fill="#eef1f6" stroke="#9ab0cc" stroke-width="0.55"/><path d="M0.7 0.6 V6.8 H5.8" fill="none" stroke="#6a90c0" stroke-width="0.8"/></svg>
<div class="a t" style="left:49.75px;top:969.80px;overflow:hidden;width:49.8px;font-family:'Liberation Sans',sans-serif;font-size:5.6px;line-height:7.2px;color:#1a1a1a">ICE_CAN.c</div>
<svg class="a" style="left:31.25px;top:970.80px" width="5" height="5"><rect x="0.3" y="0.3" width="4.4" height="4.4" fill="#f0f0f0" stroke="#d0d0d0" stroke-width="0.5"/><path d="M1.2 2.5 H3.8" stroke="#8a8a8a" stroke-width="0.6"/><path d="M2.5 1.2 V3.8" stroke="#8a8a8a" stroke-width="0.6"/></svg>
<svg class="a" style="left:39.2px;top:969.7px" width="6.5" height="7.5"><path d="M0.5 0.4 H4 L6 2.4 V7 H0.5 Z" fill="#eef1f6" stroke="#9ab0cc" stroke-width="0.55"/><path d="M0.7 0.6 V6.8 H5.8" fill="none" stroke="#6a90c0" stroke-width="0.8"/></svg>
<div class="a t" style="left:49.75px;top:979.55px;overflow:hidden;width:49.8px;font-family:'Liberation Sans',sans-serif;font-size:5.6px;line-height:7.2px;color:#1a1a1a">ICE_CAN.h</div>
<svg class="a" style="left:39.2px;top:979.4px" width="6.5" height="7.5"><path d="M0.5 0.4 H4 L6 2.4 V7 H0.5 Z" fill="#eef1f6" stroke="#9ab0cc" stroke-width="0.55"/><path d="M0.7 0.6 V6.8 H5.8" fill="none" stroke="#6a90c0" stroke-width="0.8"/></svg>
<svg class="a" style="left:112px;top:587.5px" width="86" height="12"><path d="M0 11.5 L9 0.5 H84 V11.5 Z" fill="#cfe0f3" stroke="#a8c4e4" stroke-width="0.6"/></svg>
<svg class="a" style="left:124.5px;top:589.5px" width="7" height="8"><path d="M0.5 0.5 H4.5 L6.5 2.5 V7.5 H0.5 Z" fill="#fafafa" stroke="#8aa0c0" stroke-width="0.6"/></svg>
<div class="a t" style="left:135.5px;top:590.05px;font-size:5.75px;line-height:6.8999999999999995px;color:#111111;font-family:'Liberation Sans',sans-serif;">EddyCurrentControl.c</div>
<svg class="a" style="left:962.00px;top:590.75px" width="4.50" height="4.50"><path d="M0.45 1.57 L4.05 1.57 L2.25 3.38 Z" fill="#222" stroke="none" stroke-width="0.60"/></svg>
<svg class="a" style="left:972px;top:591px" width="4" height="4"><path d="M0.3 0.3 L3.7 3.7 M3.7 0.3 L0.3 3.7" stroke="#222" stroke-width="0.8"/></svg>
<div class="a" style="left:112px;top:600px;width:868px;height:380px;background:#ffffff;"></div>
<div class="a" style="left:112px;top:598.8px;width:868px;height:1.4px;background:#9eacbc;"></div>
<div class="a" style="left:112px;top:600px;width:1px;height:380px;background:#a8b8c8;"></div>
<div class="a" style="left:113px;top:600.5px;width:30px;height:380px;background:#f0f0f0;"></div>
<div class="a" style="left:969px;top:600px;width:11px;height:380px;background:#f0f0f0;"></div>
<div class="a" style="left:972.5px;top:608.5px;width:0.8px;height:38px;background:#7a7a7a;"></div>
<div class="a" style="left:979px;top:600px;width:1px;height:380px;background:#a8c8f0;"></div>
<div class="a" style="left:145px;top:663.0px;width:824px;height:7.8px;background:#d5fadf;"></div>
<div class="a" style="left:171.5px;top:655.2px;width:5.5px;height:7.8px;background:#99ccf3;"></div>
<div class="a" style="left:150.5px;top:663.0px;width:76px;height:7.8px;background:#99ccf3;"></div>
<div class="a t u" style="left:124px;top:601.50px;width:17.3px;text-align:right;color:#303030;font-size:5.9px">1</div>
<div class="a t u" style="left:150.7px;top:601.50px"><span style="color:#8a8a10">#include</span><span style="color:#333333"> </span><span style="color:#a020a0">&quot;stdbool.h&quot;</span></div>
<div class="a t u" style="left:124px;top:609.30px;width:17.3px;text-align:right;color:#303030;font-size:5.9px">2</div>
<div class="a t u" style="left:150.7px;top:609.30px"><span style="color:#8a8a10">#include</span><span style="color:#333333"> </span><span style="color:#a020a0">&quot;stdlib.h&quot;</span></div>
<div class="a t u" style="left:124px;top:617.10px;width:17.3px;text-align:right;color:#303030;font-size:5.9px">3</div>
<div class="a t u" style="left:150.7px;top:617.10px"><span style="color:#8a8a10">#include</span><span style="color:#333333"> </span><span style="color:#a020a0">&quot;stdio.h&quot;</span></div>
<div class="a t u" style="left:124px;top:624.90px;width:17.3px;text-align:right;color:#303030;font-size:5.9px">4</div>
<div class="a t u" style="left:150.7px;top:624.90px"><span style="color:#8a8a10">#include</span><span style="color:#333333"> </span><span style="color:#a020a0">&quot;string.h&quot;</span></div>
<div class="a t u" style="left:124px;top:632.70px;width:17.3px;text-align:right;color:#303030;font-size:5.9px">5</div>
<div class="a t u" style="left:150.7px;top:632.70px"><span style="color:#8a8a10">#include</span><span style="color:#333333"> </span><span style="color:#a020a0">&quot;math.h&quot;</span></div>
<div class="a t u" style="left:124px;top:640.50px;width:17.3px;text-align:right;color:#303030;font-size:5.9px">6</div>
<div class="a t u" style="left:150.7px;top:640.50px"><span style="color:#8a8a10">#include</span><span style="color:#333333"> </span><span style="color:#a020a0">&quot;stdint.h&quot;</span></div>
<div class="a t u" style="left:124px;top:648.30px;width:17.3px;text-align:right;color:#303030;font-size:5.9px">7</div>
<div class="a t u" style="left:124px;top:656.10px;width:17.3px;text-align:right;color:#303030;font-size:5.9px">8</div>
<div class="a t u" style="left:150.7px;top:656.10px"><span style="color:#20952a">//tiva</span></div>
<div class="a t u" style="left:124px;top:663.90px;width:17.3px;text-align:right;color:#303030;font-size:5.9px">9</div>
<div class="a t u" style="left:150.7px;top:663.90px"><span style="color:#8a8a10">#include</span><span style="color:#333333"> </span><span style="color:#a020a0">&quot;sysctl.h&quot;</span></div>
<div class="a t u" style="left:124px;top:671.70px;width:17.3px;text-align:right;color:#303030;font-size:5.9px">10</div>
<div class="a t u" style="left:150.7px;top:671.70px"><span style="color:#20952a">///#include &quot;systick.h&quot;</span></div>
<div class="a t u" style="left:124px;top:679.50px;width:17.3px;text-align:right;color:#303030;font-size:5.9px">11</div>
<div class="a t u" style="left:124px;top:687.30px;width:17.3px;text-align:right;color:#303030;font-size:5.9px">12</div>
<div class="a t u" style="left:150.7px;top:687.30px"><span style="color:#8a8a10">#include</span><span style="color:#333333"> </span><span style="color:#a020a0">&quot;CANOpen.h&quot;</span></div>
<div class="a t u" style="left:124px;top:695.10px;width:17.3px;text-align:right;color:#303030;font-size:5.9px">13</div>
<div class="a t u" style="left:150.7px;top:695.10px"><span style="color:#8a8a10">#include</span><span style="color:#333333"> </span><span style="color:#a020a0">&quot;CANOpen_Directory.h&quot;</span></div>
<div class="a t u" style="left:124px;top:702.90px;width:17.3px;text-align:right;color:#303030;font-size:5.9px">14</div>
<div class="a t u" style="left:150.7px;top:702.90px"><span style="color:#8a8a10">#include</span><span style="color:#333333"> </span><span style="color:#a020a0">&quot;EddyCurrentControl.h&quot;</span></div>
<div class="a t u" style="left:124px;top:710.70px;width:17.3px;text-align:right;color:#303030;font-size:5.9px">15</div>
<div class="a t u" style="left:150.7px;top:710.70px"><span style="color:#8a8a10">#include</span><span style="color:#333333"> </span><span style="color:#a020a0">&quot;FPGA_Interface.h&quot;</span></div>
<div class="a t u" style="left:124px;top:718.50px;width:17.3px;text-align:right;color:#303030;font-size:5.9px">16</div>
<div class="a t u" style="left:150.7px;top:718.50px"><span style="color:#8a8a10">#include</span><span style="color:#333333"> </span><span style="color:#a020a0">&quot;wave_generator.h&quot;</span></div>
<div class="a t u" style="left:124px;top:726.30px;width:17.3px;text-align:right;color:#303030;font-size:5.9px">17</div>
<div class="a t u" style="left:124px;top:734.10px;width:17.3px;text-align:right;color:#303030;font-size:5.9px">18</div>
<div class="a t u" style="left:150.7px;top:734.10px"><span style="color:#2a2af0">union</span><span style="color:#333333"> Type_Union MftSpc_MemMap</span><span style="color:#6a6ad0">[</span><span style="color:#333333">MftSpc_MemMap_Len</span><span style="color:#6a6ad0">];</span></div>
<div class="a t u" style="left:124px;top:741.90px;width:17.3px;text-align:right;color:#303030;font-size:5.9px">19</div>
<div class="a t u" style="left:124px;top:749.70px;width:17.3px;text-align:right;color:#303030;font-size:5.9px">20</div>
<div class="a t u" style="left:150.7px;top:749.70px"><span style="color:#20952a">// CAN Interfacing</span></div>
<div class="a t u" style="left:124px;top:757.50px;width:17.3px;text-align:right;color:#303030;font-size:5.9px">21</div>
<div class="a t u" style="left:150.7px;top:757.50px"><span style="color:#2a2af0">void</span><span style="color:#333333"> Initialise_MemMaps_Defaults</span><span style="color:#6a6ad0">(</span><span style="color:#2a2af0">void</span><span style="color:#6a6ad0">);</span></div>
<div class="a t u" style="left:124px;top:765.30px;width:17.3px;text-align:right;color:#303030;font-size:5.9px">22</div>
<div class="a t u" style="left:150.7px;top:765.30px"><span style="color:#2a2af0">void</span><span style="color:#333333"> CIA402_MapInternaltoExternal</span><span style="color:#6a6ad0">(</span><span style="color:#2a2af0">void</span><span style="color:#6a6ad0">);</span></div>
<div class="a t u" style="left:124px;top:773.10px;width:17.3px;text-align:right;color:#303030;font-size:5.9px">23</div>
<div class="a t u" style="left:150.7px;top:773.10px"><span style="color:#2a2af0">void</span><span style="color:#333333"> CIA402_MapExternalToInternal</span><span style="color:#6a6ad0">(</span><span style="color:#2a2af0">void</span><span style="color:#6a6ad0">);</span></div>
<div class="a t u" style="left:124px;top:780.90px;width:17.3px;text-align:right;color:#303030;font-size:5.9px">24</div>
<div class="a t u" style="left:150.7px;top:780.90px"><span style="color:#2a2af0">void</span><span style="color:#333333"> WriteEddyCurrentValue</span><span style="color:#6a6ad0">(</span><span style="color:#333333">uint32_t address</span><span style="color:#6a6ad0">,</span><span style="color:#333333"> uint32_t value</span><span style="color:#6a6ad0">);</span></div>
<div class="a t u" style="left:124px;top:788.70px;width:17.3px;text-align:right;color:#303030;font-size:5.9px">25</div>
<div class="a t u" style="left:150.7px;top:788.70px"><span style="color:#333333">uint8_t ReadEddyCurrentValue</span><span style="color:#6a6ad0">(</span><span style="color:#333333">uint32_t address</span><span style="color:#6a6ad0">,</span><span style="color:#333333"> uint32_t </span><span style="color:#6a6ad0">*</span><span style="color:#333333">data</span><span style="color:#6a6ad0">);</span></div>
<div class="a t u" style="left:124px;top:796.50px;width:17.3px;text-align:right;color:#303030;font-size:5.9px">26</div>
<div class="a t u" style="left:124px;top:804.30px;width:17.3px;text-align:right;color:#303030;font-size:5.9px">27</div>
<div class="a t u" style="left:150.7px;top:804.30px"><span style="color:#20952a">// Eddy Current Functions</span></div>
<div class="a t u" style="left:124px;top:812.10px;width:17.3px;text-align:right;color:#303030;font-size:5.9px">28</div>
<div class="a t u" style="left:150.7px;top:812.10px"><span style="color:#2a2af0">void</span><span style="color:#333333"> EddyCurrent_Init</span><span style="color:#6a6ad0">(</span><span style="color:#2a2af0">void</span><span style="color:#6a6ad0">);</span></div>
<div class="a t u" style="left:124px;top:819.90px;width:17.3px;text-align:right;color:#303030;font-size:5.9px">29</div>
<div class="a t u" style="left:150.7px;top:819.90px"><span style="color:#2a2af0">void</span><span style="color:#333333"> EddyCurrent_TestFreqSweep</span><span style="color:#6a6ad0">(</span><span style="color:#2a2af0">void</span><span style="color:#6a6ad0">);</span></div>
<div class="a t u" style="left:124px;top:827.70px;width:17.3px;text-align:right;color:#303030;font-size:5.9px">30</div>
<div class="a t u" style="left:150.7px;top:827.70px"><span style="color:#2a2af0">void</span><span style="color:#333333"> EddyCurrent_UpdateStatus</span><span style="color:#6a6ad0">(</span><span style="color:#6a6ad0">);</span></div>
<div class="a t u" style="left:124px;top:835.50px;width:17.3px;text-align:right;color:#303030;font-size:5.9px">31</div>
<div class="a t u" style="left:150.7px;top:835.50px"><span style="color:#2a2af0">void</span><span style="color:#333333"> EddyCurrent_SetCommand</span><span style="color:#6a6ad0">(</span><span style="color:#333333">uint32_t value</span><span style="color:#6a6ad0">);</span></div>
<div class="a t u" style="left:124px;top:843.30px;width:17.3px;text-align:right;color:#303030;font-size:5.9px">32</div>
<div class="a t u" style="left:150.7px;top:843.30px"><span style="color:#2a2af0">void</span><span style="color:#333333"> EddyCurrent_StateMachineWatchDog</span><span style="color:#6a6ad0">(</span><span style="color:#6a6ad0">);</span></div>
<div class="a t u" style="left:124px;top:851.10px;width:17.3px;text-align:right;color:#303030;font-size:5.9px">33</div>
<div class="a t u" style="left:150.7px;top:851.10px"><span style="color:#2a2af0">void</span><span style="color:#333333"> EddyCurrent_CalibrationValueReceived</span><span style="color:#6a6ad0">(</span><span style="color:#333333">uint32_t value</span><span style="color:#6a6ad0">);</span></div>
<div class="a t u" style="left:124px;top:858.90px;width:17.3px;text-align:right;color:#303030;font-size:5.9px">34</div>
<div class="a t u" style="left:150.7px;top:858.90px"><span style="color:#2a2af0">void</span><span style="color:#333333"> EddyCurrent_SetADCChannel</span><span style="color:#6a6ad0">(</span><span style="color:#333333">uint32_t value</span><span style="color:#6a6ad0">);</span></div>
<div class="a t u" style="left:124px;top:866.70px;width:17.3px;text-align:right;color:#303030;font-size:5.9px">35</div>
<div class="a t u" style="left:124px;top:874.50px;width:17.3px;text-align:right;color:#303030;font-size:5.9px">36</div>
<div class="a t u" style="left:150.7px;top:874.50px"><span style="color:#333333">uint32_t EddyCurrent_ReadADC</span><span style="color:#6a6ad0">(</span><span style="color:#2a2af0">void</span><span style="color:#6a6ad0">);</span></div>
<div class="a t u" style="left:124px;top:882.30px;width:17.3px;text-align:right;color:#303030;font-size:5.9px">37</div>
<div class="a t u" style="left:150.7px;top:882.30px"><span style="color:#2a2af0">void</span><span style="color:#333333"> EddyCurrent_CalculateCoefecients</span><span style="color:#6a6ad0">(</span><span style="color:#2a2af0">void</span><span style="color:#6a6ad0">);</span></div>
<div class="a t u" style="left:124px;top:890.10px;width:17.3px;text-align:right;color:#303030;font-size:5.9px">38</div>
<div class="a t u" style="left:124px;top:897.90px;width:17.3px;text-align:right;color:#303030;font-size:5.9px">39</div>
<div class="a t u" style="left:124px;top:905.70px;width:17.3px;text-align:right;color:#303030;font-size:5.9px">40</div>
<div class="a t u" style="left:150.7px;top:905.70px"><span style="color:#20952a">///////////////////////////////////////////////////////////////////////////////////////////////</span></div>
<div class="a t u" style="left:124px;top:913.50px;width:17.3px;text-align:right;color:#303030;font-size:5.9px">41</div>
<div class="a t u" style="left:150.7px;top:913.50px"><span style="color:#20952a">// CAN Interfacing</span></div>
<div class="a t u" style="left:124px;top:921.30px;width:17.3px;text-align:right;color:#303030;font-size:5.9px">42</div>
<div class="a t u" style="left:124px;top:929.10px;width:17.3px;text-align:right;color:#303030;font-size:5.9px">43</div>
<div class="a t u" style="left:150.7px;top:929.10px"><span style="color:#20952a">// Functions</span></div>
<div class="a t u" style="left:124px;top:936.90px;width:17.3px;text-align:right;color:#303030;font-size:5.9px">44</div>
<div class="a t u" style="left:150.7px;top:936.90px"><span style="color:#2a2af0">void</span><span style="color:#333333"> Initialise_MemMaps_Defaults</span><span style="color:#6a6ad0">(</span><span style="color:#2a2af0">void</span><span style="color:#6a6ad0">)</span></div>
<div class="a t u" style="left:124px;top:944.70px;width:17.3px;text-align:right;color:#303030;font-size:5.9px">45</div>
<div class="a t u" style="left:150.7px;top:944.70px"><span style="color:#6a6ad0">{</span></div>
<div class="a t u" style="left:124px;top:952.50px;width:17.3px;text-align:right;color:#303030;font-size:5.9px">46</div>
<div class="a t u" style="left:150.7px;top:952.50px"><span style="color:#20952a">  // Manufacturer Specific</span></div>
<div class="a t u" style="left:124px;top:960.30px;width:17.3px;text-align:right;color:#303030;font-size:5.9px">47</div>
<div class="a t u" style="left:150.7px;top:960.30px"><span style="color:#333333">  </span><span style="color:#2a2af0">for</span><span style="color:#6a6ad0">(</span><span style="color:#2a2af0">int</span><span style="color:#333333"> i</span><span style="color:#6a6ad0">=</span><span style="color:#333333">0</span><span style="color:#6a6ad0">;</span><span style="color:#333333"> i</span><span style="color:#6a6ad0">&lt;</span><span style="color:#333333">MftSpc_MemMap_Len</span><span style="color:#6a6ad0">;</span><span style="color:#333333"> i</span><span style="color:#6a6ad0">++){</span></div>
<div class="a t u" style="left:124px;top:968.10px;width:17.3px;text-align:right;color:#303030;font-size:5.9px">48</div>
<div class="a t u" style="left:150.7px;top:968.10px"><span style="color:#333333">    </span><span style="color:#2a2af0">switch</span><span style="color:#6a6ad0"> (</span><span style="color:#333333">MftSpc_MemMap_StartAddr </span><span style="color:#6a6ad0">+</span><span style="color:#333333"> i</span><span style="color:#6a6ad0">){</span></div>
<div class="a t u" style="left:124px;top:975.90px;width:17.3px;text-align:right;color:#303030;font-size:5.9px">49</div>
<div class="a t u" style="left:150.7px;top:975.90px"><span style="color:#333333">      </span><span style="color:#2a2af0">case</span><span style="color:#333333"> CANOPENOD_ICE_STATUS</span><span style="color:#6a6ad0">:</span></div>
<div class="a" style="left:226.3px;top:663.3px;width:0.7px;height:7.2px;background:#000;"></div>
<svg class="a" style="left:146px;top:945.20px" width="5" height="5"><rect x="0.3" y="0.3" width="4.4" height="4.4" fill="#fff" stroke="#8a8a8a" stroke-width="0.5"/><path d="M1.2 2.5 H3.8" stroke="#333" stroke-width="0.6"/></svg>
<svg class="a" style="left:146px;top:960.80px" width="5" height="5"><rect x="0.3" y="0.3" width="4.4" height="4.4" fill="#fff" stroke="#8a8a8a" stroke-width="0.5"/><path d="M1.2 2.5 H3.8" stroke="#333" stroke-width="0.6"/></svg>
<svg class="a" style="left:146px;top:968.60px" width="5" height="5"><rect x="0.3" y="0.3" width="4.4" height="4.4" fill="#fff" stroke="#8a8a8a" stroke-width="0.5"/><path d="M1.2 2.5 H3.8" stroke="#333" stroke-width="0.6"/></svg>
<div class="a" style="left:148.8px;top:950.2px;width:0.6px;height:4px;background:#8a8a8a;"></div>
<div class="a" style="left:148.8px;top:973.5999999999999px;width:0.6px;height:20px;background:#8a8a8a;"></div>
<svg class="a" style="left:66.5px;top:612px" width="8" height="11"><path d="M0.5 0.5 L0.5 8.5 L2.5 6.8 L4 9.8 L5.3 9.2 L3.9 6.2 L6.6 6.2 Z" fill="#ffffff" stroke="#707070" stroke-width="0.6"/></svg>
<!--CONTENT--></body></html>
